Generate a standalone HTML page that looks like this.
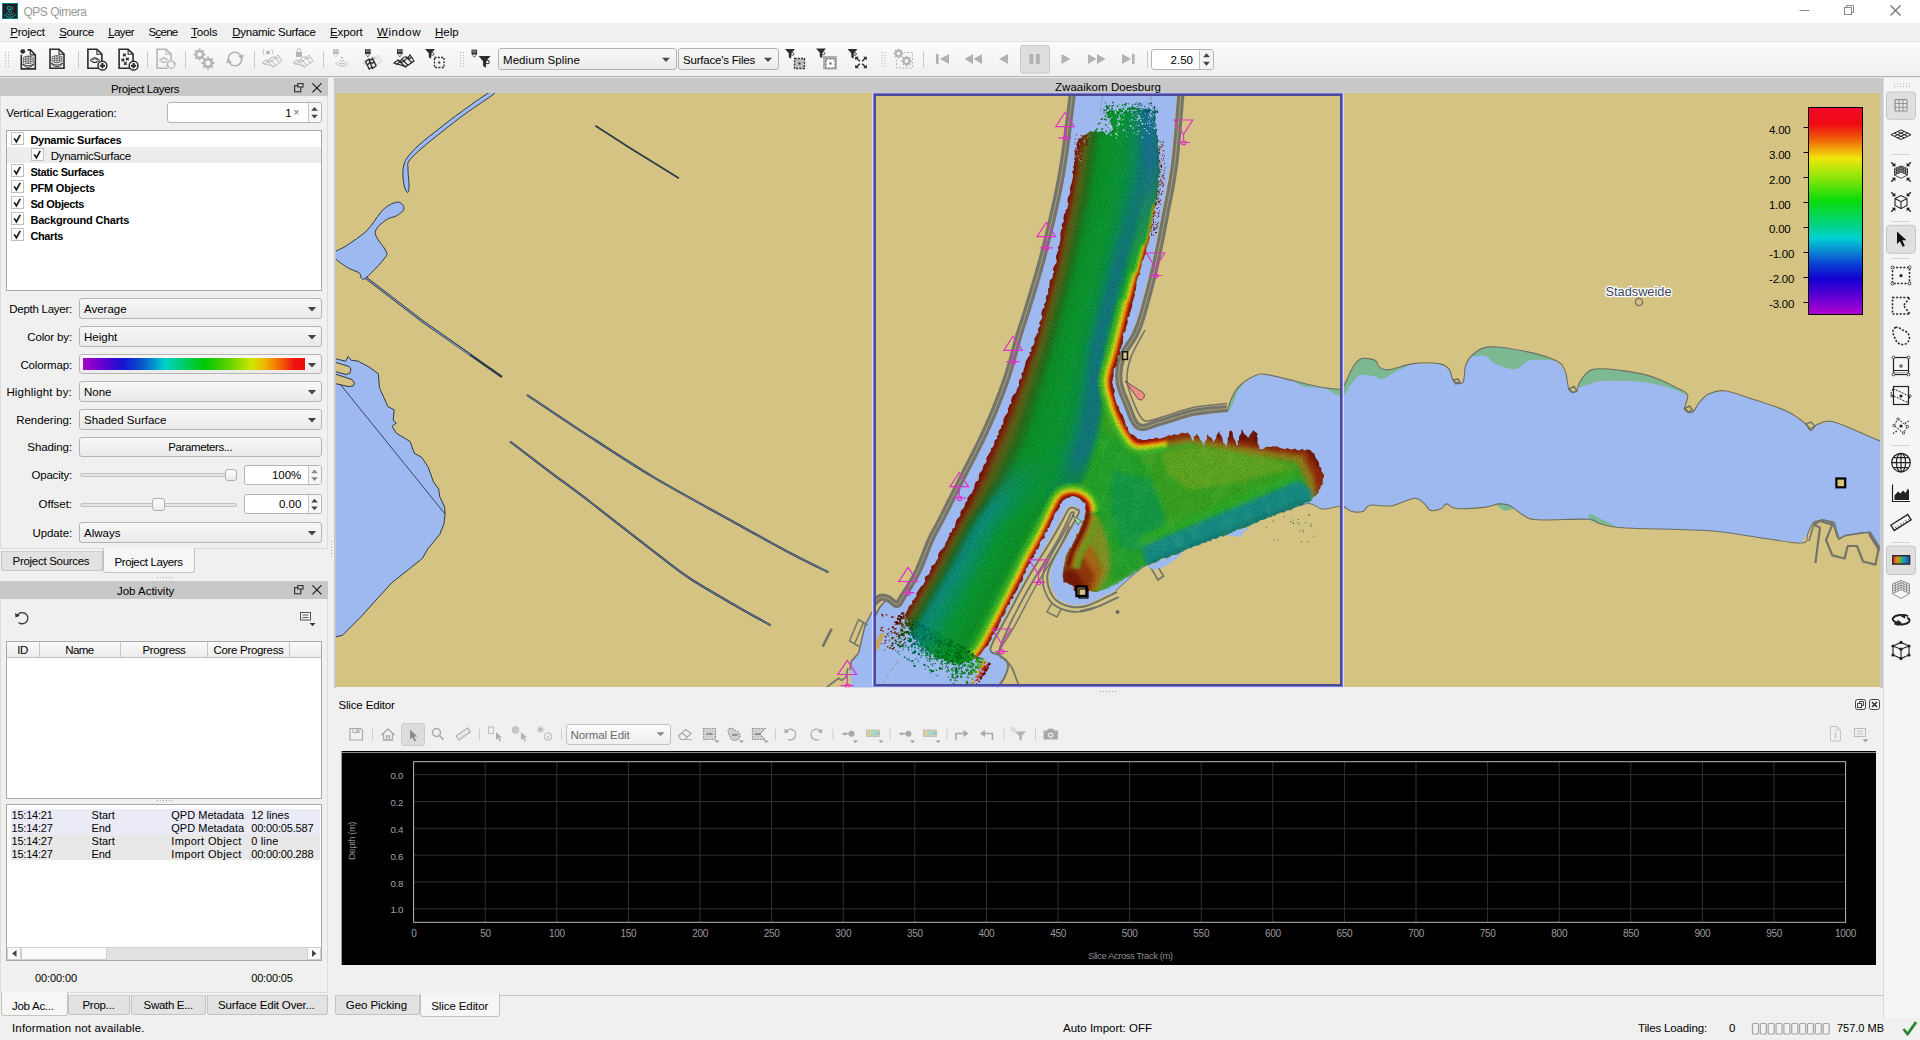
<!DOCTYPE html>
<html><head><meta charset="utf-8"><title>QPS Qimera</title><style>
html,body{margin:0;padding:0}
body{width:1920px;height:1040px;overflow:hidden;position:relative;background:#f0f0f0;font-family:"Liberation Sans",sans-serif;font-size:11.5px;color:#000}
.t{position:absolute;white-space:pre}
u{text-decoration:underline;text-underline-offset:0.6px;text-decoration-thickness:1px}
svg{overflow:visible}
</style></head><body>
<div style="position:absolute;left:0px;top:0px;width:1920px;height:23px;background:#fff"></div>
<svg style="position:absolute;left:2px;top:3px;" width="16" height="16"><rect x="0" y="0" width="16" height="16" fill="#231f20"/><rect x="0.5" y="0.5" width="15" height="15" fill="none" stroke="#0a7d8c" stroke-width="1"/><text x="8" y="6.6" font-family="Liberation Sans" font-size="6" font-weight="bold" fill="#1ea8bc" text-anchor="middle">Qi</text><path d="M5.8 8.3 q2.2 2.65 4.4 0" fill="none" stroke="#1e9cae" stroke-width="1"/><path d="M4 10 q4 4 8 0" fill="none" stroke="#1e9cae" stroke-width="1"/><path d="M2.2 11.7 q5.8 5.35 11.6 0" fill="none" stroke="#1e9cae" stroke-width="1"/></svg>
<div class="t" style="left:23.50px;top:4.94px;font-size:12px;line-height:15px;letter-spacing:-0.501px;color:#999;">QPS Qimera</div>
<svg style="position:absolute;left:0px;top:0px;" width="1920" height="23"><path d="M1799.5 10.5 h10" stroke="#8a8a8a" stroke-width="1"/><rect x="1844.5" y="7.5" width="7" height="7" fill="none" stroke="#8a8a8a"/><path d="M1846.5 7.5 v-2 h7 v7 h-2" fill="none" stroke="#8a8a8a"/><path d="M1890.5 5.5 l10 10 M1900.5 5.5 l-10 10" stroke="#6a6a6a" stroke-width="1.1"/></svg>
<div style="position:absolute;left:0px;top:23px;width:1920px;height:18px;background:#f0f0f0"></div>
<div class="t" style="left:10.20px;top:25.02px;font-size:11.5px;line-height:14px;letter-spacing:-0.184px;"><u>P</u>roject</div>
<div class="t" style="left:59.20px;top:25.02px;font-size:11.5px;line-height:14px;letter-spacing:-0.323px;"><u>S</u>ource</div>
<div class="t" style="left:108.20px;top:25.02px;font-size:11.5px;line-height:14px;letter-spacing:-0.593px;"><u>L</u>ayer</div>
<div class="t" style="left:148.50px;top:25.02px;font-size:11.5px;line-height:14px;letter-spacing:-0.721px;">S<u>c</u>ene</div>
<div class="t" style="left:191.00px;top:25.02px;font-size:11.5px;line-height:14px;letter-spacing:-0.069px;"><u>T</u>ools</div>
<div class="t" style="left:232.30px;top:25.02px;font-size:11.5px;line-height:14px;letter-spacing:-0.277px;"><u>D</u>ynamic Surface</div>
<div class="t" style="left:330.00px;top:25.02px;font-size:11.5px;line-height:14px;letter-spacing:-0.089px;"><u>E</u>xport</div>
<div class="t" style="left:377.00px;top:25.02px;font-size:11.5px;line-height:14px;letter-spacing:0.517px;"><u>W</u>indow</div>
<div class="t" style="left:435.00px;top:25.02px;font-size:11.5px;line-height:14px;letter-spacing:0.012px;"><u>H</u>elp</div>
<div style="position:absolute;left:0px;top:41px;width:1920px;height:35px;background:linear-gradient(#fbfbfb,#f7f7f7 40%,#efefef);border-top:1px solid #e2e2e2;box-sizing:border-box"></div>
<div style="position:absolute;left:0px;top:76px;width:1920px;height:1px;background:#b6b6b6"></div>
<div style="position:absolute;left:0px;top:77px;width:1920px;height:1px;background:#e6e6e6"></div>
<svg style="position:absolute;left:0px;top:0px;" width="1920" height="78"><rect x="5" y="52" width="1" height="1" fill="#b0b0b0"/><rect x="8" y="52" width="1" height="1" fill="#b0b0b0"/><rect x="5" y="54.8" width="1" height="1" fill="#b0b0b0"/><rect x="8" y="54.8" width="1" height="1" fill="#b0b0b0"/><rect x="5" y="57.6" width="1" height="1" fill="#b0b0b0"/><rect x="8" y="57.6" width="1" height="1" fill="#b0b0b0"/><rect x="5" y="60.4" width="1" height="1" fill="#b0b0b0"/><rect x="8" y="60.4" width="1" height="1" fill="#b0b0b0"/><rect x="5" y="63.2" width="1" height="1" fill="#b0b0b0"/><rect x="8" y="63.2" width="1" height="1" fill="#b0b0b0"/><rect x="5" y="66" width="1" height="1" fill="#b0b0b0"/><rect x="8" y="66" width="1" height="1" fill="#b0b0b0"/><rect x="460" y="52" width="1" height="1" fill="#b0b0b0"/><rect x="463" y="52" width="1" height="1" fill="#b0b0b0"/><rect x="460" y="54.8" width="1" height="1" fill="#b0b0b0"/><rect x="463" y="54.8" width="1" height="1" fill="#b0b0b0"/><rect x="460" y="57.6" width="1" height="1" fill="#b0b0b0"/><rect x="463" y="57.6" width="1" height="1" fill="#b0b0b0"/><rect x="460" y="60.4" width="1" height="1" fill="#b0b0b0"/><rect x="463" y="60.4" width="1" height="1" fill="#b0b0b0"/><rect x="460" y="63.2" width="1" height="1" fill="#b0b0b0"/><rect x="463" y="63.2" width="1" height="1" fill="#b0b0b0"/><rect x="460" y="66" width="1" height="1" fill="#b0b0b0"/><rect x="463" y="66" width="1" height="1" fill="#b0b0b0"/><rect x="881.5" y="52" width="1" height="1" fill="#b0b0b0"/><rect x="884.5" y="52" width="1" height="1" fill="#b0b0b0"/><rect x="881.5" y="54.8" width="1" height="1" fill="#b0b0b0"/><rect x="884.5" y="54.8" width="1" height="1" fill="#b0b0b0"/><rect x="881.5" y="57.6" width="1" height="1" fill="#b0b0b0"/><rect x="884.5" y="57.6" width="1" height="1" fill="#b0b0b0"/><rect x="881.5" y="60.4" width="1" height="1" fill="#b0b0b0"/><rect x="884.5" y="60.4" width="1" height="1" fill="#b0b0b0"/><rect x="881.5" y="63.2" width="1" height="1" fill="#b0b0b0"/><rect x="884.5" y="63.2" width="1" height="1" fill="#b0b0b0"/><rect x="881.5" y="66" width="1" height="1" fill="#b0b0b0"/><rect x="884.5" y="66" width="1" height="1" fill="#b0b0b0"/><rect x="78" y="51" width="1" height="17" fill="#c9c9c9"/><rect x="147" y="51" width="1" height="17" fill="#c9c9c9"/><rect x="185" y="51" width="1" height="17" fill="#c9c9c9"/><rect x="254" y="51" width="1" height="17" fill="#c9c9c9"/><rect x="323" y="51" width="1" height="17" fill="#c9c9c9"/><rect x="923" y="51" width="1" height="17" fill="#c9c9c9"/><rect x="1147" y="51" width="1" height="17" fill="#c9c9c9"/><g transform="translate(19.8 48.4)"><path d="M1.5 6.4 V20.5 H15.5 V6.5 L10.5 1.5 H7.7" fill="none" stroke="#2b2b2b" stroke-width="1.6"/><path d="M10.5 1.5 V6.5 H15.5" fill="none" stroke="#2b2b2b" stroke-width="1.1"/><path d="M3.1 8.8 q5.4 -3.2 10.8 0 v5.6 q-5.4 2.4 -10.8 0z" fill="#6a6a6a"/><rect x="4.00" y="9.20" width="1.5" height="1.3" fill="#f2f2f2"/><rect x="6.45" y="8.70" width="1.5" height="1.3" fill="#f2f2f2"/><rect x="8.90" y="8.70" width="1.5" height="1.3" fill="#f2f2f2"/><rect x="11.35" y="9.20" width="1.5" height="1.3" fill="#f2f2f2"/><rect x="4.00" y="11.40" width="1.5" height="1.3" fill="#f2f2f2"/><rect x="6.45" y="10.90" width="1.5" height="1.3" fill="#f2f2f2"/><rect x="8.90" y="10.90" width="1.5" height="1.3" fill="#f2f2f2"/><rect x="11.35" y="11.40" width="1.5" height="1.3" fill="#f2f2f2"/><rect x="4.00" y="13.60" width="1.5" height="1.3" fill="#f2f2f2"/><rect x="6.45" y="13.10" width="1.5" height="1.3" fill="#f2f2f2"/><rect x="8.90" y="13.10" width="1.5" height="1.3" fill="#f2f2f2"/><rect x="11.35" y="13.60" width="1.5" height="1.3" fill="#f2f2f2"/><path d="M3.1 15.6 q5.4 3.6 10.8 0 M3.1 16.4 q5.4 5.2 10.8 0 l0 -1.2" fill="none" stroke="#2b2b2b" stroke-width="0.9"/><path d="M3.1 15.2 v1.4" stroke="#2b2b2b" stroke-width="0.9"/><g transform="translate(1 0.5)"><path d="M-0.5 2.5 l5 0 M2 0 l0 5 M0.2 0.7 l3.6 3.6 M3.8 0.7 l-3.6 3.6" stroke="#2b2b2b" stroke-width="1.2"/><circle cx="2" cy="2.5" r="1.6" fill="#2b2b2b"/></g></g><g transform="translate(48.5 47.7)"><path d="M1.5 1.5 H10.5 L15.5 6.5 V20.5 H1.5 Z" fill="none" stroke="#2b2b2b" stroke-width="1.6" stroke-linejoin="miter"/><path d="M10.5 1.5 V6.5 H15.5" fill="none" stroke="#2b2b2b" stroke-width="1.1"/><path d="M3.1 8.8 q5.4 -3.2 10.8 0 v5.6 q-5.4 2.4 -10.8 0z" fill="#6a6a6a"/><rect x="4.00" y="9.20" width="1.5" height="1.3" fill="#f2f2f2"/><rect x="6.45" y="8.70" width="1.5" height="1.3" fill="#f2f2f2"/><rect x="8.90" y="8.70" width="1.5" height="1.3" fill="#f2f2f2"/><rect x="11.35" y="9.20" width="1.5" height="1.3" fill="#f2f2f2"/><rect x="4.00" y="11.40" width="1.5" height="1.3" fill="#f2f2f2"/><rect x="6.45" y="10.90" width="1.5" height="1.3" fill="#f2f2f2"/><rect x="8.90" y="10.90" width="1.5" height="1.3" fill="#f2f2f2"/><rect x="11.35" y="11.40" width="1.5" height="1.3" fill="#f2f2f2"/><rect x="4.00" y="13.60" width="1.5" height="1.3" fill="#f2f2f2"/><rect x="6.45" y="13.10" width="1.5" height="1.3" fill="#f2f2f2"/><rect x="8.90" y="13.10" width="1.5" height="1.3" fill="#f2f2f2"/><rect x="11.35" y="13.60" width="1.5" height="1.3" fill="#f2f2f2"/><path d="M3.1 15.6 q5.4 3.6 10.8 0 M3.1 16.4 q5.4 5.2 10.8 0 l0 -1.2" fill="none" stroke="#2b2b2b" stroke-width="0.9"/><path d="M3.1 15.2 v1.4" stroke="#2b2b2b" stroke-width="0.9"/></g><g transform="translate(86.4 47.7)"><path d="M1.5 1.5 H10.5 L15.5 6.5 V20.5 H1.5 Z" fill="none" stroke="#2b2b2b" stroke-width="1.6" stroke-linejoin="miter"/><path d="M10.5 1.5 V6.5 H15.5" fill="none" stroke="#2b2b2b" stroke-width="1.1"/><path d="M3.6 12.6 q4.8 -5.2 9.6 0 q-4.8 4.6 -9.6 0z" fill="none" stroke="#2b2b2b" stroke-width="0.95"/><path d="M5.2 12.4 q3.2 -3 6.4 0 M5.8 13.8 q2.6 2 5.2 0" fill="none" stroke="#2b2b2b" stroke-width="0.9"/><circle cx="16" cy="18" r="4.4" fill="#fff" stroke="#2b2b2b" stroke-width="1.5"/><path d="M13.4 18 h5.2 M16 15.4 v5.2" stroke="#2b2b2b" stroke-width="2.1"/></g><g transform="translate(117.6 47.7)"><path d="M1.5 1.5 H10.5 L15.5 6.5 V20.5 H1.5 Z" fill="none" stroke="#2b2b2b" stroke-width="1.6" stroke-linejoin="miter"/><path d="M10.5 1.5 V6.5 H15.5" fill="none" stroke="#2b2b2b" stroke-width="1.1"/><path d="M5.5 6 l2.6 2.6 M8.1 6 l-2.6 2.6" stroke="#2b2b2b" stroke-width="1.25"/><path d="M4 11 l2.6 2.6 M6.6 11 l-2.6 2.6" stroke="#2b2b2b" stroke-width="1.25"/><path d="M8.5 10 l2.6 2.6 M11.1 10 l-2.6 2.6" stroke="#2b2b2b" stroke-width="1.25"/><path d="M6.5 14.5 l2.6 2.6 M9.1 14.5 l-2.6 2.6" stroke="#2b2b2b" stroke-width="1.25"/><circle cx="16" cy="18" r="4.4" fill="#fff" stroke="#2b2b2b" stroke-width="1.5"/><path d="M13.4 18 h5.2 M16 15.4 v5.2" stroke="#2b2b2b" stroke-width="2.1"/></g><g transform="translate(155.6 47.7)"><path d="M1.5 1.5 H10.5 L15.5 6.5 V20.5 H1.5 Z" fill="none" stroke="#b4b4b4" stroke-width="1.6" stroke-linejoin="miter"/><path d="M10.5 1.5 V6.5 H15.5" fill="none" stroke="#b4b4b4" stroke-width="1.1"/><path d="M3.6 12.6 q4.8 -5.2 9.6 0 q-4.8 4.6 -9.6 0z" fill="none" stroke="#b4b4b4" stroke-width="0.95"/><path d="M5.2 12.4 q3.2 -3 6.4 0 M5.8 13.8 q2.6 2 5.2 0" fill="none" stroke="#b4b4b4" stroke-width="0.9"/><circle cx="15.5" cy="17" r="5" fill="#f3f3f3"/><path d="M11.90 17.51 A3.60 3.60 0 0 1 18.79 15.56" fill="none" stroke="#b4b4b4" stroke-width="1.1"/><path d="M19.10 16.49 A3.60 3.60 0 0 1 12.21 18.44" fill="none" stroke="#b4b4b4" stroke-width="1.1"/><path d="M17.15 15.15 L20.44 14.74 L19.31 17.72 Z" fill="#b4b4b4"/><path d="M13.85 18.85 L10.56 19.26 L11.69 16.28 Z" fill="#b4b4b4"/></g><path d="M203.91 53.35 L205.45 53.70 L205.45 55.30 L203.91 55.65 L203.43 56.80 L204.27 58.14 L203.14 59.27 L201.80 58.43 L200.65 58.91 L200.30 60.45 L198.70 60.45 L198.35 58.91 L197.20 58.43 L195.86 59.27 L194.73 58.14 L195.57 56.80 L195.09 55.65 L193.55 55.30 L193.55 53.70 L195.09 53.35 L195.57 52.20 L194.73 50.86 L195.86 49.73 L197.20 50.57 L198.35 50.09 L198.70 48.55 L200.30 48.55 L200.65 50.09 L201.80 50.57 L203.14 49.73 L204.27 50.86 L203.43 52.20Z M197.34 54.50 a2.16 2.16 0 1 0 4.32 0 a2.16 2.16 0 1 0 -4.32 0z" fill="#b4b4b4" fill-rule="evenodd"/><path d="M212.85 61.73 L214.54 62.12 L214.54 63.88 L212.85 64.27 L212.33 65.53 L213.25 67.00 L212.00 68.25 L210.53 67.33 L209.27 67.85 L208.88 69.54 L207.12 69.54 L206.73 67.85 L205.47 67.33 L204.00 68.25 L202.75 67.00 L203.67 65.53 L203.15 64.27 L201.46 63.88 L201.46 62.12 L203.15 61.73 L203.67 60.47 L202.75 59.00 L204.00 57.75 L205.47 58.67 L206.73 58.15 L207.12 56.46 L208.88 56.46 L209.27 58.15 L210.53 58.67 L212.00 57.75 L213.25 59.00 L212.33 60.47Z M205.62 63.00 a2.38 2.38 0 1 0 4.75 0 a2.38 2.38 0 1 0 -4.75 0z" fill="#b4b4b4" fill-rule="evenodd"/><path d="M228.40 59.94 A6.60 6.60 0 0 1 241.03 56.36" fill="none" stroke="#b4b4b4" stroke-width="1.6"/><path d="M241.60 58.06 A6.60 6.60 0 0 1 228.97 61.64" fill="none" stroke="#b4b4b4" stroke-width="1.6"/><path d="M238.02 55.61 L244.05 54.85 L241.98 60.32 Z" fill="#b4b4b4"/><path d="M231.98 62.39 L225.95 63.15 L228.02 57.68 Z" fill="#b4b4b4"/><g transform="translate(262 57)"><g transform="translate(0 0)" fill="none" stroke="#b4b4b4" stroke-width="0.9"><path d="M0 6 l4 -3 q2 2 4 -1 q2 -3 4 -2 q2 1.6 4 -2 l4 6 l-8 5.5 z"/><path d="M4 3 l8 7.5 M8 2 l6 6.5 M12 0 l6 5.8 M2 7.7 l5 -3.6 q2 2 4 -1 q2 -3 4 -2 q1 1 2.6 -1"/></g></g><circle cx="268" cy="52.5" r="2" fill="#b4b4b4"/><path d="M264 55 a5 5 0 0 1 0 -6 M271.5 49 a5 5 0 0 1 1 5" fill="none" stroke="#b4b4b4" stroke-width="0.8"/><g transform="translate(293 57)"><g transform="translate(0 0)" fill="none" stroke="#b4b4b4" stroke-width="0.9"><path d="M0 6 l4 -3 q2 2 4 -1 q2 -3 4 -2 q2 1.6 4 -2 l4 6 l-8 5.5 z"/><path d="M4 3 l8 7.5 M8 2 l6 6.5 M12 0 l6 5.8 M2 7.7 l5 -3.6 q2 2 4 -1 q2 -3 4 -2 q1 1 2.6 -1"/></g></g><rect x="296" y="52" width="6" height="5" fill="#b4b4b4"/><path d="M297.2 52 v-1.5 a1.8 1.8 0 0 1 3.6 0 v1.5" fill="none" stroke="#b4b4b4" stroke-width="1"/><g transform="translate(333 49)"><path d="M0 0 h5.6 v4.6 l-2.8 3.6 l-2.8 -3.6z" fill="#b4b4b4"/><path d="M1.4 0 v3.4 M2.8 0 v3.4 M4.2 0 v3.4" stroke="#fff" stroke-width="0.45"/><path d="M0.9 5 l1.9 2.3 l1.9 -2.3z" fill="#fff"/></g><path d="M339.8 60 q2.2 2.96 4.4 0" fill="none" stroke="#b4b4b4" stroke-width="0.9"/><path d="M337.7 61.5 q4.3 4.64 8.6 0" fill="none" stroke="#b4b4b4" stroke-width="0.9"/><path d="M335.6 63 q6.4 6.32 12.8 0" fill="none" stroke="#b4b4b4" stroke-width="0.9"/><circle cx="342" cy="57.6" r="0.9" fill="#b4b4b4"/><g transform="translate(365 49)"><path d="M0 0 h5.6 v4.6 l-2.8 3.6 l-2.8 -3.6z" fill="#2b2b2b"/><path d="M1.4 0 v3.4 M2.8 0 v3.4 M4.2 0 v3.4" stroke="#fff" stroke-width="0.45"/><path d="M0.9 5 l1.9 2.3 l1.9 -2.3z" fill="#fff"/></g><g transform="translate(362 57)"><g transform="translate(0 0)" fill="none" stroke="#d2d2d2" stroke-width="0.9"><path d="M0 6 l4 -3 q2 2 4 -1 q2 -3 4 -2 q2 1.6 4 -2 l4 6 l-8 5.5 z"/><path d="M4 3 l8 7.5 M8 2 l6 6.5 M12 0 l6 5.8 M2 7.7 l5 -3.6 q2 2 4 -1 q2 -3 4 -2 q1 1 2.6 -1"/></g></g><path d="M365.5 61.5 l3.5 -2.5 q2 1.8 3.6 -0.6 l3.5 7.5 l-3.5 2.6 q-1.5 -1.5 -3.4 0.6 z M367 65 l3.6 -2.6 q2 1.6 3.6 -0.8 M368.8 59.5 l3.6 8.4" fill="none" stroke="#2b2b2b" stroke-width="1.3"/><g transform="translate(397 49)"><path d="M0 0 h5.6 v4.6 l-2.8 3.6 l-2.8 -3.6z" fill="#2b2b2b"/><path d="M1.4 0 v3.4 M2.8 0 v3.4 M4.2 0 v3.4" stroke="#fff" stroke-width="0.45"/><path d="M0.9 5 l1.9 2.3 l1.9 -2.3z" fill="#fff"/></g><g transform="translate(394 57)"><g transform="translate(0 0)" fill="none" stroke="#2b2b2b" stroke-width="1.2"><path d="M0 6 l4 -3 q2 2 4 -1 q2 -3 4 -2 q2 1.6 4 -2 l4 6 l-8 5.5 z"/><path d="M4 3 l8 7.5 M8 2 l6 6.5 M12 0 l6 5.8 M2 7.7 l5 -3.6 q2 2 4 -1 q2 -3 4 -2 q1 1 2.6 -1"/></g></g><g transform="translate(425 49) scale(0.95)"><path d="M0 0 h10.5 l-4 4.6 v5.6 l-2.5 -1.6 v-4z" fill="#2b2b2b"/><circle cx="7.8" cy="5.2" r="1.5" fill="#fff" stroke="#2b2b2b" stroke-width="0.9"/></g><rect x="434.5" y="57.5" width="9.5" height="10" fill="none" stroke="#2b2b2b" stroke-width="1.3" stroke-dasharray="2 1.3"/><rect x="438.25" y="61.5" width="2" height="2" fill="#2b2b2b"/><g transform="translate(471.5 49.5)"><path d="M0 0 h5.6 v4.6 l-2.8 3.6 l-2.8 -3.6z" fill="#2b2b2b"/><path d="M1.4 0 v3.4 M2.8 0 v3.4 M4.2 0 v3.4" stroke="#fff" stroke-width="0.45"/><path d="M0.9 5 l1.9 2.3 l1.9 -2.3z" fill="#fff"/></g><g transform="translate(478.5 56) scale(1.15)"><path d="M0 0 h10.5 l-4 4.6 v5.6 l-2.5 -1.6 v-4z" fill="#2b2b2b"/><circle cx="7.8" cy="5.2" r="1.5" fill="#fff" stroke="#2b2b2b" stroke-width="0.9"/></g><g transform="translate(785 49) scale(0.95)"><path d="M0 0 h10.5 l-4 4.6 v5.6 l-2.5 -1.6 v-4z" fill="#2b2b2b"/><circle cx="7.8" cy="5.2" r="1.5" fill="#fff" stroke="#2b2b2b" stroke-width="0.9"/></g><rect x="794.5" y="58.5" width="10" height="10" fill="#bdbdbd" stroke="#2b2b2b" stroke-width="1.3" stroke-dasharray="2 1.3"/><rect x="798.5" y="62.5" width="2" height="2" fill="#2b2b2b"/><g transform="translate(816 48.5) scale(0.95)"><path d="M0 0 h10.5 l-4 4.6 v5.6 l-2.5 -1.6 v-4z" fill="#2b2b2b"/><circle cx="7.8" cy="5.2" r="1.5" fill="#fff" stroke="#2b2b2b" stroke-width="0.9"/></g><rect x="823" y="56" width="14" height="13.5" fill="#b0b0b0"/><rect x="826" y="59" width="9" height="9" fill="#fff" stroke="#555" stroke-width="1" stroke-dasharray="2 1.3"/><rect x="829.5" y="62.5" width="2" height="2" fill="#555"/><g transform="translate(847.5 49) scale(0.95)"><path d="M0 0 h10.5 l-4 4.6 v5.6 l-2.5 -1.6 v-4z" fill="#2b2b2b"/><circle cx="7.8" cy="5.2" r="1.5" fill="#fff" stroke="#2b2b2b" stroke-width="0.9"/></g><path d="M859.8 61.3 l-3.6 -3.6" stroke="#2b2b2b" stroke-width="1.5"/><path d="M855.2 56.7 l3.6 0 l-3.6 3.6 z" fill="#2b2b2b"/><path d="M862.2 61.3 l3.6 -3.6" stroke="#2b2b2b" stroke-width="1.5"/><path d="M866.8 56.7 l-3.6 0 l3.6 3.6 z" fill="#2b2b2b"/><path d="M859.8 63.7 l-3.6 3.6" stroke="#2b2b2b" stroke-width="1.5"/><path d="M855.2 68.3 l3.6 0 l-3.6 -3.6 z" fill="#2b2b2b"/><path d="M862.2 63.7 l3.6 3.6" stroke="#2b2b2b" stroke-width="1.5"/><path d="M866.8 68.3 l-3.6 0 l3.6 -3.6 z" fill="#2b2b2b"/><rect x="896.5" y="52.5" width="16" height="15.5" fill="none" stroke="#b4b4b4" stroke-dasharray="2 1.6"/><circle cx="898.5" cy="54" r="6" fill="#f6f6f6"/><circle cx="906.5" cy="61" r="5.6" fill="#f4f4f4"/><path d="M902.18 52.54 L903.46 52.83 L903.46 54.17 L902.18 54.46 L901.78 55.42 L902.47 56.53 L901.53 57.47 L900.42 56.78 L899.46 57.18 L899.17 58.46 L897.83 58.46 L897.54 57.18 L896.58 56.78 L895.47 57.47 L894.53 56.53 L895.22 55.42 L894.82 54.46 L893.54 54.17 L893.54 52.83 L894.82 52.54 L895.22 51.58 L894.53 50.47 L895.47 49.53 L896.58 50.22 L897.54 49.82 L897.83 48.54 L899.17 48.54 L899.46 49.82 L900.42 50.22 L901.53 49.53 L902.47 50.47 L901.78 51.58Z M896.70 53.50 a1.80 1.80 0 1 0 3.60 0 a1.80 1.80 0 1 0 -3.60 0z" fill="#b4b4b4" fill-rule="evenodd"/><path d="M910.47 59.96 L911.85 60.28 L911.85 61.72 L910.47 62.04 L910.04 63.07 L910.79 64.28 L909.78 65.29 L908.57 64.54 L907.54 64.97 L907.22 66.35 L905.78 66.35 L905.46 64.97 L904.43 64.54 L903.22 65.29 L902.21 64.28 L902.96 63.07 L902.53 62.04 L901.15 61.72 L901.15 60.28 L902.53 59.96 L902.96 58.93 L902.21 57.72 L903.22 56.71 L904.43 57.46 L905.46 57.03 L905.78 55.65 L907.22 55.65 L907.54 57.03 L908.57 57.46 L909.78 56.71 L910.79 57.72 L910.04 58.93Z M904.56 61.00 a1.94 1.94 0 1 0 3.89 0 a1.94 1.94 0 1 0 -3.89 0z" fill="#b4b4b4" fill-rule="evenodd"/><rect x="936" y="54" width="2.6" height="10" fill="#b2b2b2"/><path d="M949 54 v10 l-9 -5 z" fill="#b2b2b2"/><path d="M973 54 v10 l-8.5 -5 z" fill="#b2b2b2"/><path d="M982 54 v10 l-8.5 -5 z" fill="#b2b2b2"/><path d="M1008 54 v10 l-9 -5 z" fill="#b2b2b2"/><rect x="1020.5" y="45.5" width="29" height="27.5" rx="2.5" fill="#dedede" stroke="#c8c8c8"/><rect x="1029.5" y="54" width="3.8" height="10" fill="#b2b2b2"/><rect x="1036" y="54" width="3.8" height="10" fill="#b2b2b2"/><path d="M1061.5 54 v10 l9 -5 z" fill="#b2b2b2"/><path d="M1088 54 v10 l8.5 -5 z" fill="#b2b2b2"/><path d="M1097 54 v10 l8.5 -5 z" fill="#b2b2b2"/><path d="M1122 54 v10 l9 -5 z" fill="#b2b2b2"/><rect x="1132" y="54" width="2.6" height="10" fill="#b2b2b2"/></svg>
<div style="position:absolute;left:498px;top:48px;width:179px;height:22px;background:linear-gradient(#f8f8f8,#ebebeb);border:1px solid #b4b4b4;border-radius:3px;box-sizing:border-box"></div>
<div class="t" style="left:503.00px;top:53.02px;font-size:11.5px;line-height:14px;letter-spacing:0.072px;">Medium Spline</div>
<svg style="position:absolute;left:661px;top:57px;" width="10" height="6"><path d="M1 0.8 h8 l-4 4.2z" fill="#4a4a4a"/></svg>
<div style="position:absolute;left:678px;top:48px;width:101px;height:22px;background:linear-gradient(#f8f8f8,#ebebeb);border:1px solid #b4b4b4;border-radius:3px;box-sizing:border-box"></div>
<div class="t" style="left:683.00px;top:53.02px;font-size:11.5px;line-height:14px;letter-spacing:-0.203px;">Surface's Files</div>
<svg style="position:absolute;left:762.5px;top:57px;" width="10" height="6"><path d="M1 0.8 h8 l-4 4.2z" fill="#4a4a4a"/></svg>
<div style="position:absolute;left:1151px;top:49px;width:63px;height:21px;background:#fff;border:1px solid #b4b4b4;border-radius:3px;box-sizing:border-box"></div>
<div style="position:absolute;left:1199px;top:50px;width:14px;height:19px;background:#f4f4f4;border-left:1px solid #c4c4c4;border-radius:0 3px 3px 0;box-sizing:border-box"></div>
<div class="t" style="left:1170.62px;top:53.02px;font-size:11.5px;line-height:14px;">2.50</div>
<svg style="position:absolute;left:1201px;top:51px;" width="12" height="17"><path d="M2 6.2 l3.5 -4 l3.5 4z M2 10.8 l3.5 4 l3.5 -4z" fill="#444"/></svg>
<div style="position:absolute;left:331px;top:541px;width:1px;height:1px;background:#a8a8a8"></div><div style="position:absolute;left:331px;top:544px;width:1px;height:1px;background:#a8a8a8"></div><div style="position:absolute;left:331px;top:547px;width:1px;height:1px;background:#a8a8a8"></div><div style="position:absolute;left:331px;top:550px;width:1px;height:1px;background:#a8a8a8"></div><div style="position:absolute;left:331px;top:553px;width:1px;height:1px;background:#a8a8a8"></div><div style="position:absolute;left:331px;top:556px;width:1px;height:1px;background:#a8a8a8"></div>
<div style="position:absolute;left:0px;top:78px;width:328px;height:18px;background:#c8c8c8"></div>
<div class="t" style="left:111.00px;top:82.02px;font-size:11.5px;line-height:14px;letter-spacing:-0.393px;">Project Layers</div>
<svg style="position:absolute;left:293.5px;top:82.5px;" width="10" height="10"><rect x="0.6" y="2.6" width="6.2" height="6.2" fill="none" stroke="#333" stroke-width="1.15"/><rect x="3.8" y="0.6" width="5.2" height="3.4" fill="#d4d4d4" stroke="#333" stroke-width="1.15"/></svg>
<svg style="position:absolute;left:312px;top:83px;" width="10" height="10"><path d="M0.4 0.4 l9 9 M9.4 0.4 l-9 9" stroke="#111" stroke-width="1.05"/></svg>
<div style="position:absolute;left:0px;top:96px;width:328px;height:453px;background:#f0f0f0;border:1px solid #dcdcdc;border-top:none;box-sizing:border-box"></div>
<div class="t" style="left:6.20px;top:105.72px;font-size:11.5px;line-height:14px;letter-spacing:-0.067px;">Vertical Exaggeration:</div>
<div style="position:absolute;left:167px;top:102px;width:155px;height:21px;background:#fff;border:1px solid #b5b5b5;border-radius:3px;box-sizing:border-box"></div><div style="position:absolute;left:308px;top:103px;width:13px;height:19px;background:#f6f6f6;border-left:1px solid #c6c6c6;border-radius:0 3px 3px 0;box-sizing:border-box"></div><svg style="position:absolute;left:309px;top:103px;" width="12" height="19"><path d="M2.2 7.7 l3.3 -3.8 l3.3 3.8z M2.2 11.7 l3.3 3.8 l3.3 -3.8z" fill="#444"/></svg><div class="t" style="left:0.00px;top:-10.98px;font-size:11.5px;line-height:14px;"></div>
<div class="t" style="left:285.20px;top:105.72px;font-size:11.5px;line-height:14px;">1</div>
<div class="t" style="left:293.50px;top:107.23px;font-size:10px;line-height:12px;color:#666;">×</div>
<div style="position:absolute;left:6px;top:130px;width:316px;height:161px;background:#fff;border:1px solid #a9a9a9;box-sizing:border-box"></div>
<div style="position:absolute;left:7px;top:147px;width:314px;height:16px;background:#ededed"></div>
<div style="position:absolute;left:10.5px;top:132.2px;width:13px;height:13px;background:#fff;border:1px solid #c0c0c0;box-sizing:border-box"></div><svg style="position:absolute;left:10.5px;top:132.2px;" width="13" height="13"><path d="M3.2 6.4 l2.2 3.4 l3.8 -7" fill="none" stroke="#1a1a1a" stroke-width="1.7"/></svg>
<div class="t" style="left:30.40px;top:132.89px;font-size:11px;line-height:14px;letter-spacing:-0.273px;font-weight:bold;">Dynamic Surfaces</div>
<div style="position:absolute;left:30.5px;top:148.2px;width:13px;height:13px;background:#fff;border:1px solid #c0c0c0;box-sizing:border-box"></div><svg style="position:absolute;left:30.5px;top:148.2px;" width="13" height="13"><path d="M3.2 6.4 l2.2 3.4 l3.8 -7" fill="none" stroke="#1a1a1a" stroke-width="1.7"/></svg>
<div class="t" style="left:50.80px;top:148.72px;font-size:11.5px;line-height:14px;letter-spacing:-0.311px;">DynamicSurface</div>
<div style="position:absolute;left:10.5px;top:164.2px;width:13px;height:13px;background:#fff;border:1px solid #c0c0c0;box-sizing:border-box"></div><svg style="position:absolute;left:10.5px;top:164.2px;" width="13" height="13"><path d="M3.2 6.4 l2.2 3.4 l3.8 -7" fill="none" stroke="#1a1a1a" stroke-width="1.7"/></svg>
<div class="t" style="left:30.40px;top:164.89px;font-size:11px;line-height:14px;letter-spacing:-0.392px;font-weight:bold;">Static Surfaces</div>
<div style="position:absolute;left:10.5px;top:180.1px;width:13px;height:13px;background:#fff;border:1px solid #c0c0c0;box-sizing:border-box"></div><svg style="position:absolute;left:10.5px;top:180.1px;" width="13" height="13"><path d="M3.2 6.4 l2.2 3.4 l3.8 -7" fill="none" stroke="#1a1a1a" stroke-width="1.7"/></svg>
<div class="t" style="left:30.40px;top:180.79px;font-size:11px;line-height:14px;letter-spacing:-0.202px;font-weight:bold;">PFM Objects</div>
<div style="position:absolute;left:10.5px;top:196.1px;width:13px;height:13px;background:#fff;border:1px solid #c0c0c0;box-sizing:border-box"></div><svg style="position:absolute;left:10.5px;top:196.1px;" width="13" height="13"><path d="M3.2 6.4 l2.2 3.4 l3.8 -7" fill="none" stroke="#1a1a1a" stroke-width="1.7"/></svg>
<div class="t" style="left:30.40px;top:196.79px;font-size:11px;line-height:14px;letter-spacing:-0.376px;font-weight:bold;">Sd Objects</div>
<div style="position:absolute;left:10.5px;top:212.1px;width:13px;height:13px;background:#fff;border:1px solid #c0c0c0;box-sizing:border-box"></div><svg style="position:absolute;left:10.5px;top:212.1px;" width="13" height="13"><path d="M3.2 6.4 l2.2 3.4 l3.8 -7" fill="none" stroke="#1a1a1a" stroke-width="1.7"/></svg>
<div class="t" style="left:30.40px;top:212.79px;font-size:11px;line-height:14px;letter-spacing:-0.192px;font-weight:bold;">Background Charts</div>
<div style="position:absolute;left:10.5px;top:228.1px;width:13px;height:13px;background:#fff;border:1px solid #c0c0c0;box-sizing:border-box"></div><svg style="position:absolute;left:10.5px;top:228.1px;" width="13" height="13"><path d="M3.2 6.4 l2.2 3.4 l3.8 -7" fill="none" stroke="#1a1a1a" stroke-width="1.7"/></svg>
<div class="t" style="left:30.40px;top:228.79px;font-size:11px;line-height:14px;letter-spacing:-0.373px;font-weight:bold;">Charts</div>
<div class="t" style="left:9.20px;top:301.92px;font-size:11.5px;line-height:14px;letter-spacing:-0.253px;">Depth Layer:</div>
<div class="t" style="left:27.30px;top:330.02px;font-size:11.5px;line-height:14px;letter-spacing:-0.146px;">Color by:</div>
<div class="t" style="left:20.40px;top:357.72px;font-size:11.5px;line-height:14px;letter-spacing:-0.160px;">Colormap:</div>
<div class="t" style="left:6.40px;top:385.02px;font-size:11.5px;line-height:14px;letter-spacing:0.178px;">Highlight by:</div>
<div class="t" style="left:16.20px;top:412.92px;font-size:11.5px;line-height:14px;letter-spacing:-0.045px;">Rendering:</div>
<div class="t" style="left:27.30px;top:440.22px;font-size:11.5px;line-height:14px;letter-spacing:-0.087px;">Shading:</div>
<div class="t" style="left:31.50px;top:468.12px;font-size:11.5px;line-height:14px;letter-spacing:-0.210px;">Opacity:</div>
<div class="t" style="left:38.50px;top:497.12px;font-size:11.5px;line-height:14px;letter-spacing:-0.023px;">Offset:</div>
<div class="t" style="left:32.60px;top:525.92px;font-size:11.5px;line-height:14px;letter-spacing:-0.125px;">Update:</div>
<div style="position:absolute;left:79px;top:298px;width:243px;height:21px;background:linear-gradient(#f7f7f7,#eaeaea);border:1px solid #b5b5b5;border-radius:3px;box-sizing:border-box"></div><svg style="position:absolute;left:307px;top:307px;" width="10" height="6"><path d="M0.8 0 h8.4 l-4.2 4.4z" fill="#444"/></svg><div class="t" style="left:84.00px;top:302.22px;font-size:11.5px;line-height:14px;">Average</div>
<div style="position:absolute;left:79px;top:326px;width:243px;height:21px;background:linear-gradient(#f7f7f7,#eaeaea);border:1px solid #b5b5b5;border-radius:3px;box-sizing:border-box"></div><svg style="position:absolute;left:307px;top:335px;" width="10" height="6"><path d="M0.8 0 h8.4 l-4.2 4.4z" fill="#444"/></svg><div class="t" style="left:84.00px;top:330.22px;font-size:11.5px;line-height:14px;">Height</div>
<div style="position:absolute;left:79px;top:354px;width:243px;height:20px;background:linear-gradient(#f7f7f7,#eaeaea);border:1px solid #b5b5b5;border-radius:3px;box-sizing:border-box"></div><svg style="position:absolute;left:307px;top:363px;" width="10" height="6"><path d="M0.8 0 h8.4 l-4.2 4.4z" fill="#444"/></svg>
<div style="position:absolute;left:83px;top:357.5px;width:222px;height:12px;background:linear-gradient(90deg,#a800c8 0%,#5a00d0 10%,#1414d2 18%,#0a50c8 26%,#00a0d0 33%,#00d2c8 37%,#00cc60 46%,#00c800 55%,#64d200 66%,#d2e600 76%,#f0b400 82%,#f06400 89%,#f01414 95%,#f00a0a 100%)"></div>
<div style="position:absolute;left:79px;top:381px;width:243px;height:21px;background:linear-gradient(#f7f7f7,#eaeaea);border:1px solid #b5b5b5;border-radius:3px;box-sizing:border-box"></div><svg style="position:absolute;left:307px;top:390px;" width="10" height="6"><path d="M0.8 0 h8.4 l-4.2 4.4z" fill="#444"/></svg><div class="t" style="left:84.00px;top:385.22px;font-size:11.5px;line-height:14px;">None</div>
<div style="position:absolute;left:79px;top:409px;width:243px;height:21px;background:linear-gradient(#f7f7f7,#eaeaea);border:1px solid #b5b5b5;border-radius:3px;box-sizing:border-box"></div><svg style="position:absolute;left:307px;top:418px;" width="10" height="6"><path d="M0.8 0 h8.4 l-4.2 4.4z" fill="#444"/></svg><div class="t" style="left:84.00px;top:413.22px;font-size:11.5px;line-height:14px;">Shaded Surface</div>
<div style="position:absolute;left:79px;top:436.5px;width:243px;height:20.5px;background:linear-gradient(#f9f9f9,#e9e9e9);border:1px solid #b5b5b5;border-radius:3px;box-sizing:border-box"></div>
<div class="t" style="left:168.20px;top:440.22px;font-size:11.5px;line-height:14px;letter-spacing:-0.386px;">Parameters...</div>
<div style="position:absolute;left:80px;top:473.2px;width:157px;height:4px;background:#e4e4e4;border:1px solid #c2c2c2;border-radius:2px;box-sizing:border-box"></div><div style="position:absolute;left:224.5px;top:468.7px;width:12.5px;height:12.5px;background:linear-gradient(#fdfdfd,#ececec);border:1px solid #b0b0b0;border-radius:3px;box-sizing:border-box"></div>
<div style="position:absolute;left:244px;top:465px;width:78px;height:20px;background:#fff;border:1px solid #b5b5b5;border-radius:3px;box-sizing:border-box"></div><div style="position:absolute;left:308px;top:466px;width:13px;height:18px;background:#f6f6f6;border-left:1px solid #c6c6c6;border-radius:0 3px 3px 0;box-sizing:border-box"></div><svg style="position:absolute;left:309px;top:466px;" width="12" height="18"><path d="M2.2 7.2 l3.3 -3.8 l3.3 3.8z M2.2 11.2 l3.3 3.8 l3.3 -3.8z" fill="#888"/></svg><div class="t" style="left:271.89px;top:468.12px;font-size:11.5px;line-height:14px;">100%</div>
<div style="position:absolute;left:80px;top:502.5px;width:157px;height:4px;background:#e4e4e4;border:1px solid #c2c2c2;border-radius:2px;box-sizing:border-box"></div><div style="position:absolute;left:152px;top:498px;width:12.5px;height:12.5px;background:linear-gradient(#fdfdfd,#ececec);border:1px solid #b0b0b0;border-radius:3px;box-sizing:border-box"></div>
<div style="position:absolute;left:244px;top:493.5px;width:78px;height:20.5px;background:#fff;border:1px solid #b5b5b5;border-radius:3px;box-sizing:border-box"></div><div style="position:absolute;left:308px;top:494.5px;width:13px;height:18.5px;background:#f6f6f6;border-left:1px solid #c6c6c6;border-radius:0 3px 3px 0;box-sizing:border-box"></div><svg style="position:absolute;left:309px;top:494.5px;" width="12" height="18.5"><path d="M2.2 7.45 l3.3 -3.8 l3.3 3.8z M2.2 11.45 l3.3 3.8 l3.3 -3.8z" fill="#444"/></svg><div class="t" style="left:278.92px;top:497.12px;font-size:11.5px;line-height:14px;">0.00</div>
<div style="position:absolute;left:79px;top:521.5px;width:243px;height:21px;background:linear-gradient(#f7f7f7,#eaeaea);border:1px solid #b5b5b5;border-radius:3px;box-sizing:border-box"></div><svg style="position:absolute;left:307px;top:530.5px;" width="10" height="6"><path d="M0.8 0 h8.4 l-4.2 4.4z" fill="#444"/></svg><div class="t" style="left:84.00px;top:525.72px;font-size:11.5px;line-height:14px;">Always</div>
<div style="position:absolute;left:1px;top:551px;width:101.5px;height:20px;background:#e2e2e2;border:1px solid #c3c3c3;border-top-color:#d0d0d0;border-radius:0 0 3px 3px;box-sizing:border-box"></div>
<div class="t" style="left:12.60px;top:553.82px;font-size:11.5px;line-height:14px;letter-spacing:-0.298px;">Project Sources</div>
<div style="position:absolute;left:102.5px;top:548px;width:92px;height:24.5px;background:#f6f6f6;border:1px solid #c3c3c3;border-top:none;border-radius:0 0 3px 3px;box-sizing:border-box"></div>
<div class="t" style="left:114.40px;top:554.62px;font-size:11.5px;line-height:14px;letter-spacing:-0.371px;">Project Layers</div>
<div style="position:absolute;left:157px;top:576.5px;width:1px;height:1px;background:#a8a8a8"></div><div style="position:absolute;left:160px;top:576.5px;width:1px;height:1px;background:#a8a8a8"></div><div style="position:absolute;left:163px;top:576.5px;width:1px;height:1px;background:#a8a8a8"></div><div style="position:absolute;left:166px;top:576.5px;width:1px;height:1px;background:#a8a8a8"></div><div style="position:absolute;left:169px;top:576.5px;width:1px;height:1px;background:#a8a8a8"></div><div style="position:absolute;left:172px;top:576.5px;width:1px;height:1px;background:#a8a8a8"></div>
<div style="position:absolute;left:0px;top:580.5px;width:328px;height:18px;background:#c8c8c8"></div>
<div class="t" style="left:117.00px;top:583.92px;font-size:11.5px;line-height:14px;letter-spacing:-0.018px;">Job Activity</div>
<svg style="position:absolute;left:293.5px;top:584.8px;" width="10" height="10"><rect x="0.6" y="2.6" width="6.2" height="6.2" fill="none" stroke="#333" stroke-width="1.15"/><rect x="3.8" y="0.6" width="5.2" height="3.4" fill="#d4d4d4" stroke="#333" stroke-width="1.15"/></svg>
<svg style="position:absolute;left:312px;top:585.2px;" width="10" height="10"><path d="M0.4 0.4 l9 9 M9.4 0.4 l-9 9" stroke="#111" stroke-width="1.05"/></svg>
<div style="position:absolute;left:0px;top:598.5px;width:328px;height:394.5px;background:#f0f0f0;border:1px solid #dcdcdc;border-top:none;box-sizing:border-box"></div>
<svg style="position:absolute;left:14px;top:610px;" width="16" height="16"><path d="M3 6.2 A5.6 5.6 0 1 1 4.6 12.4" fill="none" stroke="#333" stroke-width="1.3"/><path d="M1 3 l0.6 4.6 l4.2 -1.8z" fill="#333"/></svg>
<svg style="position:absolute;left:299px;top:611px;" width="20" height="16"><rect x="1.5" y="1.5" width="10" height="7.5" fill="none" stroke="#555" stroke-width="1"/><path d="M3.5 4 h6 M3.5 6.5 h6" stroke="#555" stroke-width="0.9"/><path d="M10.5 12 h6 l-3 3.2z" fill="#333"/></svg>
<div style="position:absolute;left:6px;top:640.5px;width:316px;height:158px;background:#fff;border:1px solid #a9a9a9;box-sizing:border-box"></div>
<div style="position:absolute;left:7px;top:641.5px;width:314px;height:16px;background:linear-gradient(#fafafa,#ececec);border-bottom:1px solid #bdbdbd;box-sizing:border-box"></div>
<div style="position:absolute;left:38.5px;top:641.5px;width:1px;height:16px;background:#c6c6c6"></div>
<div style="position:absolute;left:119.5px;top:641.5px;width:1px;height:16px;background:#c6c6c6"></div>
<div style="position:absolute;left:207px;top:641.5px;width:1px;height:16px;background:#c6c6c6"></div>
<div style="position:absolute;left:288.5px;top:641.5px;width:1px;height:16px;background:#c6c6c6"></div>
<div class="t" style="left:17.30px;top:643.32px;font-size:11.5px;line-height:14px;letter-spacing:-0.550px;">ID</div>
<div class="t" style="left:65.30px;top:643.32px;font-size:11.5px;line-height:14px;letter-spacing:-0.619px;">Name</div>
<div class="t" style="left:142.40px;top:643.32px;font-size:11.5px;line-height:14px;letter-spacing:-0.377px;">Progress</div>
<div class="t" style="left:213.50px;top:643.32px;font-size:11.5px;line-height:14px;letter-spacing:-0.318px;">Core Progress</div>
<div style="position:absolute;left:157px;top:800.3px;width:1px;height:1px;background:#a8a8a8"></div><div style="position:absolute;left:160px;top:800.3px;width:1px;height:1px;background:#a8a8a8"></div><div style="position:absolute;left:163px;top:800.3px;width:1px;height:1px;background:#a8a8a8"></div><div style="position:absolute;left:166px;top:800.3px;width:1px;height:1px;background:#a8a8a8"></div><div style="position:absolute;left:169px;top:800.3px;width:1px;height:1px;background:#a8a8a8"></div><div style="position:absolute;left:172px;top:800.3px;width:1px;height:1px;background:#a8a8a8"></div>
<div style="position:absolute;left:6px;top:803.5px;width:316px;height:157px;background:#fff;border:1px solid #a9a9a9;box-sizing:border-box"></div>
<div style="position:absolute;left:11px;top:808.5px;width:309px;height:25.5px;background:#ebebf8"></div>
<div style="position:absolute;left:11px;top:834px;width:309px;height:26px;background:#e8e8e8"></div>
<div class="t" style="left:11.50px;top:808.09px;font-size:11px;line-height:14px;letter-spacing:-0.214px;">15:14:21</div>
<div class="t" style="left:91.60px;top:808.09px;font-size:11px;line-height:14px;letter-spacing:-0.026px;">Start</div>
<div class="t" style="left:171.30px;top:808.09px;font-size:11px;line-height:14px;letter-spacing:0.012px;">QPD Metadata</div>
<div class="t" style="left:251.20px;top:808.09px;font-size:11px;line-height:14px;letter-spacing:0.011px;">12 lines</div>
<div class="t" style="left:11.50px;top:821.09px;font-size:11px;line-height:14px;letter-spacing:-0.214px;">15:14:27</div>
<div class="t" style="left:91.60px;top:821.09px;font-size:11px;line-height:14px;letter-spacing:-0.124px;">End</div>
<div class="t" style="left:171.30px;top:821.09px;font-size:11px;line-height:14px;letter-spacing:0.012px;">QPD Metadata</div>
<div class="t" style="left:251.20px;top:821.09px;font-size:11px;line-height:14px;letter-spacing:-0.160px;">00:00:05.587</div>
<div class="t" style="left:11.50px;top:834.19px;font-size:11px;line-height:14px;letter-spacing:-0.214px;">15:14:27</div>
<div class="t" style="left:91.60px;top:834.19px;font-size:11px;line-height:14px;letter-spacing:-0.026px;">Start</div>
<div class="t" style="left:171.30px;top:834.19px;font-size:11px;line-height:14px;letter-spacing:0.337px;">Import Object</div>
<div class="t" style="left:251.20px;top:834.19px;font-size:11px;line-height:14px;letter-spacing:0.184px;">0 line</div>
<div class="t" style="left:11.50px;top:846.89px;font-size:11px;line-height:14px;letter-spacing:-0.214px;">15:14:27</div>
<div class="t" style="left:91.60px;top:846.89px;font-size:11px;line-height:14px;letter-spacing:-0.124px;">End</div>
<div class="t" style="left:171.30px;top:846.89px;font-size:11px;line-height:14px;letter-spacing:0.337px;">Import Object</div>
<div class="t" style="left:251.20px;top:846.89px;font-size:11px;line-height:14px;letter-spacing:-0.160px;">00:00:00.288</div>
<div style="position:absolute;left:7px;top:946.5px;width:314px;height:13px;background:#e2e2e2;border-top:1px solid #cfcfcf;box-sizing:border-box"></div>
<div style="position:absolute;left:7px;top:946.5px;width:13.5px;height:13px;background:#fbfbfb;border:1px solid #cfcfcf;box-sizing:border-box"></div>
<div style="position:absolute;left:307px;top:946.5px;width:14px;height:13px;background:#fbfbfb;border:1px solid #cfcfcf;box-sizing:border-box"></div>
<div style="position:absolute;left:20.5px;top:946.5px;width:86px;height:13px;background:#fafafa;border:1px solid #cfcfcf;box-sizing:border-box"></div>
<svg style="position:absolute;left:7px;top:946.5px;" width="14" height="13"><path d="M9.5 3 v7 l-4.4 -3.5z" fill="#444"/></svg>
<svg style="position:absolute;left:307px;top:946.5px;" width="14" height="13"><path d="M5 3 v7 l4.4 -3.5z" fill="#444"/></svg>
<div class="t" style="left:35.10px;top:970.79px;font-size:11px;line-height:14px;letter-spacing:-0.127px;">00:00:00</div>
<div class="t" style="left:251.20px;top:970.79px;font-size:11px;line-height:14px;letter-spacing:-0.164px;">00:00:05</div>
<div style="position:absolute;left:1px;top:992px;width:66.5px;height:24px;background:#f6f6f6;border:1px solid #c3c3c3;border-top:none;border-radius:0 0 3px 3px;box-sizing:border-box"></div>
<div class="t" style="left:12.00px;top:999.02px;font-size:11.5px;line-height:14px;letter-spacing:-0.278px;">Job Ac...</div>
<div style="position:absolute;left:68px;top:995px;width:62px;height:19.5px;background:#e2e2e2;border:1px solid #c3c3c3;border-top-color:#d0d0d0;border-radius:0 0 3px 3px;box-sizing:border-box"></div>
<div class="t" style="left:82.40px;top:997.92px;font-size:11.5px;line-height:14px;letter-spacing:-0.225px;">Prop...</div>
<div style="position:absolute;left:131px;top:995px;width:74.5px;height:19.5px;background:#e2e2e2;border:1px solid #c3c3c3;border-top-color:#d0d0d0;border-radius:0 0 3px 3px;box-sizing:border-box"></div>
<div class="t" style="left:143.60px;top:997.92px;font-size:11.5px;line-height:14px;letter-spacing:-0.321px;">Swath E...</div>
<div style="position:absolute;left:207px;top:995px;width:120.5px;height:19.5px;background:#e2e2e2;border:1px solid #c3c3c3;border-top-color:#d0d0d0;border-radius:0 0 3px 3px;box-sizing:border-box"></div>
<div class="t" style="left:218.10px;top:997.92px;font-size:11.5px;line-height:14px;letter-spacing:-0.160px;">Surface Edit Over...</div>
<div style="position:absolute;left:334px;top:78px;width:1549px;height:15px;background:#c8c8c8"></div>
<div style="position:absolute;left:1880px;top:78px;width:3px;height:610px;background:#c8c8c8"></div>
<div style="position:absolute;left:334px;top:78px;width:2px;height:610px;background:#c8c8c8"></div>
<svg style="position:absolute;left:0px;top:0px;" width="1920" height="700"><defs><clipPath id="mapclip"><rect x="336" y="93" width="1544" height="594.5"/></clipPath></defs><g clip-path="url(#mapclip)"><rect x="335" y="93" width="1545" height="594" fill="#d4c383"/><path d="M488.5 93.0 C482.8 96.2 469.1 106.2 461.0 112.0 C452.9 117.8 447.0 122.5 440.0 128.0 C433.0 133.5 424.5 140.0 419.0 145.0 C413.5 150.0 409.6 154.3 407.0 158.0 C404.4 161.7 404.2 163.8 403.5 167.0 C402.8 170.2 402.8 173.7 403.0 177.0 C403.2 180.3 403.8 184.4 404.5 187.0 C405.2 189.6 406.8 192.3 407.5 192.5 C408.2 192.7 408.8 190.4 409.0 188.0 C409.2 185.6 408.7 181.3 408.5 178.0 C408.3 174.7 407.9 170.8 408.0 168.0 C408.1 165.2 406.7 164.3 409.0 161.0 C411.3 157.7 416.3 153.0 422.0 148.0 C427.7 143.0 435.8 136.7 443.0 131.0 C450.2 125.3 456.3 120.3 465.0 114.0 C473.7 107.7 491.1 96.5 495.0 93.0 C498.9 89.5 494.2 89.8 488.5 93.0Z" fill="#9db9f0" stroke="#2c3a48" stroke-width="1"/><path d="M335.0 252.0 C336.9 249.9 341.4 249.1 346.7 245.5 C352.0 241.9 361.1 236.2 366.7 230.7 C372.3 225.2 377.0 216.8 380.5 212.7 C384.0 208.6 385.1 207.7 387.9 205.9 C390.7 204.1 394.9 202.2 397.4 202.1 C399.9 202.0 402.2 203.9 403.1 205.3 C404.1 206.7 404.2 208.8 403.1 210.6 C402.0 212.4 399.2 214.3 396.3 215.9 C393.4 217.5 389.3 217.3 385.8 220.1 C382.3 222.9 375.2 227.7 375.2 232.8 C375.2 237.9 384.2 246.6 385.8 250.8 C387.4 255.0 387.9 253.8 384.7 258.2 C381.5 262.6 370.6 273.8 366.7 277.2 C362.8 280.6 362.6 279.0 361.4 278.3 C360.2 277.6 361.6 274.8 359.3 273.0 C357.0 271.2 351.8 270.2 347.7 267.7 C343.6 265.2 337.1 260.8 335.0 258.2 C332.9 255.6 333.1 254.1 335.0 252.0Z" fill="#9db9f0" stroke="#2c3a48" stroke-width="1"/><path d="M365.5 277.5 L423.5 322 L502 377" fill="none" stroke="#2c3a48" stroke-width="2.4"/><path d="M365.5 277.5 L423.5 322 L470 355" fill="none" stroke="#9db9f0" stroke-width="0.9"/><path d="M595.4 125.8 L630 148 L678.9 178.2" fill="none" stroke="#2c3a48" stroke-width="1.7"/><path d="M527.0 394.8 C536.7 401.3 564.4 420.1 585.4 433.8 C606.4 447.5 628.9 462.5 653.0 476.9 C677.1 491.3 706.9 507.2 730.0 520.0 C753.1 532.8 775.1 545.1 791.5 553.8 C807.9 562.5 822.3 569.2 828.5 572.3" fill="none" stroke="#2c3a48" stroke-width="2.2"/><path d="M527.0 394.8 C536.7 401.3 564.4 420.1 585.4 433.8 C606.4 447.5 628.9 462.5 653.0 476.9 C677.1 491.3 706.9 507.2 730.0 520.0 C753.1 532.8 775.1 545.1 791.5 553.8 C807.9 562.5 822.3 569.2 828.5 572.3" fill="none" stroke="#7f9fd8" stroke-width="0.7"/><path d="M510.0 441.5 C516.4 446.4 534.9 460.6 548.5 470.8 C562.1 481.1 574.1 489.7 591.5 503.0 C608.9 516.3 636.6 538.2 653.0 550.8 C669.4 563.4 675.6 569.0 690.0 578.5 C704.4 588.0 725.8 599.9 739.2 607.7 C752.6 615.5 765.4 622.3 770.6 625.2" fill="none" stroke="#2c3a48" stroke-width="2.2"/><path d="M510.0 441.5 C516.4 446.4 534.9 460.6 548.5 470.8 C562.1 481.1 574.1 489.7 591.5 503.0 C608.9 516.3 636.6 538.2 653.0 550.8 C669.4 563.4 675.6 569.0 690.0 578.5 C704.4 588.0 725.8 599.9 739.2 607.7 C752.6 615.5 765.4 622.3 770.6 625.2" fill="none" stroke="#7f9fd8" stroke-width="0.7"/><path d="M831.7 628.6 L822.7 646.6" stroke="#74746a" stroke-width="2.6"/><path d="M335.0 358.6 L345.6 361.2 L348.1 356.5 L350.9 360.1 L358.3 361.2 L369.9 367.5 L378.4 373.8 L379.4 387.6 L387.9 406.6 L394.2 409.8 L393.2 420.4 L396.3 422.9 L392.1 426.3 L396.3 433.1 L410.1 441.5 L414.3 453.2 L421.7 457.4 L428.1 466.9 L433.4 481.7 L438.7 489.1 L439.7 496.5 L444.6 507.1 L445.0 514.5 L443.9 524.0 L439.7 534.6 L428.1 548.4 L422.3 558.5 L391.5 583.0 L360.8 616.9 L342.3 635.4 L335.0 637.0 L330.0 637.0 L330.0 358.6Z" fill="#9db9f0" stroke="#2c3a48" stroke-width="1"/><path d="M335.0 362.2 L349.0 366.5 L351.0 369.0 L350.0 373.0 L346.0 374.5 L335.0 371.5Z" fill="#d4c383" stroke="#2c3a48" stroke-width="1"/><path d="M335.0 374.0 L352.0 379.5 L354.5 383.0 L353.0 386.0 L348.0 386.5 L335.0 383.5Z" fill="#d4c383" stroke="#2c3a48" stroke-width="1"/><path d="M340.3 384.4 L445 513.9" stroke="#2c3a48" stroke-width="0.9"/><path d="M873.5 611.0 L865.0 625.5 L858.6 653.0 L851.2 661.4 L850.2 670.0 L851.2 688.0 L873.5 688.0Z" fill="#9db9f0"/><path d="M872 612 L865 625.5 L858.6 653 L851.2 661.4 L850.2 670" fill="none" stroke="#74746a" stroke-width="1.6"/><path d="M867.5 625 L858.5 619.5 L849.5 641 L859 646.5 M863.5 622.5 L854.5 644" fill="none" stroke="#74746a" stroke-width="1.5"/><path d="M827 687 L838.5 678.3 L841.7 680.4 L846 677.3 L848 668" fill="none" stroke="#74746a" stroke-width="1.6"/><path d="M1076.0 93.0 L1066.5 165.0 L1056.5 215.0 L1044.0 265.0 L1029.0 315.0 L1022.5 335.0 L1009.5 380.0 L989.5 430.0 L964.5 480.0 L944.5 520.0 L934.0 540.0 L921.0 572.0 L905.0 597.0 L897.0 606.0 L888.0 600.5 L884.0 602.0 L879.0 609.0 L875.0 616.0 L875.0 686.0 L997.0 686.0 L1005.0 677.0 L1007.0 664.0 L1000.0 656.0 L988.0 648.0 L1004.0 618.0 L1025.0 579.0 L1048.5 541.0 L1061.0 519.0 L1066.5 508.5 L1071.0 505.5 L1077.0 507.0 L1080.5 512.5 L1068.0 536.0 L1054.5 560.0 L1049.5 574.0 L1051.0 588.0 L1058.0 599.5 L1072.5 605.5 L1087.5 604.0 L1116.0 590.5 L1147.0 564.5 L1185.0 549.5 L1227.0 531.5 L1252.0 523.0 L1290.0 509.0 L1309.0 503.5 L1322.0 509.0 L1335.0 507.1 L1343.0 505.8 L1351.2 511.2 L1363.3 511.2 L1370.0 505.2 L1391.5 505.8 L1414.4 498.2 L1423.8 503.1 L1430.6 510.4 L1441.4 508.5 L1446.7 503.9 L1456.2 508.5 L1485.8 507.1 L1499.2 503.9 L1510.0 505.8 L1523.5 515.2 L1536.9 519.8 L1588.1 519.2 L1598.9 523.3 L1623.0 527.7 L1709.0 530.8 L1755.4 537.0 L1801.5 543.0 L1807.7 533.8 L1813.0 523.0 L1820.0 520.5 L1832.0 523.0 L1838.0 538.0 L1845.0 536.0 L1869.0 533.0 L1879.0 549.0 L1881.0 552.0 L1881.0 441.5 L1863.0 433.8 L1832.3 421.5 L1817.0 424.6 L1810.8 430.8 L1804.6 423.0 L1786.0 410.8 L1755.4 400.0 L1724.6 390.8 L1709.2 393.8 L1700.0 401.5 L1692.3 412.3 L1684.6 409.2 L1687.7 395.4 L1678.5 388.8 L1651.5 376.6 L1620.4 370.4 L1592.1 369.6 L1580.0 381.9 L1576.0 391.4 L1569.2 390.0 L1565.2 371.2 L1555.8 360.4 L1523.5 351.0 L1488.5 346.9 L1472.3 355.0 L1465.6 365.8 L1462.9 382.5 L1453.5 380.6 L1449.4 369.8 L1440.0 363.9 L1413.1 363.6 L1388.9 369.8 L1379.4 367.1 L1375.4 360.4 L1361.9 358.5 L1353.8 365.8 L1344.4 384.6 L1339.8 389.2 L1317.0 386.5 L1295.4 381.2 L1265.8 374.4 L1255.0 375.8 L1238.9 386.5 L1230.8 400.0 L1227.0 412.0 L1193.0 416.0 L1161.0 425.5 L1136.0 430.0 L1123.0 404.0 L1115.0 381.0 L1118.0 357.0 L1131.0 335.0 L1138.5 315.0 L1151.5 265.0 L1161.5 215.0 L1170.5 165.0 L1177.0 93.0Z" fill="#9db9f0"/><path d="M1343.0 393.0 C1343.0 391.3 1342.6 389.1 1344.4 384.6 C1346.2 380.1 1350.9 370.2 1353.8 365.8 C1356.7 361.4 1358.3 359.4 1361.9 358.5 C1365.5 357.6 1372.5 359.0 1375.4 360.4 C1378.3 361.8 1377.2 365.5 1379.4 367.1 C1381.7 368.7 1383.7 370.2 1388.9 369.8 C1394.1 369.4 1409.1 364.2 1410.4 364.4 C1411.8 364.6 1401.7 368.6 1397.0 371.0 C1392.3 373.4 1385.6 378.1 1382.0 379.0 C1378.4 379.9 1379.0 377.1 1375.4 376.5 C1371.8 375.9 1364.7 373.8 1360.6 375.2 C1356.5 376.6 1353.7 381.3 1351.0 384.6 C1348.3 387.9 1345.7 393.6 1344.4 395.0 C1343.1 396.4 1343.0 394.7 1343.0 393.0Z" fill="#7cb892"/><path d="M1472.3 355.0 C1474.5 353.4 1480.0 347.6 1488.5 346.9 C1497.0 346.2 1512.3 348.8 1523.5 351.0 C1534.7 353.2 1551.3 358.8 1555.8 360.4 C1560.3 362.0 1554.9 360.4 1550.4 360.4 C1545.9 360.4 1534.3 359.0 1528.9 360.4 C1523.5 361.8 1521.6 367.2 1518.0 368.5 C1514.4 369.8 1511.3 368.9 1507.3 368.0 C1503.3 367.1 1497.5 364.9 1493.9 363.0 C1490.3 361.1 1489.0 357.4 1485.8 356.3 C1482.6 355.2 1477.2 356.5 1475.0 356.3 C1472.8 356.1 1470.0 356.6 1472.3 355.0Z" fill="#7cb892"/><path d="M1580.0 381.9 C1582.2 378.9 1585.4 371.5 1592.1 369.6 C1598.8 367.7 1610.5 369.2 1620.4 370.4 C1630.3 371.6 1641.8 373.5 1651.5 376.6 C1661.2 379.7 1672.8 385.6 1678.5 388.8 C1684.2 392.0 1686.4 395.8 1686.0 396.0 C1685.6 396.2 1682.0 392.2 1676.0 390.0 C1670.0 387.8 1659.3 384.5 1650.0 383.0 C1640.7 381.5 1628.5 381.3 1620.0 381.0 C1611.5 380.7 1604.2 380.8 1598.9 381.4 C1593.6 382.0 1591.5 383.6 1588.1 384.6 C1584.7 385.6 1580.0 387.8 1578.7 387.3 C1577.4 386.9 1577.8 384.8 1580.0 381.9Z" fill="#7cb892"/><path d="M1227.0 412.0 C1226.8 411.0 1228.8 404.2 1230.8 400.0 C1232.8 395.8 1236.9 389.2 1238.9 386.5 C1240.9 383.8 1243.3 382.9 1243.0 384.0 C1242.7 385.1 1238.8 389.3 1237.0 393.0 C1235.2 396.7 1233.7 402.8 1232.0 406.0 C1230.3 409.2 1227.2 413.0 1227.0 412.0Z" fill="#7cb892"/><path d="M1295.4 381.2 C1298.7 381.8 1309.6 385.2 1317.0 386.5 C1324.4 387.8 1335.5 388.3 1339.8 389.2 C1344.1 390.1 1343.0 390.9 1343.0 392.0 C1343.0 393.1 1343.1 396.7 1339.8 396.0 C1336.5 395.3 1328.6 389.5 1323.0 388.0 C1317.4 386.5 1310.3 387.8 1306.0 387.0 C1301.7 386.2 1298.8 384.0 1297.0 383.0 C1295.2 382.0 1292.1 380.6 1295.4 381.2Z" fill="#7cb892"/><path d="M1496.5 504.0 C1496.5 503.5 1497.0 503.6 1499.2 503.9 C1501.5 504.2 1507.7 505.0 1510.0 505.8 C1512.3 506.6 1514.0 507.7 1513.2 508.5 C1512.4 509.3 1507.4 510.9 1505.0 510.6 C1502.6 510.4 1500.4 508.1 1499.0 507.0 C1497.6 505.9 1496.5 504.5 1496.5 504.0Z" fill="#7cb892"/><path d="M1589.4 513.8 C1590.9 513.5 1594.6 515.9 1598.9 518.0 C1603.2 520.1 1615.0 525.6 1615.0 526.5 C1615.0 527.4 1603.1 524.4 1598.9 523.3 C1594.7 522.2 1591.6 521.6 1590.0 520.0 C1588.4 518.4 1587.9 514.1 1589.4 513.8Z" fill="#7cb892"/><path d="M1343.0 505.8 C1344.4 506.7 1347.8 510.3 1351.2 511.2 C1354.6 512.1 1360.2 512.2 1363.3 511.2 C1366.4 510.2 1365.3 506.1 1370.0 505.2 C1374.7 504.3 1384.1 507.0 1391.5 505.8 C1398.9 504.6 1409.0 498.6 1414.4 498.2 C1419.8 497.8 1421.1 501.1 1423.8 503.1 C1426.5 505.1 1427.7 509.5 1430.6 510.4 C1433.5 511.3 1438.7 509.6 1441.4 508.5 C1444.1 507.4 1444.2 503.9 1446.7 503.9 C1449.2 503.9 1449.7 508.0 1456.2 508.5 C1462.7 509.0 1478.6 507.9 1485.8 507.1 C1493.0 506.3 1495.2 504.1 1499.2 503.9 C1503.2 503.7 1506.0 503.9 1510.0 505.8 C1514.0 507.7 1519.0 512.9 1523.5 515.2 C1528.0 517.5 1526.1 519.1 1536.9 519.8 C1547.7 520.5 1577.8 518.6 1588.1 519.2 C1598.4 519.8 1593.1 521.9 1598.9 523.3 C1604.7 524.7 1604.7 526.5 1623.0 527.7 C1641.3 529.0 1686.9 529.2 1709.0 530.8 C1731.1 532.3 1740.0 535.0 1755.4 537.0 C1770.8 539.0 1792.8 543.5 1801.5 543.0 C1810.2 542.5 1805.8 537.1 1807.7 533.8 C1809.6 530.5 1811.0 525.2 1813.0 523.0 C1815.0 520.8 1816.8 520.5 1820.0 520.5 C1823.2 520.5 1829.0 520.1 1832.0 523.0 C1835.0 525.9 1835.8 535.8 1838.0 538.0 C1840.2 540.2 1839.8 536.8 1845.0 536.0 C1850.2 535.2 1863.3 530.8 1869.0 533.0 C1874.7 535.2 1877.0 545.8 1879.0 549.0 C1881.0 552.2 1880.7 551.5 1881.0 552.0" fill="none" stroke="#6e6e62" stroke-width="1.1"/><path d="M1881.0 441.5 C1878.0 440.2 1871.1 437.1 1863.0 433.8 C1854.9 430.5 1840.0 423.0 1832.3 421.5 C1824.6 420.0 1820.6 423.1 1817.0 424.6 C1813.4 426.2 1812.9 431.1 1810.8 430.8 C1808.7 430.5 1808.7 426.3 1804.6 423.0 C1800.5 419.7 1794.2 414.6 1786.0 410.8 C1777.8 407.0 1765.6 403.3 1755.4 400.0 C1745.2 396.7 1732.3 391.8 1724.6 390.8 C1716.9 389.8 1713.3 392.0 1709.2 393.8 C1705.1 395.6 1702.8 398.4 1700.0 401.5 C1697.2 404.6 1694.9 411.0 1692.3 412.3 C1689.7 413.6 1685.4 412.0 1684.6 409.2 C1683.8 406.4 1688.7 398.8 1687.7 395.4 C1686.7 392.0 1684.5 391.9 1678.5 388.8 C1672.5 385.7 1661.2 379.7 1651.5 376.6 C1641.8 373.5 1630.3 371.6 1620.4 370.4 C1610.5 369.2 1598.8 367.7 1592.1 369.6 C1585.4 371.5 1582.7 378.3 1580.0 381.9 C1577.3 385.5 1577.8 390.0 1576.0 391.4 C1574.2 392.8 1571.0 393.4 1569.2 390.0 C1567.4 386.6 1567.4 376.1 1565.2 371.2 C1563.0 366.3 1562.8 363.8 1555.8 360.4 C1548.8 357.0 1534.7 353.2 1523.5 351.0 C1512.3 348.8 1497.0 346.2 1488.5 346.9 C1480.0 347.6 1476.1 351.9 1472.3 355.0 C1468.5 358.1 1467.2 361.2 1465.6 365.8 C1464.0 370.4 1464.9 380.0 1462.9 382.5 C1460.9 385.0 1455.8 382.7 1453.5 380.6 C1451.2 378.5 1451.7 372.6 1449.4 369.8 C1447.2 367.0 1446.0 364.9 1440.0 363.9 C1434.0 362.9 1421.6 362.6 1413.1 363.6 C1404.6 364.6 1394.5 369.2 1388.9 369.8 C1383.3 370.4 1381.7 368.7 1379.4 367.1 C1377.2 365.5 1378.3 361.8 1375.4 360.4 C1372.5 359.0 1365.5 357.6 1361.9 358.5 C1358.3 359.4 1356.7 361.4 1353.8 365.8 C1350.9 370.2 1346.7 380.7 1344.4 384.6 C1342.1 388.5 1344.4 388.9 1339.8 389.2 C1335.2 389.5 1324.4 387.8 1317.0 386.5 C1309.6 385.2 1303.9 383.2 1295.4 381.2 C1286.9 379.2 1272.5 375.3 1265.8 374.4 C1259.1 373.5 1259.5 373.8 1255.0 375.8 C1250.5 377.8 1242.9 382.5 1238.9 386.5 C1234.9 390.5 1232.8 395.8 1230.8 400.0 C1228.8 404.2 1227.6 410.0 1227.0 412.0" fill="none" stroke="#6e6e62" stroke-width="1.1"/><path d="M1116.0 590.5 C1121.2 586.2 1135.5 571.3 1147.0 564.5 C1158.5 557.7 1171.7 555.0 1185.0 549.5 C1198.3 544.0 1215.8 535.9 1227.0 531.5 C1238.2 527.1 1241.5 526.8 1252.0 523.0 C1262.5 519.2 1280.5 512.2 1290.0 509.0 C1299.5 505.8 1303.7 503.5 1309.0 503.5 C1314.3 503.5 1317.7 508.4 1322.0 509.0 C1326.3 509.6 1331.5 507.6 1335.0 507.1 C1338.5 506.6 1341.7 506.0 1343.0 505.8" fill="none" stroke="#6e6e62" stroke-width="1"/><path d="M1453 380 l3 4 l4 -2 l-2 -3z M1569 389 l4 3.500 l4 -1.500 l-3 -4.500z M1684.500 408.500 l4 3.500 l4 -2 l-3 -4z M1806 424 l4 5 l5 -3 l-4 -4z" fill="none" stroke="#6e6e62" stroke-width="1.4"/><path d="M1815.4 563 L1820 527.7 L1813.8 524.6 L1820 521 L1832.3 524.6 L1826 540 L1832.3 555.4 L1844.6 558.500 L1847.700 546 L1857 546 L1863 561.500 L1875.400 564.600 L1878.500 549.200 L1869 533.800" fill="none" stroke="#74746a" stroke-width="2.200" stroke-linejoin="round"/><path d="M1809 541 L1814 524 L1822 519.500 L1834 522.500 L1839 539 L1845 535.500 L1870 532 L1880 548" fill="none" stroke="#74746a" stroke-width="1.600"/></g></svg>
<svg style="position:absolute;left:0px;top:0px;" width="1920" height="700"><defs><clipPath id="mapclip2"><rect x="336" y="93" width="1544" height="594.5"/></clipPath><filter id="bl" color-interpolation-filters="sRGB" x="-5%" y="-5%" width="110%" height="110%"><feGaussianBlur stdDeviation="1.6"/></filter><filter id="bl1" color-interpolation-filters="sRGB" x="-5%" y="-5%" width="110%" height="110%"><feGaussianBlur stdDeviation="0.9"/></filter><filter id="bl2" color-interpolation-filters="sRGB" x="-5%" y="-5%" width="110%" height="110%"><feGaussianBlur stdDeviation="2.3"/></filter><filter id="nz" x="0" y="0" width="100%" height="100%"><feTurbulence type="fractalNoise" baseFrequency="0.9 0.7" numOctaves="2" seed="4" result="t"/><feColorMatrix in="t" type="matrix" values="0 0 0 0 0  0 0 0 0 0  0 0 0 0 0  1.6 1.2 0 0 -1.05"/></filter><filter id="nz2" x="0" y="0" width="100%" height="100%"><feTurbulence type="fractalNoise" baseFrequency="0.09 0.06" numOctaves="2" seed="9" result="t"/><feColorMatrix in="t" type="matrix" values="0 0 0 0 1  0 0 0 0 1  0 0 0 0 0.4  1.8 1.4 0 0 -1.35"/></filter><clipPath id="surfclip"><path d="M1077.7 140.7 L1079.1 138.8 L1081.6 137.9 L1082.6 135.2 L1085.5 134.7 L1087.9 133.1 L1090.6 131.0 L1092.9 132.1 L1095.3 131.2 L1097.6 132.2 L1100.1 131.6 L1102.7 131.8 L1105.3 132.7 L1108.3 133.7 L1110.2 131.2 L1112.4 131.2 L1112.5 128.7 L1112.4 126.2 L1110.9 124.2 L1109.8 122.1 L1109.9 119.5 L1107.1 118.4 L1107.7 115.6 L1105.7 113.6 L1107.6 112.0 L1109.5 110.6 L1111.9 109.6 L1114.7 110.3 L1117.1 108.5 L1119.8 109.0 L1122.4 108.7 L1125.0 107.7 L1127.5 108.1 L1130.0 107.0 L1132.5 107.0 L1135.0 107.4 L1137.5 108.4 L1140.0 107.8 L1142.5 107.9 L1144.8 108.8 L1147.2 108.8 L1149.7 108.8 L1151.6 110.0 L1155.1 112.0 L1156.2 114.2 L1155.6 116.5 L1155.8 118.7 L1155.1 120.9 L1155.6 123.1 L1156.6 125.3 L1155.2 127.6 L1157.2 129.7 L1156.7 132.0 L1156.3 134.3 L1157.9 136.3 L1157.5 138.6 L1158.8 140.7 L1157.8 143.1 L1157.9 145.4 L1158.6 147.5 L1158.1 149.8 L1159.4 152.0 L1158.7 154.3 L1159.0 156.6 L1159.2 158.9 L1159.6 161.1 L1158.8 163.4 L1158.7 165.7 L1159.8 168.0 L1159.5 170.2 L1161.0 172.6 L1159.2 174.6 L1159.1 176.8 L1158.0 178.9 L1158.0 181.1 L1158.9 183.5 L1158.4 185.7 L1157.4 187.8 L1158.5 190.1 L1157.3 192.2 L1157.6 194.5 L1157.4 196.7 L1157.2 198.9 L1155.4 200.9 L1156.4 203.2 L1155.9 205.4 L1155.2 207.5 L1153.8 209.6 L1155.1 212.2 L1153.9 214.4 L1153.2 216.6 L1152.1 218.8 L1151.8 221.1 L1151.3 223.4 L1152.1 225.9 L1151.4 228.2 L1151.1 230.5 L1149.6 232.6 L1149.0 234.7 L1150.1 237.5 L1149.4 239.8 L1148.7 242.0 L1148.1 244.3 L1146.9 246.5 L1146.1 248.7 L1146.1 251.2 L1146.1 253.6 L1144.5 255.7 L1144.0 258.0 L1143.0 260.2 L1141.5 262.2 L1141.5 264.7 L1141.2 267.1 L1140.4 269.3 L1139.6 271.6 L1140.3 274.2 L1137.9 276.0 L1137.5 278.4 L1136.7 280.6 L1136.2 283.0 L1136.5 285.5 L1135.8 287.8 L1135.8 290.2 L1134.2 292.1 L1134.9 294.5 L1134.3 296.7 L1133.5 298.7 L1133.0 300.9 L1132.1 302.9 L1132.2 305.2 L1131.8 307.4 L1130.9 309.5 L1130.5 311.6 L1129.4 313.6 L1129.6 316.0 L1127.2 317.7 L1127.3 319.9 L1127.7 322.3 L1127.0 324.4 L1126.2 326.5 L1125.6 328.6 L1125.6 330.9 L1123.5 332.7 L1122.7 334.7 L1123.3 337.2 L1122.7 339.3 L1123.0 341.6 L1122.5 343.8 L1121.4 345.8 L1121.0 348.0 L1119.3 349.8 L1120.1 352.3 L1119.9 354.6 L1117.3 356.2 L1117.7 358.6 L1117.9 360.9 L1116.5 362.8 L1117.0 365.3 L1115.4 367.1 L1113.8 369.0 L1113.5 371.2 L1113.3 373.5 L1113.7 375.8 L1112.9 377.9 L1112.7 379.9 L1111.9 382.3 L1112.8 384.5 L1112.7 386.8 L1114.1 388.8 L1114.8 391.0 L1114.0 393.5 L1114.1 395.8 L1114.8 397.9 L1115.4 400.2 L1116.1 402.7 L1117.1 405.2 L1119.0 407.3 L1119.2 410.0 L1120.3 412.4 L1122.0 414.2 L1123.1 416.4 L1123.8 418.8 L1124.9 420.9 L1125.2 423.5 L1125.8 426.0 L1127.9 427.6 L1128.0 430.3 L1129.2 432.8 L1130.9 434.3 L1133.4 435.0 L1135.2 436.4 L1136.8 438.0 L1137.9 439.3 L1140.1 439.2 L1142.4 439.9 L1144.7 440.3 L1146.9 439.9 L1149.0 439.0 L1151.2 439.1 L1153.5 439.3 L1155.5 437.5 L1157.8 438.6 L1160.2 438.9 L1162.4 438.0 L1164.7 437.4 L1166.8 436.2 L1169.0 435.0 L1171.6 435.8 L1173.6 434.2 L1176.1 434.7 L1178.5 434.7 L1180.6 433.1 L1183.0 432.8 L1185.5 433.6 L1187.3 432.5 L1189.4 434.2 L1190.6 436.3 L1191.6 438.5 L1192.8 441.5 L1193.8 439.4 L1193.8 436.6 L1196.4 435.4 L1196.0 433.4 L1197.7 435.3 L1199.3 437.2 L1199.9 439.5 L1201.7 441.3 L1203.0 443.4 L1204.0 446.4 L1204.3 443.7 L1205.1 441.2 L1206.9 439.2 L1206.9 436.3 L1207.3 434.5 L1208.9 436.6 L1211.5 438.1 L1213.0 440.4 L1213.6 442.8 L1214.5 440.4 L1216.2 438.3 L1216.5 435.6 L1217.8 433.3 L1219.7 430.7 L1219.2 433.6 L1221.3 435.4 L1222.1 437.8 L1222.8 440.2 L1223.2 442.8 L1225.2 444.6 L1226.9 447.3 L1226.6 444.9 L1227.3 442.8 L1227.9 440.6 L1227.5 438.2 L1229.0 436.3 L1229.1 434.1 L1229.3 431.8 L1230.4 430.2 L1232.5 432.0 L1232.8 434.6 L1233.1 437.0 L1234.3 439.2 L1235.6 441.3 L1236.1 443.7 L1237.1 446.0 L1238.2 444.1 L1237.4 441.5 L1239.0 439.7 L1239.0 437.3 L1239.7 435.2 L1241.3 433.4 L1241.4 431.1 L1241.9 429.1 L1243.0 431.6 L1244.2 434.0 L1246.6 435.7 L1248.2 438.1 L1249.3 436.0 L1250.5 434.0 L1252.1 432.2 L1253.1 429.9 L1255.3 431.9 L1257.7 433.7 L1256.9 436.3 L1257.7 438.7 L1257.5 441.2 L1257.6 443.7 L1259.3 446.0 L1259.0 448.6 L1261.4 449.3 L1263.6 448.8 L1265.8 447.1 L1268.1 446.8 L1270.4 447.3 L1272.6 446.3 L1275.1 446.4 L1277.6 446.4 L1280.0 448.0 L1282.4 448.6 L1284.9 449.2 L1287.6 447.9 L1290.0 449.5 L1292.4 449.4 L1294.8 448.4 L1297.1 450.1 L1299.5 450.4 L1302.0 448.8 L1304.3 450.5 L1306.7 449.4 L1309.1 449.7 L1310.5 450.3 L1311.9 452.2 L1314.3 453.5 L1314.9 455.8 L1315.8 457.9 L1317.2 459.8 L1318.6 461.8 L1319.2 464.0 L1319.2 466.4 L1321.4 467.9 L1321.1 470.4 L1322.2 472.5 L1323.9 474.2 L1324.1 476.8 L1322.9 479.1 L1322.6 481.6 L1323.0 484.2 L1320.5 486.2 L1320.5 488.5 L1318.7 489.9 L1318.6 492.8 L1316.8 494.3 L1315.7 496.3 L1313.0 496.9 L1312.3 499.3 L1311.0 501.2 L1309.0 502.5 L1306.5 502.2 L1304.4 503.2 L1302.7 505.2 L1300.7 506.2 L1297.9 505.4 L1296.1 506.9 L1293.9 507.5 L1292.2 509.5 L1290.1 510.4 L1287.5 509.9 L1285.6 511.2 L1283.7 512.7 L1280.9 511.7 L1279.0 513.1 L1276.8 513.6 L1275.2 515.9 L1272.5 515.1 L1271.0 517.5 L1268.2 516.7 L1266.5 518.3 L1264.5 519.4 L1262.2 519.8 L1259.9 519.9 L1258.3 522.0 L1256.4 523.1 L1254.0 523.2 L1252.1 524.6 L1250.2 525.7 L1248.0 526.4 L1246.1 527.5 L1243.9 528.0 L1241.7 528.6 L1239.6 529.4 L1237.2 529.3 L1235.5 531.1 L1233.3 531.5 L1231.4 533.0 L1229.2 533.5 L1227.4 535.0 L1225.2 535.4 L1223.3 536.7 L1220.6 536.0 L1218.7 537.2 L1216.9 538.8 L1214.6 539.1 L1212.2 538.9 L1210.7 541.4 L1208.0 540.8 L1206.2 542.4 L1204.1 543.1 L1201.7 543.2 L1200.0 544.9 L1197.8 545.5 L1195.5 545.9 L1193.2 546.1 L1191.6 548.3 L1189.1 548.1 L1187.1 549.1 L1185.0 550.1 L1183.1 551.4 L1181.1 552.3 L1179.2 553.7 L1177.0 554.4 L1175.0 555.3 L1172.3 554.8 L1170.6 556.6 L1168.6 557.6 L1166.6 558.5 L1163.9 557.8 L1161.7 558.6 L1159.8 559.8 L1158.0 561.4 L1155.9 562.3 L1153.8 563.0 L1151.5 563.5 L1149.7 564.9 L1147.4 565.1 L1145.6 566.6 L1142.8 566.5 L1140.8 567.7 L1139.4 569.7 L1137.7 571.5 L1134.9 571.3 L1133.7 573.8 L1131.7 574.9 L1130.1 576.7 L1127.7 577.2 L1125.6 578.2 L1123.6 579.4 L1122.0 581.2 L1119.7 581.8 L1118.1 584.0 L1115.8 584.4 L1113.8 585.7 L1111.3 586.1 L1109.5 587.7 L1107.4 588.7 L1105.0 589.1 L1102.9 590.2 L1100.4 590.4 L1098.3 591.5 L1096.3 592.0 L1094.0 591.9 L1091.8 591.4 L1089.6 590.8 L1087.2 591.5 L1085.1 591.4 L1082.0 591.0 L1079.9 593.7 L1077.4 593.7 L1076.0 591.8 L1073.6 590.5 L1073.9 587.6 L1072.4 585.2 L1070.1 584.7 L1068.2 583.5 L1066.3 582.4 L1063.2 582.2 L1063.4 579.3 L1062.7 576.7 L1062.7 574.1 L1063.1 571.9 L1063.5 569.7 L1063.4 567.4 L1064.5 565.4 L1064.4 563.2 L1065.4 560.8 L1065.5 558.0 L1066.0 555.4 L1067.3 553.1 L1068.7 550.9 L1069.2 548.6 L1071.7 547.3 L1072.1 545.1 L1073.3 543.1 L1074.2 541.1 L1075.4 539.2 L1076.0 537.0 L1076.0 534.5 L1078.6 533.3 L1079.5 531.0 L1080.0 528.5 L1081.1 526.3 L1082.3 524.1 L1082.1 521.4 L1084.5 519.7 L1084.5 517.0 L1085.1 515.1 L1085.3 512.8 L1086.1 510.6 L1084.8 508.5 L1085.7 506.2 L1085.8 503.3 L1083.3 502.2 L1081.5 500.5 L1080.0 498.5 L1077.8 497.4 L1075.5 496.5 L1073.0 496.0 L1070.6 496.4 L1068.5 498.0 L1066.6 498.0 L1064.9 499.5 L1062.6 500.4 L1061.8 502.7 L1059.9 503.9 L1060.0 506.5 L1058.9 508.6 L1057.5 510.4 L1055.7 512.1 L1054.6 514.1 L1053.7 516.2 L1053.4 518.7 L1052.0 520.5 L1051.1 522.6 L1050.1 524.7 L1049.8 527.1 L1047.2 528.4 L1047.6 531.2 L1045.1 532.5 L1044.2 534.5 L1044.9 537.5 L1042.9 539.0 L1041.2 540.6 L1039.8 542.4 L1039.7 544.9 L1039.0 547.0 L1038.1 549.1 L1035.6 550.2 L1035.9 553.0 L1034.1 554.6 L1033.9 557.0 L1032.1 558.5 L1030.2 560.1 L1030.7 562.9 L1028.4 564.3 L1028.0 566.6 L1026.2 568.3 L1025.6 570.6 L1025.5 573.1 L1023.2 574.5 L1023.0 577.0 L1022.9 579.5 L1021.9 581.6 L1019.9 583.1 L1018.9 585.2 L1018.2 587.4 L1017.4 589.6 L1016.0 591.5 L1015.0 593.6 L1012.9 595.1 L1013.5 598.0 L1011.0 599.3 L1009.8 601.2 L1010.1 604.0 L1007.5 605.3 L1006.8 607.5 L1005.4 609.4 L1005.6 612.1 L1004.4 614.0 L1003.3 616.1 L1001.0 617.5 L1000.8 619.9 L1000.1 622.1 L998.9 624.1 L998.2 626.2 L997.5 628.5 L996.4 630.4 L993.9 631.7 L993.9 634.2 L991.6 635.5 L991.8 638.3 L990.7 640.2 L989.2 642.0 L988.7 644.3 L987.3 646.1 L985.2 647.4 L983.7 649.5 L982.3 651.6 L981.0 653.8 L978.9 655.4 L977.7 657.1 L975.7 658.6 L973.3 659.0 L971.6 661.2 L968.8 660.5 L966.8 661.9 L964.3 662.0 L962.1 662.9 L959.9 664.5 L957.4 664.4 L955.6 662.0 L952.8 663.1 L950.7 661.8 L948.3 661.6 L945.9 661.1 L943.8 659.6 L941.6 658.5 L938.7 659.4 L937.4 657.3 L935.0 656.4 L933.5 654.5 L931.5 653.3 L929.3 652.3 L927.5 650.8 L925.7 649.3 L924.8 646.6 L922.4 645.9 L920.2 644.9 L919.2 642.2 L917.5 640.6 L914.9 640.0 L913.4 638.2 L912.7 636.1 L911.7 634.1 L911.3 631.8 L910.0 629.9 L909.5 627.7 L908.7 625.6 L908.5 623.3 L908.3 620.9 L907.2 619.0 L905.7 617.2 L904.8 614.9 L906.1 613.1 L906.9 611.0 L908.0 609.1 L908.5 606.9 L910.0 605.2 L912.4 604.0 L911.9 601.2 L913.7 599.7 L915.0 597.9 L916.6 596.3 L916.4 593.6 L917.6 591.8 L918.6 589.9 L920.0 588.1 L921.2 586.2 L923.3 584.9 L924.1 582.9 L925.3 581.0 L924.7 578.1 L925.8 576.2 L928.2 575.1 L929.7 573.3 L929.9 571.0 L931.2 569.2 L931.2 566.6 L933.0 565.1 L935.1 563.7 L935.9 561.7 L937.1 559.8 L938.3 557.9 L938.0 555.2 L938.8 553.1 L940.0 551.3 L941.7 549.7 L943.1 547.9 L944.7 546.3 L945.3 544.1 L946.2 542.1 L947.5 540.3 L948.1 537.8 L949.4 535.8 L949.5 533.1 L952.1 531.7 L952.2 529.0 L954.7 527.6 L955.3 525.1 L955.6 522.8 L956.3 520.5 L957.6 518.6 L959.4 517.0 L960.5 515.0 L960.4 512.3 L961.3 510.3 L963.2 508.7 L964.4 506.7 L965.0 504.4 L965.7 502.2 L967.5 500.6 L967.3 497.9 L968.9 496.2 L970.3 494.3 L972.3 492.7 L972.7 490.4 L974.2 488.6 L974.4 486.1 L974.9 483.8 L976.0 481.8 L978.4 480.4 L978.8 478.1 L979.0 475.7 L979.4 473.3 L981.2 471.7 L982.5 469.7 L983.0 467.4 L983.6 465.2 L985.3 463.5 L986.8 461.6 L986.3 458.9 L986.9 456.7 L988.4 454.9 L989.5 452.8 L991.0 451.0 L991.0 448.5 L993.1 446.9 L993.9 444.8 L994.4 442.5 L994.7 440.2 L997.2 438.8 L996.8 436.1 L998.8 434.5 L998.5 431.8 L999.4 429.8 L1001.4 428.1 L1001.2 425.7 L1003.4 424.1 L1003.3 421.7 L1003.5 419.3 L1004.4 417.3 L1005.7 415.3 L1007.0 413.5 L1008.4 411.6 L1007.6 408.9 L1008.9 407.0 L1009.4 404.8 L1011.8 403.3 L1010.9 400.5 L1011.6 398.4 L1012.4 396.3 L1013.9 394.5 L1015.8 392.8 L1016.6 390.7 L1017.1 388.5 L1018.5 386.7 L1019.2 384.5 L1018.8 381.9 L1019.4 379.8 L1021.7 378.2 L1022.0 376.0 L1021.3 373.4 L1023.4 371.8 L1023.6 369.5 L1024.4 367.4 L1025.0 365.3 L1025.5 363.1 L1025.9 360.9 L1027.3 359.0 L1028.2 357.0 L1030.2 355.3 L1029.2 352.6 L1031.7 351.2 L1031.0 348.5 L1032.0 346.6 L1033.8 344.8 L1034.5 342.7 L1034.5 340.4 L1034.5 338.0 L1036.1 336.2 L1036.7 334.1 L1038.6 332.4 L1037.8 329.8 L1038.8 327.6 L1040.4 325.6 L1039.1 322.9 L1040.5 320.8 L1041.9 318.7 L1042.3 316.4 L1041.3 313.7 L1041.8 311.4 L1042.4 309.2 L1044.8 307.3 L1043.9 304.7 L1045.5 302.6 L1046.4 300.5 L1045.8 298.0 L1046.3 295.8 L1048.3 293.9 L1048.2 291.5 L1048.0 289.1 L1049.6 287.2 L1049.3 284.7 L1049.8 282.5 L1049.8 280.2 L1052.0 278.4 L1052.9 276.3 L1052.9 273.9 L1054.2 271.9 L1052.8 269.1 L1053.8 267.1 L1054.9 265.0 L1056.4 263.0 L1056.8 260.8 L1056.0 258.4 L1056.1 256.1 L1056.9 254.0 L1057.4 251.9 L1058.8 249.9 L1057.6 247.4 L1059.3 245.4 L1059.6 243.2 L1060.2 241.1 L1060.5 238.9 L1060.5 236.6 L1060.3 234.3 L1060.7 232.1 L1061.2 229.9 L1062.6 228.0 L1061.6 225.4 L1062.4 223.3 L1064.0 221.4 L1063.5 218.9 L1063.6 216.7 L1064.0 214.5 L1065.6 212.5 L1065.6 210.2 L1067.5 208.4 L1067.8 206.1 L1068.5 204.0 L1067.5 201.4 L1067.6 199.2 L1068.1 197.0 L1069.5 195.0 L1070.3 192.8 L1070.1 190.4 L1070.0 188.0 L1070.7 185.7 L1071.5 183.5 L1072.0 181.2 L1072.5 178.9 L1073.0 176.7 L1073.0 174.3 L1072.1 171.8 L1074.0 169.7 L1073.2 167.2 L1074.1 165.0 L1074.0 162.5 L1075.1 160.2 L1074.2 157.6 L1074.6 155.2 L1074.9 152.8 L1075.0 150.3 L1076.8 148.2 L1076.8 145.7 L1077.0 143.2Z"/></clipPath><linearGradient id="sg0" gradientUnits="userSpaceOnUse" x1="0" y1="100" x2="0" y2="690"><stop offset="0.1" stop-color="#751105"/><stop offset="0.28" stop-color="#751105"/><stop offset="0.6" stop-color="#751105"/><stop offset="0.69" stop-color="#751105"/></linearGradient><linearGradient id="sg1" gradientUnits="userSpaceOnUse" x1="0" y1="100" x2="0" y2="690"><stop offset="0.1" stop-color="#751105"/><stop offset="0.28" stop-color="#751105"/><stop offset="0.6" stop-color="#751105"/><stop offset="0.69" stop-color="#751105"/></linearGradient><linearGradient id="sg2" gradientUnits="userSpaceOnUse" x1="0" y1="100" x2="0" y2="690"><stop offset="0.1" stop-color="#751105"/><stop offset="0.28" stop-color="#751105"/><stop offset="0.6" stop-color="#751105"/><stop offset="0.69" stop-color="#751105"/></linearGradient><linearGradient id="sg3" gradientUnits="userSpaceOnUse" x1="0" y1="100" x2="0" y2="690"><stop offset="0.1" stop-color="#861506"/><stop offset="0.28" stop-color="#861506"/><stop offset="0.6" stop-color="#861506"/><stop offset="0.69" stop-color="#861506"/></linearGradient><linearGradient id="sg4" gradientUnits="userSpaceOnUse" x1="0" y1="100" x2="0" y2="690"><stop offset="0.1" stop-color="#764311"/><stop offset="0.28" stop-color="#764311"/><stop offset="0.6" stop-color="#764311"/><stop offset="0.69" stop-color="#764311"/></linearGradient><linearGradient id="sg5" gradientUnits="userSpaceOnUse" x1="0" y1="100" x2="0" y2="690"><stop offset="0.1" stop-color="#626116"/><stop offset="0.28" stop-color="#626116"/><stop offset="0.6" stop-color="#626116"/><stop offset="0.69" stop-color="#5c6116"/></linearGradient><linearGradient id="sg6" gradientUnits="userSpaceOnUse" x1="0" y1="100" x2="0" y2="690"><stop offset="0.1" stop-color="#4f6918"/><stop offset="0.28" stop-color="#4f6918"/><stop offset="0.6" stop-color="#4f6918"/><stop offset="0.69" stop-color="#3c651a"/></linearGradient><linearGradient id="sg7" gradientUnits="userSpaceOnUse" x1="0" y1="100" x2="0" y2="690"><stop offset="0.1" stop-color="#2f6e1b"/><stop offset="0.28" stop-color="#2f6e1b"/><stop offset="0.6" stop-color="#2f6e1b"/><stop offset="0.69" stop-color="#1f6f2b"/></linearGradient><linearGradient id="sg8" gradientUnits="userSpaceOnUse" x1="0" y1="100" x2="0" y2="690"><stop offset="0.1" stop-color="#20771e"/><stop offset="0.28" stop-color="#20771e"/><stop offset="0.6" stop-color="#20771e"/><stop offset="0.69" stop-color="#127f50"/></linearGradient><linearGradient id="sg9" gradientUnits="userSpaceOnUse" x1="0" y1="100" x2="0" y2="690"><stop offset="0.1" stop-color="#168623"/><stop offset="0.28" stop-color="#168623"/><stop offset="0.6" stop-color="#168623"/><stop offset="0.69" stop-color="#0e8c78"/></linearGradient><linearGradient id="sg10" gradientUnits="userSpaceOnUse" x1="0" y1="100" x2="0" y2="690"><stop offset="0.1" stop-color="#0d9528"/><stop offset="0.28" stop-color="#0d9528"/><stop offset="0.6" stop-color="#0d9528"/><stop offset="0.69" stop-color="#0d9178"/></linearGradient><linearGradient id="sg11" gradientUnits="userSpaceOnUse" x1="0" y1="100" x2="0" y2="690"><stop offset="0.1" stop-color="#0c972a"/><stop offset="0.28" stop-color="#0c972a"/><stop offset="0.6" stop-color="#0c972a"/><stop offset="0.69" stop-color="#0c9677"/></linearGradient><linearGradient id="sg12" gradientUnits="userSpaceOnUse" x1="0" y1="100" x2="0" y2="690"><stop offset="0.1" stop-color="#0b982c"/><stop offset="0.28" stop-color="#0b992c"/><stop offset="0.6" stop-color="#0b992c"/><stop offset="0.69" stop-color="#0b976e"/></linearGradient><linearGradient id="sg13" gradientUnits="userSpaceOnUse" x1="0" y1="100" x2="0" y2="690"><stop offset="0.1" stop-color="#0b9a2d"/><stop offset="0.28" stop-color="#0b9a2e"/><stop offset="0.6" stop-color="#0b9a2e"/><stop offset="0.69" stop-color="#0b9765"/></linearGradient><linearGradient id="sg14" gradientUnits="userSpaceOnUse" x1="0" y1="100" x2="0" y2="690"><stop offset="0.1" stop-color="#0b9b2f"/><stop offset="0.28" stop-color="#0b9b30"/><stop offset="0.6" stop-color="#0b9b30"/><stop offset="0.69" stop-color="#0a985c"/></linearGradient><linearGradient id="sg15" gradientUnits="userSpaceOnUse" x1="0" y1="100" x2="0" y2="690"><stop offset="0.1" stop-color="#0a9c31"/><stop offset="0.28" stop-color="#0a9d32"/><stop offset="0.6" stop-color="#0a9d32"/><stop offset="0.69" stop-color="#0a9952"/></linearGradient><linearGradient id="sg16" gradientUnits="userSpaceOnUse" x1="0" y1="100" x2="0" y2="690"><stop offset="0.1" stop-color="#0a9d33"/><stop offset="0.28" stop-color="#0a9e34"/><stop offset="0.6" stop-color="#0a9e34"/><stop offset="0.69" stop-color="#0a9b48"/></linearGradient><linearGradient id="sg17" gradientUnits="userSpaceOnUse" x1="0" y1="100" x2="0" y2="690"><stop offset="0.1" stop-color="#0a9d37"/><stop offset="0.28" stop-color="#0a9b37"/><stop offset="0.6" stop-color="#0a9b37"/><stop offset="0.69" stop-color="#0a9d3d"/></linearGradient><linearGradient id="sg18" gradientUnits="userSpaceOnUse" x1="0" y1="100" x2="0" y2="690"><stop offset="0.1" stop-color="#0a9a3c"/><stop offset="0.28" stop-color="#0a973b"/><stop offset="0.6" stop-color="#0a973b"/><stop offset="0.69" stop-color="#0a9e34"/></linearGradient><linearGradient id="sg19" gradientUnits="userSpaceOnUse" x1="0" y1="100" x2="0" y2="690"><stop offset="0.1" stop-color="#0a9841"/><stop offset="0.28" stop-color="#0a9546"/><stop offset="0.6" stop-color="#0a9546"/><stop offset="0.69" stop-color="#0a9d32"/></linearGradient><linearGradient id="sg20" gradientUnits="userSpaceOnUse" x1="0" y1="100" x2="0" y2="690"><stop offset="0.1" stop-color="#0a9647"/><stop offset="0.28" stop-color="#0a9259"/><stop offset="0.6" stop-color="#0a9259"/><stop offset="0.69" stop-color="#0b9b30"/></linearGradient><linearGradient id="sg21" gradientUnits="userSpaceOnUse" x1="0" y1="100" x2="0" y2="690"><stop offset="0.1" stop-color="#0a944f"/><stop offset="0.28" stop-color="#0e876e"/><stop offset="0.6" stop-color="#0e876e"/><stop offset="0.69" stop-color="#0b9a2e"/></linearGradient><linearGradient id="sg22" gradientUnits="userSpaceOnUse" x1="0" y1="100" x2="0" y2="690"><stop offset="0.1" stop-color="#0a9357"/><stop offset="0.28" stop-color="#127c80"/><stop offset="0.6" stop-color="#127c80"/><stop offset="0.69" stop-color="#0b992c"/></linearGradient><linearGradient id="sg23" gradientUnits="userSpaceOnUse" x1="0" y1="100" x2="0" y2="690"><stop offset="0.1" stop-color="#0b8f61"/><stop offset="0.28" stop-color="#127c80"/><stop offset="0.6" stop-color="#127c80"/><stop offset="0.69" stop-color="#0c982a"/></linearGradient><linearGradient id="sg24" gradientUnits="userSpaceOnUse" x1="0" y1="100" x2="0" y2="690"><stop offset="0.1" stop-color="#0f8572"/><stop offset="0.28" stop-color="#127c80"/><stop offset="0.6" stop-color="#127c80"/><stop offset="0.69" stop-color="#0c9629"/></linearGradient><linearGradient id="sg25" gradientUnits="userSpaceOnUse" x1="0" y1="100" x2="0" y2="690"><stop offset="0.1" stop-color="#127c81"/><stop offset="0.28" stop-color="#118472"/><stop offset="0.6" stop-color="#118472"/><stop offset="0.69" stop-color="#129b28"/></linearGradient><linearGradient id="sg26" gradientUnits="userSpaceOnUse" x1="0" y1="100" x2="0" y2="690"><stop offset="0.1" stop-color="#15798a"/><stop offset="0.28" stop-color="#11984d"/><stop offset="0.6" stop-color="#11984d"/><stop offset="0.69" stop-color="#1aa327"/></linearGradient><linearGradient id="sg27" gradientUnits="userSpaceOnUse" x1="0" y1="100" x2="0" y2="690"><stop offset="0.1" stop-color="#187794"/><stop offset="0.28" stop-color="#1ca835"/><stop offset="0.6" stop-color="#1ca835"/><stop offset="0.69" stop-color="#23ab26"/></linearGradient><linearGradient id="sg28" gradientUnits="userSpaceOnUse" x1="0" y1="100" x2="0" y2="690"><stop offset="0.1" stop-color="#1b759e"/><stop offset="0.28" stop-color="#21ac30"/><stop offset="0.6" stop-color="#21ac30"/><stop offset="0.69" stop-color="#26ae27"/></linearGradient><linearGradient id="sg29" gradientUnits="userSpaceOnUse" x1="0" y1="100" x2="0" y2="690"><stop offset="0.1" stop-color="#17788f"/><stop offset="0.28" stop-color="#24ad2f"/><stop offset="0.6" stop-color="#24ad2f"/><stop offset="0.69" stop-color="#28af27"/></linearGradient><linearGradient id="sg30" gradientUnits="userSpaceOnUse" x1="0" y1="100" x2="0" y2="690"><stop offset="0.1" stop-color="#1b7671"/><stop offset="0.28" stop-color="#27af2d"/><stop offset="0.6" stop-color="#27af2d"/><stop offset="0.69" stop-color="#2bb128"/></linearGradient><linearGradient id="sg31" gradientUnits="userSpaceOnUse" x1="0" y1="100" x2="0" y2="690"><stop offset="0.1" stop-color="#247060"/><stop offset="0.28" stop-color="#28b02c"/><stop offset="0.6" stop-color="#28b02c"/><stop offset="0.69" stop-color="#2cb228"/></linearGradient><linearGradient id="sg32" gradientUnits="userSpaceOnUse" x1="0" y1="100" x2="0" y2="690"><stop offset="0.1" stop-color="#247060"/><stop offset="0.28" stop-color="#28b02c"/><stop offset="0.6" stop-color="#28b02c"/><stop offset="0.69" stop-color="#2cb228"/></linearGradient><linearGradient id="sg33" gradientUnits="userSpaceOnUse" x1="0" y1="100" x2="0" y2="690"><stop offset="0.1" stop-color="#247060"/><stop offset="0.28" stop-color="#28b02c"/><stop offset="0.6" stop-color="#28b02c"/><stop offset="0.69" stop-color="#2cb228"/></linearGradient></defs><g clip-path="url(#mapclip2)"><path d="M886 600 L880 607 L875 616" fill="none" stroke="#74746a" stroke-width="1.8"/><path d="M1072.5 93.0 C1070.9 105.0 1066.2 144.7 1063.0 165.0 C1059.8 185.3 1056.8 198.3 1053.0 215.0 C1049.2 231.7 1045.1 248.3 1040.5 265.0 C1035.9 281.7 1029.1 303.3 1025.5 315.0 C1021.9 326.7 1022.2 324.2 1019.0 335.0 C1015.8 345.8 1011.5 364.2 1006.0 380.0 C1000.5 395.8 993.5 413.3 986.0 430.0 C978.5 446.7 968.5 465.0 961.0 480.0 C953.5 495.0 946.1 510.0 941.0 520.0 C935.9 530.0 934.4 531.3 930.5 540.0 C926.6 548.7 922.2 562.3 917.5 572.0 C912.8 581.7 905.4 592.6 902.0 598.0 C898.6 603.4 899.3 604.4 897.0 604.5 C894.7 604.6 890.8 599.7 888.0 598.5 C885.2 597.3 882.8 596.8 880.5 597.5 C878.2 598.2 875.1 601.7 874.0 602.5" fill="none" stroke="#74746a" stroke-width="7.200" stroke-linejoin="round"/><path d="M1072.5 93.0 C1070.9 105.0 1066.2 144.7 1063.0 165.0 C1059.8 185.3 1056.8 198.3 1053.0 215.0 C1049.2 231.7 1045.1 248.3 1040.5 265.0 C1035.9 281.7 1029.1 303.3 1025.5 315.0 C1021.9 326.7 1022.2 324.2 1019.0 335.0 C1015.8 345.8 1011.5 364.2 1006.0 380.0 C1000.5 395.8 993.5 413.3 986.0 430.0 C978.5 446.7 968.5 465.0 961.0 480.0 C953.5 495.0 946.1 510.0 941.0 520.0 C935.9 530.0 934.4 531.3 930.5 540.0 C926.6 548.7 922.2 562.3 917.5 572.0 C912.8 581.7 905.4 592.6 902.0 598.0 C898.6 603.4 899.3 604.4 897.0 604.5 C894.7 604.6 890.8 599.7 888.0 598.5 C885.2 597.3 882.8 596.8 880.5 597.5 C878.2 598.2 875.1 601.7 874.0 602.5" fill="none" stroke="#aaa278" stroke-width="1"/><path d="M1181.0 93.0 C1179.9 105.0 1177.1 144.7 1174.5 165.0 C1171.9 185.3 1168.7 198.3 1165.5 215.0 C1162.3 231.7 1159.3 248.3 1155.5 265.0 C1151.7 281.7 1145.9 303.3 1142.5 315.0 C1139.1 326.7 1138.4 328.0 1135.0 335.0 C1131.6 342.0 1124.7 349.3 1122.0 357.0 C1119.3 364.7 1118.2 373.3 1119.0 381.0 C1119.8 388.7 1123.2 395.4 1126.5 403.0 C1129.8 410.6 1132.8 423.3 1138.5 426.5 C1144.2 429.7 1151.9 424.3 1161.0 422.0 C1170.1 419.7 1182.0 414.8 1193.0 412.5 C1204.0 410.2 1221.3 409.2 1227.0 408.5" fill="none" stroke="#74746a" stroke-width="7.200" stroke-linejoin="round"/><path d="M1181.0 93.0 C1179.9 105.0 1177.1 144.7 1174.5 165.0 C1171.9 185.3 1168.7 198.3 1165.5 215.0 C1162.3 231.7 1159.3 248.3 1155.5 265.0 C1151.7 281.7 1145.9 303.3 1142.5 315.0 C1139.1 326.7 1138.4 328.0 1135.0 335.0 C1131.6 342.0 1124.7 349.3 1122.0 357.0 C1119.3 364.7 1118.2 373.3 1119.0 381.0 C1119.8 388.7 1123.2 395.4 1126.5 403.0 C1129.8 410.6 1132.8 423.3 1138.5 426.5 C1144.2 429.7 1151.9 424.3 1161.0 422.0 C1170.1 419.7 1182.0 414.8 1193.0 412.5 C1204.0 410.2 1221.3 409.2 1227.0 408.5" fill="none" stroke="#aaa278" stroke-width="1"/><path d="M1145.0 330.0 C1142.7 334.5 1134.0 348.7 1131.0 357.0 C1128.0 365.3 1126.7 372.7 1127.0 380.0 C1127.3 387.3 1130.2 394.2 1133.0 401.0 C1135.8 407.8 1139.2 417.8 1144.0 420.5 C1148.8 423.2 1153.8 419.2 1162.0 417.0 C1170.2 414.8 1182.2 409.8 1193.0 407.5 C1203.8 405.2 1221.3 404.2 1227.0 403.5" fill="none" stroke="#74746a" stroke-width="1.6"/><path d="M997.0 688.0 C998.2 686.2 1002.7 681.5 1004.5 677.5 C1006.3 673.5 1008.8 667.7 1008.0 664.0 C1007.2 660.3 1002.9 658.1 1000.0 655.5 C997.1 652.9 989.5 654.7 990.5 648.5 C991.5 642.3 999.9 630.0 1006.0 618.5 C1012.1 607.0 1019.6 592.3 1027.0 579.5 C1034.4 566.7 1044.5 551.5 1050.5 541.5 C1056.5 531.5 1060.1 524.8 1063.0 519.5 C1065.9 514.2 1066.6 512.0 1068.0 510.0 C1069.4 508.0 1070.2 507.7 1071.5 507.5 C1072.8 507.3 1074.8 508.0 1076.0 509.0 C1077.2 510.0 1080.2 508.9 1078.5 513.5 C1076.8 518.1 1070.3 528.6 1066.0 536.5 C1061.7 544.4 1055.6 554.7 1052.5 561.0 C1049.4 567.3 1048.1 569.9 1047.5 574.5 C1046.9 579.1 1047.5 584.2 1049.0 588.5 C1050.5 592.8 1052.7 597.4 1056.5 600.5 C1060.3 603.6 1066.8 606.2 1072.0 607.0 C1077.2 607.8 1080.5 608.0 1088.0 605.5 C1095.5 603.0 1112.2 594.2 1117.0 592.0" fill="none" stroke="#74746a" stroke-width="2"/><path d="M1020.0 688.0 C1019.3 686.3 1017.3 681.3 1016.0 678.0 C1014.7 674.7 1013.7 671.0 1012.0 668.0 C1010.3 665.0 1008.2 662.7 1006.0 660.0 C1003.8 657.3 998.2 658.2 999.0 652.0 C999.8 645.8 1005.1 634.4 1010.5 623.0 C1015.9 611.6 1024.1 596.5 1031.5 583.5 C1038.9 570.5 1049.2 555.1 1055.0 545.0 C1060.8 534.9 1063.9 528.2 1066.5 523.0 C1069.1 517.8 1069.6 515.8 1070.5 514.0 C1071.4 512.2 1071.5 512.4 1072.0 512.5 C1072.5 512.6 1075.2 510.6 1073.5 514.5 C1071.8 518.4 1066.2 528.4 1062.0 536.0 C1057.8 543.6 1051.7 553.6 1048.5 560.0 C1045.3 566.4 1043.7 569.5 1043.0 574.5 C1042.3 579.5 1042.8 585.1 1044.5 590.0 C1046.2 594.9 1048.6 600.4 1053.0 604.0 C1057.4 607.6 1065.0 610.5 1071.0 611.5 C1077.0 612.5 1081.0 612.4 1089.0 610.0 C1097.0 607.6 1114.0 599.2 1119.0 597.0" fill="none" stroke="#74746a" stroke-width="1.800"/><path d="M996.0 655.0 C999.1 650.2 1007.9 637.4 1014.5 626.0 C1021.1 614.6 1028.1 599.5 1035.5 586.5 C1042.9 573.5 1053.3 558.1 1059.0 548.0 C1064.7 537.9 1067.8 529.7 1069.5 526.0" fill="none" stroke="#74746a" stroke-width="1.500"/><path d="M1052 603 l-5 9 l10 5 l4 -8" fill="none" stroke="#74746a" stroke-width="1.500"/><path d="M1080 611 L1100 606 L1116 598 M1148.700 564 L1158 580 L1163.500 576 L1155 562" fill="none" stroke="#74746a" stroke-width="1.600"/><path d="M1222 533.5 L1232 536 L1241 537 L1244 531.5 L1251 527.5 L1240 529Z M1147 566.5 L1154 570 L1166 566 L1184 553 L1166 558Z" fill="#9db9f0"/><path d="M881 632.5 L884.5 634.5 L877.5 651 L876 650 L876 641Z" fill="#c8a85a"/><path d="M897.800 660.900 L883 683" stroke="#9a9a9a" stroke-width="1" stroke-dasharray="5 3"/><path d="M1102.500 96 L1100 115 M1151 96 L1150 108" stroke="#8a8a9a" stroke-width="0.800" stroke-dasharray="4 2"/><g clip-path="url(#surfclip)"><g filter="url(#bl)"><path d="M1080.4 100.0 L1071.3 135.0 L1064.5 165.0 L1059.8 195.0 L1051.6 230.0 L1045.4 265.0 L1035.4 302.0 L1022.7 347.0 L1008.7 380.0 L986.7 430.0 L963.3 480.0 L954.0 505.0 L944.5 525.0 L919.4 571.0 L894.0 613.0 L875.0 648.0 L850.6 690.0 L854.9 690.0 L879.2 648.0 L898.2 613.0 L923.4 571.0 L948.5 525.0 L958.5 505.0 L968.5 480.0 L991.7 430.0 L1012.9 380.0 L1026.5 347.0 L1039.1 302.0 L1049.1 265.0 L1055.4 230.0 L1063.5 195.0 L1068.2 165.0 L1074.7 135.0 L1083.4 100.0Z" fill="url(#sg0)"/><path d="M1082.8 100.0 L1074.1 135.0 L1067.6 165.0 L1063.0 195.0 L1054.8 230.0 L1048.5 265.0 L1038.5 302.0 L1025.9 347.0 L1012.3 380.0 L991.1 430.0 L968.0 480.0 L957.9 505.0 L947.9 525.0 L922.8 571.0 L897.6 613.0 L878.6 648.0 L854.3 690.0 L858.6 690.0 L882.7 648.0 L901.7 613.0 L926.9 571.0 L951.9 525.0 L962.4 505.0 L973.2 480.0 L996.0 430.0 L1016.6 380.0 L1029.6 347.0 L1042.2 302.0 L1052.2 265.0 L1058.6 230.0 L1066.7 195.0 L1071.2 165.0 L1077.5 135.0 L1085.9 100.0Z" fill="url(#sg1)"/><path d="M1085.3 100.0 L1076.9 135.0 L1070.6 165.0 L1066.1 195.0 L1058.0 230.0 L1051.6 265.0 L1041.6 302.0 L1029.0 347.0 L1016.0 380.0 L995.4 430.0 L972.6 480.0 L961.8 505.0 L951.3 525.0 L926.3 571.0 L901.1 613.0 L882.1 648.0 L858.0 690.0 L862.3 690.0 L886.3 648.0 L905.3 613.0 L930.3 571.0 L955.3 525.0 L966.3 505.0 L977.8 480.0 L1000.3 430.0 L1020.3 380.0 L1032.8 347.0 L1045.3 302.0 L1055.3 265.0 L1061.8 230.0 L1069.8 195.0 L1074.3 165.0 L1080.3 135.0 L1088.3 100.0Z" fill="url(#sg2)"/><path d="M1087.7 100.0 L1079.7 135.0 L1073.7 165.0 L1069.2 195.0 L1061.2 230.0 L1054.7 265.0 L1044.7 302.0 L1032.2 347.0 L1019.7 380.0 L999.7 430.0 L977.2 480.0 L965.7 505.0 L954.7 525.0 L929.7 571.0 L904.7 613.0 L885.7 648.0 L861.7 690.0 L866.0 690.0 L889.9 648.0 L908.9 613.0 L933.7 571.0 L958.7 525.0 L970.2 505.0 L982.4 480.0 L1004.6 430.0 L1024.0 380.0 L1036.0 347.0 L1048.4 302.0 L1058.4 265.0 L1065.0 230.0 L1072.9 195.0 L1077.4 165.0 L1083.1 135.0 L1090.7 100.0Z" fill="url(#sg3)"/><path d="M1090.1 100.0 L1082.5 135.0 L1076.8 165.0 L1072.3 195.0 L1064.4 230.0 L1057.8 265.0 L1047.8 302.0 L1035.4 347.0 L1023.4 380.0 L1004.0 430.0 L981.8 480.0 L969.6 505.0 L958.1 525.0 L933.1 571.0 L908.3 613.0 L889.3 648.0 L865.4 690.0 L869.7 690.0 L893.4 648.0 L912.4 613.0 L937.2 571.0 L962.1 525.0 L974.1 505.0 L987.0 480.0 L1008.9 430.0 L1027.7 380.0 L1039.1 347.0 L1051.5 302.0 L1061.5 265.0 L1068.2 230.0 L1076.0 195.0 L1080.4 165.0 L1085.9 135.0 L1093.2 100.0Z" fill="url(#sg4)"/><path d="M1092.6 100.0 L1085.3 135.0 L1079.8 165.0 L1075.5 195.0 L1067.6 230.0 L1060.9 265.0 L1050.9 302.0 L1038.5 347.0 L1027.1 380.0 L1008.3 430.0 L986.5 480.0 L973.5 505.0 L961.5 525.0 L936.6 571.0 L911.8 613.0 L892.8 648.0 L869.1 690.0 L873.4 690.0 L897.0 648.0 L916.0 613.0 L940.6 571.0 L965.5 525.0 L978.0 505.0 L991.7 480.0 L1013.3 430.0 L1031.3 380.0 L1042.3 347.0 L1054.6 302.0 L1064.6 265.0 L1071.4 230.0 L1079.2 195.0 L1083.5 165.0 L1088.7 135.0 L1095.6 100.0Z" fill="url(#sg5)"/><path d="M1095.0 100.0 L1088.1 135.0 L1082.9 165.0 L1078.6 195.0 L1070.8 230.0 L1064.0 265.0 L1054.0 302.0 L1041.7 347.0 L1030.7 380.0 L1012.7 430.0 L991.1 480.0 L977.4 505.0 L964.9 525.0 L940.0 571.0 L915.4 613.0 L896.4 648.0 L872.8 690.0 L877.2 690.0 L900.6 648.0 L919.5 613.0 L944.0 571.0 L968.9 525.0 L981.9 505.0 L996.3 480.0 L1017.6 430.0 L1035.0 380.0 L1045.4 347.0 L1057.7 302.0 L1067.7 265.0 L1074.6 230.0 L1082.3 195.0 L1086.6 165.0 L1091.4 135.0 L1098.0 100.0Z" fill="url(#sg6)"/><path d="M1097.4 100.0 L1090.8 135.0 L1086.0 165.0 L1081.7 195.0 L1074.0 230.0 L1067.1 265.0 L1057.1 302.0 L1044.8 347.0 L1034.4 380.0 L1017.0 430.0 L995.7 480.0 L981.3 505.0 L968.3 525.0 L943.4 571.0 L918.9 613.0 L900.0 648.0 L876.6 690.0 L880.9 690.0 L904.2 648.0 L923.1 613.0 L947.4 571.0 L972.3 525.0 L985.8 505.0 L1000.9 480.0 L1021.9 430.0 L1038.7 380.0 L1048.6 347.0 L1060.8 302.0 L1070.8 265.0 L1077.8 230.0 L1085.4 195.0 L1089.7 165.0 L1094.2 135.0 L1100.4 100.0Z" fill="url(#sg7)"/><path d="M1099.8 100.0 L1093.6 135.0 L1089.1 165.0 L1084.8 195.0 L1077.2 230.0 L1070.2 265.0 L1060.2 302.0 L1048.0 347.0 L1038.1 380.0 L1021.3 430.0 L1000.3 480.0 L985.2 505.0 L971.7 525.0 L946.8 571.0 L922.5 613.0 L903.6 648.0 L880.3 690.0 L884.6 690.0 L907.7 648.0 L926.6 613.0 L950.9 571.0 L975.7 525.0 L989.7 505.0 L1005.5 480.0 L1026.2 430.0 L1042.4 380.0 L1051.8 347.0 L1063.9 302.0 L1073.9 265.0 L1081.0 230.0 L1088.5 195.0 L1092.7 165.0 L1097.0 135.0 L1102.9 100.0Z" fill="url(#sg8)"/><path d="M1102.3 100.0 L1096.4 135.0 L1092.1 165.0 L1088.0 195.0 L1080.4 230.0 L1073.3 265.0 L1063.3 302.0 L1051.2 347.0 L1041.8 380.0 L1025.6 430.0 L1005.0 480.0 L989.1 505.0 L975.1 525.0 L950.3 571.0 L926.0 613.0 L907.1 648.0 L884.0 690.0 L888.3 690.0 L911.3 648.0 L930.2 613.0 L954.3 571.0 L979.0 525.0 L993.5 505.0 L1010.2 480.0 L1030.5 430.0 L1046.0 380.0 L1054.9 347.0 L1067.0 302.0 L1077.0 265.0 L1084.2 230.0 L1091.7 195.0 L1095.8 165.0 L1099.8 135.0 L1105.3 100.0Z" fill="url(#sg9)"/><path d="M1104.7 100.0 L1099.2 135.0 L1095.2 165.0 L1091.1 195.0 L1083.6 230.0 L1076.5 265.0 L1066.5 302.0 L1054.3 347.0 L1045.5 380.0 L1030.0 430.0 L1009.6 480.0 L993.0 505.0 L978.5 525.0 L953.7 571.0 L929.6 613.0 L910.7 648.0 L887.7 690.0 L892.0 690.0 L914.9 648.0 L933.7 613.0 L957.7 571.0 L982.4 525.0 L997.4 505.0 L1014.8 480.0 L1034.9 430.0 L1049.7 380.0 L1058.1 347.0 L1070.2 302.0 L1080.2 265.0 L1087.4 230.0 L1094.8 195.0 L1098.9 165.0 L1102.6 135.0 L1107.7 100.0Z" fill="url(#sg10)"/><path d="M1107.1 100.0 L1102.0 135.0 L1098.3 165.0 L1094.2 195.0 L1086.8 230.0 L1079.6 265.0 L1069.6 302.0 L1057.5 347.0 L1049.1 380.0 L1034.3 430.0 L1014.2 480.0 L996.8 505.0 L981.8 525.0 L957.1 571.0 L933.1 613.0 L914.3 648.0 L891.4 690.0 L895.7 690.0 L918.4 648.0 L937.3 613.0 L961.2 571.0 L985.8 525.0 L1001.3 505.0 L1019.4 480.0 L1039.2 430.0 L1053.4 380.0 L1061.2 347.0 L1073.3 302.0 L1083.3 265.0 L1090.6 230.0 L1097.9 195.0 L1101.9 165.0 L1105.4 135.0 L1110.2 100.0Z" fill="url(#sg11)"/><path d="M1109.6 100.0 L1104.8 135.0 L1101.3 165.0 L1097.3 195.0 L1090.0 230.0 L1082.7 265.0 L1072.7 302.0 L1060.6 347.0 L1052.8 380.0 L1038.6 430.0 L1018.8 480.0 L1000.7 505.0 L985.2 525.0 L960.6 571.0 L936.7 613.0 L917.8 648.0 L895.1 690.0 L899.4 690.0 L922.0 648.0 L940.8 613.0 L964.6 571.0 L989.2 525.0 L1005.2 505.0 L1024.0 480.0 L1043.5 430.0 L1057.1 380.0 L1064.4 347.0 L1076.4 302.0 L1086.4 265.0 L1093.8 230.0 L1101.0 195.0 L1105.0 165.0 L1108.2 135.0 L1112.6 100.0Z" fill="url(#sg12)"/><path d="M1112.0 100.0 L1107.6 135.0 L1104.4 165.0 L1100.5 195.0 L1093.2 230.0 L1085.8 265.0 L1075.8 302.0 L1063.8 347.0 L1056.5 380.0 L1042.9 430.0 L1023.5 480.0 L1004.6 505.0 L988.6 525.0 L964.0 571.0 L940.2 613.0 L921.4 648.0 L898.8 690.0 L903.2 690.0 L925.6 648.0 L944.4 613.0 L968.0 571.0 L992.6 525.0 L1009.1 505.0 L1028.7 480.0 L1047.8 430.0 L1060.8 380.0 L1067.6 347.0 L1079.5 302.0 L1089.5 265.0 L1097.0 230.0 L1104.2 195.0 L1108.1 165.0 L1110.9 135.0 L1115.0 100.0Z" fill="url(#sg13)"/><path d="M1114.4 100.0 L1110.3 135.0 L1107.5 165.0 L1103.6 195.0 L1096.4 230.0 L1088.9 265.0 L1078.9 302.0 L1067.0 347.0 L1060.2 380.0 L1047.2 430.0 L1028.1 480.0 L1008.5 505.0 L992.0 525.0 L967.4 571.0 L943.8 613.0 L925.0 648.0 L902.6 690.0 L906.9 690.0 L929.2 648.0 L947.9 613.0 L971.4 571.0 L996.0 525.0 L1013.0 505.0 L1033.3 480.0 L1052.2 430.0 L1064.4 380.0 L1070.7 347.0 L1082.6 302.0 L1092.6 265.0 L1100.2 230.0 L1107.3 195.0 L1111.2 165.0 L1113.7 135.0 L1117.4 100.0Z" fill="url(#sg14)"/><path d="M1116.8 100.0 L1113.1 135.0 L1110.6 165.0 L1106.7 195.0 L1099.6 230.0 L1092.0 265.0 L1082.0 302.0 L1070.1 347.0 L1063.8 380.0 L1051.6 430.0 L1032.7 480.0 L1012.4 505.0 L995.4 525.0 L970.8 571.0 L947.3 613.0 L928.6 648.0 L906.3 690.0 L910.6 690.0 L932.7 648.0 L951.5 613.0 L974.9 571.0 L999.4 525.0 L1016.9 505.0 L1037.9 480.0 L1056.5 430.0 L1068.1 380.0 L1073.9 347.0 L1085.7 302.0 L1095.7 265.0 L1103.4 230.0 L1110.4 195.0 L1114.2 165.0 L1116.5 135.0 L1119.9 100.0Z" fill="url(#sg15)"/><path d="M1119.3 100.0 L1115.9 135.0 L1113.6 165.0 L1109.8 195.0 L1102.8 230.0 L1095.1 265.0 L1085.1 302.0 L1073.3 347.0 L1067.5 380.0 L1055.9 430.0 L1037.3 480.0 L1016.3 505.0 L998.8 525.0 L974.3 571.0 L950.9 613.0 L932.1 648.0 L910.0 690.0 L914.3 690.0 L936.3 648.0 L955.0 613.0 L978.3 571.0 L1002.8 525.0 L1020.8 505.0 L1042.5 480.0 L1060.8 430.0 L1071.8 380.0 L1077.0 347.0 L1088.8 302.0 L1098.8 265.0 L1106.5 230.0 L1113.5 195.0 L1117.3 165.0 L1119.3 135.0 L1122.3 100.0Z" fill="url(#sg16)"/><path d="M1121.7 100.0 L1118.7 135.0 L1116.7 165.0 L1113.0 195.0 L1106.0 230.0 L1098.2 265.0 L1088.2 302.0 L1076.5 347.0 L1071.2 380.0 L1060.2 430.0 L1042.0 480.0 L1020.2 505.0 L1002.2 525.0 L977.7 571.0 L954.5 613.0 L935.7 648.0 L913.7 690.0 L918.0 690.0 L939.9 648.0 L958.6 613.0 L981.7 571.0 L1006.2 525.0 L1024.7 505.0 L1047.2 480.0 L1065.1 430.0 L1075.5 380.0 L1080.2 347.0 L1091.9 302.0 L1101.9 265.0 L1109.7 230.0 L1116.7 195.0 L1120.4 165.0 L1122.1 135.0 L1124.7 100.0Z" fill="url(#sg17)"/><path d="M1124.1 100.0 L1121.5 135.0 L1119.8 165.0 L1116.1 195.0 L1109.1 230.0 L1101.3 265.0 L1091.3 302.0 L1079.6 347.0 L1074.9 380.0 L1064.5 430.0 L1046.6 480.0 L1024.1 505.0 L1005.6 525.0 L981.1 571.0 L958.0 613.0 L939.3 648.0 L917.4 690.0 L921.7 690.0 L943.4 648.0 L962.2 613.0 L985.2 571.0 L1009.6 525.0 L1028.6 505.0 L1051.8 480.0 L1069.4 430.0 L1079.2 380.0 L1083.4 347.0 L1095.0 302.0 L1105.0 265.0 L1112.9 230.0 L1119.8 195.0 L1123.4 165.0 L1124.9 135.0 L1127.2 100.0Z" fill="url(#sg18)"/><path d="M1126.6 100.0 L1124.3 135.0 L1122.8 165.0 L1119.2 195.0 L1112.3 230.0 L1104.4 265.0 L1094.4 302.0 L1082.8 347.0 L1078.6 380.0 L1068.8 430.0 L1051.2 480.0 L1028.0 505.0 L1009.0 525.0 L984.6 571.0 L961.6 613.0 L942.8 648.0 L921.1 690.0 L925.4 690.0 L947.0 648.0 L965.7 613.0 L988.6 571.0 L1013.0 525.0 L1032.5 505.0 L1056.4 480.0 L1073.8 430.0 L1082.8 380.0 L1086.5 347.0 L1098.1 302.0 L1108.1 265.0 L1116.1 230.0 L1122.9 195.0 L1126.5 165.0 L1127.7 135.0 L1129.6 100.0Z" fill="url(#sg19)"/><path d="M1129.0 100.0 L1127.1 135.0 L1125.9 165.0 L1122.3 195.0 L1115.5 230.0 L1107.5 265.0 L1097.5 302.0 L1085.9 347.0 L1082.2 380.0 L1073.2 430.0 L1055.8 480.0 L1031.9 505.0 L1012.4 525.0 L988.0 571.0 L965.1 613.0 L946.4 648.0 L924.8 690.0 L929.2 690.0 L950.6 648.0 L969.3 613.0 L992.0 571.0 L1016.4 525.0 L1036.4 505.0 L1061.0 480.0 L1078.1 430.0 L1086.5 380.0 L1089.7 347.0 L1101.2 302.0 L1111.2 265.0 L1119.3 230.0 L1126.0 195.0 L1129.6 165.0 L1130.4 135.0 L1132.0 100.0Z" fill="url(#sg20)"/><path d="M1131.4 100.0 L1129.8 135.0 L1129.0 165.0 L1125.5 195.0 L1118.7 230.0 L1110.6 265.0 L1100.6 302.0 L1089.1 347.0 L1085.9 380.0 L1077.5 430.0 L1060.5 480.0 L1035.8 505.0 L1015.8 525.0 L991.4 571.0 L968.7 613.0 L950.0 648.0 L928.6 690.0 L932.9 690.0 L954.2 648.0 L972.8 613.0 L995.4 571.0 L1019.8 525.0 L1040.3 505.0 L1065.7 480.0 L1082.4 430.0 L1090.2 380.0 L1092.9 347.0 L1104.3 302.0 L1114.3 265.0 L1122.5 230.0 L1129.2 195.0 L1132.7 165.0 L1133.2 135.0 L1134.4 100.0Z" fill="url(#sg21)"/><path d="M1133.8 100.0 L1132.6 135.0 L1132.1 165.0 L1128.6 195.0 L1121.9 230.0 L1113.7 265.0 L1103.7 302.0 L1092.3 347.0 L1089.6 380.0 L1081.8 430.0 L1065.1 480.0 L1039.7 505.0 L1019.2 525.0 L994.8 571.0 L972.2 613.0 L953.6 648.0 L932.3 690.0 L936.6 690.0 L957.7 648.0 L976.4 613.0 L998.9 571.0 L1023.2 525.0 L1044.2 505.0 L1070.3 480.0 L1086.7 430.0 L1093.9 380.0 L1096.0 347.0 L1107.4 302.0 L1117.4 265.0 L1125.7 230.0 L1132.3 195.0 L1135.7 165.0 L1136.0 135.0 L1136.9 100.0Z" fill="url(#sg22)"/><path d="M1136.3 100.0 L1135.4 135.0 L1135.1 165.0 L1131.7 195.0 L1125.1 230.0 L1116.8 265.0 L1106.8 302.0 L1095.4 347.0 L1093.3 380.0 L1086.1 430.0 L1069.7 480.0 L1043.6 505.0 L1022.6 525.0 L998.3 571.0 L975.8 613.0 L957.1 648.0 L936.0 690.0 L940.3 690.0 L961.3 648.0 L979.9 613.0 L1002.3 571.0 L1026.5 525.0 L1048.0 505.0 L1074.9 480.0 L1091.0 430.0 L1097.5 380.0 L1099.2 347.0 L1110.5 302.0 L1120.5 265.0 L1128.9 230.0 L1135.4 195.0 L1138.8 165.0 L1138.8 135.0 L1139.3 100.0Z" fill="url(#sg23)"/><path d="M1138.7 100.0 L1138.2 135.0 L1138.2 165.0 L1134.8 195.0 L1128.3 230.0 L1120.0 265.0 L1110.0 302.0 L1098.6 347.0 L1097.0 380.0 L1090.5 430.0 L1074.3 480.0 L1047.5 505.0 L1026.0 525.0 L1001.7 571.0 L979.3 613.0 L960.7 648.0 L939.7 690.0 L944.0 690.0 L964.9 648.0 L983.5 613.0 L1005.7 571.0 L1029.9 525.0 L1051.9 505.0 L1079.5 480.0 L1095.4 430.0 L1101.2 380.0 L1102.3 347.0 L1113.7 302.0 L1123.7 265.0 L1132.1 230.0 L1138.5 195.0 L1141.9 165.0 L1141.6 135.0 L1141.7 100.0Z" fill="url(#sg24)"/><path d="M1141.1 100.0 L1141.0 135.0 L1141.3 165.0 L1138.0 195.0 L1131.5 230.0 L1123.1 265.0 L1113.1 302.0 L1101.7 347.0 L1100.6 380.0 L1094.8 430.0 L1079.0 480.0 L1051.3 505.0 L1029.3 525.0 L1005.1 571.0 L982.9 613.0 L964.3 648.0 L943.4 690.0 L947.7 690.0 L968.4 648.0 L987.0 613.0 L1009.2 571.0 L1033.3 525.0 L1055.8 505.0 L1084.2 480.0 L1099.7 430.0 L1104.9 380.0 L1105.5 347.0 L1116.8 302.0 L1126.8 265.0 L1135.3 230.0 L1141.7 195.0 L1144.9 165.0 L1144.4 135.0 L1144.2 100.0Z" fill="url(#sg25)"/><path d="M1143.6 100.0 L1143.8 135.0 L1144.3 165.0 L1141.1 195.0 L1134.7 230.0 L1126.2 265.0 L1116.2 302.0 L1104.9 347.0 L1104.3 380.0 L1099.1 430.0 L1083.6 480.0 L1055.2 505.0 L1032.7 525.0 L1008.6 571.0 L986.4 613.0 L967.8 648.0 L947.1 690.0 L951.4 690.0 L972.0 648.0 L990.6 613.0 L1012.6 571.0 L1036.7 525.0 L1059.7 505.0 L1088.8 480.0 L1104.0 430.0 L1108.6 380.0 L1108.7 347.0 L1119.9 302.0 L1129.9 265.0 L1138.5 230.0 L1144.8 195.0 L1148.0 165.0 L1147.2 135.0 L1146.6 100.0Z" fill="url(#sg26)"/><path d="M1146.0 100.0 L1146.6 135.0 L1147.4 165.0 L1144.2 195.0 L1137.9 230.0 L1129.3 265.0 L1119.3 302.0 L1108.1 347.0 L1108.0 380.0 L1103.4 430.0 L1088.2 480.0 L1059.1 505.0 L1036.1 525.0 L1012.0 571.0 L990.0 613.0 L971.4 648.0 L950.8 690.0 L955.2 690.0 L975.6 648.0 L994.1 613.0 L1016.0 571.0 L1040.1 525.0 L1063.6 505.0 L1093.4 480.0 L1108.3 430.0 L1112.3 380.0 L1111.8 347.0 L1123.0 302.0 L1133.0 265.0 L1141.7 230.0 L1147.9 195.0 L1151.1 165.0 L1149.9 135.0 L1149.0 100.0Z" fill="url(#sg27)"/><path d="M1148.4 100.0 L1149.3 135.0 L1150.5 165.0 L1147.3 195.0 L1141.1 230.0 L1132.4 265.0 L1122.4 302.0 L1111.2 347.0 L1111.7 380.0 L1107.7 430.0 L1092.8 480.0 L1063.0 505.0 L1039.5 525.0 L1015.4 571.0 L993.5 613.0 L975.0 648.0 L954.6 690.0 L958.9 690.0 L979.2 648.0 L997.7 613.0 L1019.4 571.0 L1043.5 525.0 L1067.5 505.0 L1098.0 480.0 L1112.7 430.0 L1115.9 380.0 L1115.0 347.0 L1126.1 302.0 L1136.1 265.0 L1144.9 230.0 L1151.0 195.0 L1154.2 165.0 L1152.7 135.0 L1151.4 100.0Z" fill="url(#sg28)"/><path d="M1150.8 100.0 L1152.1 135.0 L1153.6 165.0 L1150.5 195.0 L1144.3 230.0 L1135.5 265.0 L1125.5 302.0 L1114.4 347.0 L1115.3 380.0 L1112.1 430.0 L1097.5 480.0 L1066.9 505.0 L1042.9 525.0 L1018.8 571.0 L997.1 613.0 L978.6 648.0 L958.3 690.0 L962.6 690.0 L982.7 648.0 L1001.2 613.0 L1022.9 571.0 L1046.9 525.0 L1071.4 505.0 L1102.7 480.0 L1117.0 430.0 L1119.6 380.0 L1118.1 347.0 L1129.2 302.0 L1139.2 265.0 L1148.1 230.0 L1154.2 195.0 L1157.2 165.0 L1155.5 135.0 L1153.9 100.0Z" fill="url(#sg29)"/><path d="M1153.3 100.0 L1154.9 135.0 L1156.6 165.0 L1153.6 195.0 L1147.5 230.0 L1138.6 265.0 L1128.6 302.0 L1117.5 347.0 L1119.0 380.0 L1116.4 430.0 L1102.1 480.0 L1070.8 505.0 L1046.3 525.0 L1022.3 571.0 L1000.6 613.0 L982.1 648.0 L962.0 690.0 L966.3 690.0 L986.3 648.0 L1004.8 613.0 L1026.3 571.0 L1050.3 525.0 L1075.3 505.0 L1107.3 480.0 L1121.3 430.0 L1123.3 380.0 L1121.3 347.0 L1132.3 302.0 L1142.3 265.0 L1151.3 230.0 L1157.3 195.0 L1160.3 165.0 L1158.3 135.0 L1156.3 100.0Z" fill="url(#sg30)"/><path d="M1155.7 100.0 L1157.7 135.0 L1159.7 165.0 L1156.7 195.0 L1150.7 230.0 L1141.7 265.0 L1131.7 302.0 L1120.7 347.0 L1122.7 380.0 L1120.7 430.0 L1106.7 480.0 L1074.7 505.0 L1049.7 525.0 L1025.7 571.0 L1004.2 613.0 L985.7 648.0 L965.7 690.0 L970.0 690.0 L989.9 648.0 L1008.4 613.0 L1029.7 571.0 L1053.7 525.0 L1079.2 505.0 L1111.9 480.0 L1125.6 430.0 L1127.0 380.0 L1124.5 347.0 L1135.4 302.0 L1145.4 265.0 L1154.5 230.0 L1160.4 195.0 L1163.4 165.0 L1161.1 135.0 L1158.7 100.0Z" fill="url(#sg31)"/><path d="M1158.1 100.0 L1160.5 135.0 L1162.8 165.0 L1159.8 195.0 L1153.9 230.0 L1144.8 265.0 L1134.8 302.0 L1123.9 347.0 L1126.4 380.0 L1125.0 430.0 L1111.3 480.0 L1078.6 505.0 L1053.1 525.0 L1029.1 571.0 L1007.8 613.0 L989.3 648.0 L969.4 690.0 L973.7 690.0 L993.4 648.0 L1011.9 613.0 L1033.2 571.0 L1057.1 525.0 L1083.1 505.0 L1116.5 480.0 L1129.9 430.0 L1130.7 380.0 L1127.6 347.0 L1138.5 302.0 L1148.5 265.0 L1157.7 230.0 L1163.5 195.0 L1166.4 165.0 L1163.9 135.0 L1161.2 100.0Z" fill="url(#sg32)"/><path d="M1160.6 100.0 L1163.3 135.0 L1165.8 165.0 L1163.0 195.0 L1157.1 230.0 L1147.9 265.0 L1137.9 302.0 L1127.0 347.0 L1130.1 380.0 L1129.3 430.0 L1116.0 480.0 L1082.5 505.0 L1056.5 525.0 L1032.6 571.0 L1011.3 613.0 L992.8 648.0 L973.1 690.0 L977.4 690.0 L997.0 648.0 L1015.5 613.0 L1036.6 571.0 L1060.5 525.0 L1087.0 505.0 L1121.2 480.0 L1134.3 430.0 L1134.3 380.0 L1130.8 347.0 L1141.6 302.0 L1151.6 265.0 L1160.9 230.0 L1166.7 195.0 L1169.5 165.0 L1166.7 135.0 L1163.6 100.0Z" fill="url(#sg33)"/></g> <g filter="url(#bl2)"><path d="M1106.0 372.0 L1130.0 432.0 L1160.0 436.0 L1260.0 430.0 L1326.0 450.0 L1326.0 495.0 L1309.0 504.0 L1147.0 567.0 L1096.0 596.0 L1060.0 596.0 L1060.0 502.0 L1073.0 500.0 L1083.0 484.0 L1095.0 453.0 L1102.0 420.0 L1105.0 392.0Z" fill="#38a822"/><path d="M1100.0 430.0 L1125.0 440.0 L1150.0 470.0 L1168.0 520.0 L1150.0 560.0 L1120.0 580.0 L1090.0 560.0 L1086.0 500.0 L1088.0 470.0Z" fill="#24a82c"/><path d="M1112.0 470.0 L1150.0 480.0 L1165.0 520.0 L1148.0 552.0 L1122.0 548.0 L1110.0 510.0Z" fill="#14a046"/><path d="M1160.0 452.0 L1200.0 446.0 L1262.0 456.0 L1296.0 468.0 L1240.0 482.0 L1190.0 490.0 L1168.0 474.0Z" fill="#62ac22"/><path d="M1134.0 430.0 L1160.0 428.0 L1190.0 424.0 L1260.0 424.0 L1262.0 444.0 L1312.0 446.0 L1328.0 476.0 L1322.0 492.0 L1312.0 500.0 L1306.0 480.0 L1296.0 462.0 L1255.0 455.0 L1190.0 443.0 L1160.0 447.0 L1140.0 450.0Z" fill="#96821a"/><path d="M1134.0 428.0 L1160.0 426.0 L1190.0 422.0 L1260.0 422.0 L1263.0 443.0 L1313.0 445.0 L1329.0 476.0 L1323.0 492.0 L1316.0 497.0 L1314.0 478.0 L1303.0 456.0 L1257.0 449.0 L1190.0 438.0 L1160.0 443.0 L1139.0 446.0Z" fill="#962c0a"/><path d="M1190.0 420.0 L1260.0 420.0 L1262.0 438.0 L1313.0 442.0 L1328.0 470.0 L1320.0 470.0 L1306.0 450.0 L1258.0 444.0 L1190.0 432.0Z" fill="#701204"/><path d="M1140.0 536.0 L1296.0 472.0 L1302.0 484.0 L1142.0 550.0Z" fill="#2cb228"/><path d="M1143.0 546.0 L1299.0 480.0 L1313.0 492.0 L1310.0 505.0 L1268.5 519.0 L1214.6 541.0 L1146.0 567.0Z" fill="#16928a"/><path d="M1152.0 560.0 L1306.0 498.0 L1310.0 505.0 L1147.0 568.0Z" fill="#128074"/><path d="M1086.0 512.0 L1100.0 520.0 L1109.0 545.0 L1111.0 570.0 L1100.0 590.0 L1075.0 597.0 L1060.0 588.0 L1063.0 565.0 L1070.0 548.0 L1080.0 530.0Z" fill="#849822"/><path d="M1074.0 543.0 L1093.0 547.0 L1103.0 570.0 L1095.0 592.0 L1074.0 597.0 L1060.0 586.0 L1064.0 562.0Z" fill="#b06c16"/><path d="M1064.0 558.0 L1083.0 557.0 L1095.0 576.0 L1089.0 594.0 L1070.0 597.0 L1060.0 585.0Z" fill="#983a0c"/><path d="M1062.0 570.0 L1076.0 571.0 L1087.0 590.0 L1074.0 598.0 L1060.0 588.0Z" fill="#7c1c06"/></g><g filter="url(#bl1)"><path d="M1156.0 205.0 C1155.0 210.0 1151.6 227.8 1150.0 235.0 C1148.4 242.2 1147.1 245.8 1146.5 248.0" fill="none" stroke="#3cba28" stroke-width="6.8" stroke-linejoin="round" stroke-linecap="butt"/><path d="M1156.0 205.0 C1155.0 210.0 1151.6 227.8 1150.0 235.0 C1148.4 242.2 1147.1 245.8 1146.5 248.0" fill="none" stroke="#96d21e" stroke-width="4.8" stroke-linejoin="round" stroke-linecap="butt"/><path d="M1156.0 205.0 C1155.0 210.0 1151.6 227.8 1150.0 235.0 C1148.4 242.2 1147.1 245.8 1146.5 248.0" fill="none" stroke="#e8e414" stroke-width="3.6" stroke-linejoin="round" stroke-linecap="butt"/><path d="M1156.0 205.0 C1155.0 210.0 1151.6 227.8 1150.0 235.0 C1148.4 242.2 1147.1 245.8 1146.5 248.0" fill="none" stroke="#ee8210" stroke-width="2.5" stroke-linejoin="round" stroke-linecap="butt"/><path d="M1156.0 205.0 C1155.0 210.0 1151.6 227.8 1150.0 235.0 C1148.4 242.2 1147.1 245.8 1146.5 248.0" fill="none" stroke="#e2220c" stroke-width="1.6" stroke-linejoin="round" stroke-linecap="butt"/><path d="M1156.0 205.0 C1155.0 210.0 1151.6 227.8 1150.0 235.0 C1148.4 242.2 1147.1 245.8 1146.5 248.0" fill="none" stroke="#781204" stroke-width="0.7" stroke-linejoin="round" stroke-linecap="butt"/><path d="M1147.0 246.0 C1146.2 248.8 1143.8 257.5 1142.5 262.5 C1141.2 267.5 1139.6 273.8 1139.0 276.0" fill="none" stroke="#3cba28" stroke-width="13.5" stroke-linejoin="round" stroke-linecap="butt"/><path d="M1147.0 246.0 C1146.2 248.8 1143.8 257.5 1142.5 262.5 C1141.2 267.5 1139.6 273.8 1139.0 276.0" fill="none" stroke="#96d21e" stroke-width="9.5" stroke-linejoin="round" stroke-linecap="butt"/><path d="M1147.0 246.0 C1146.2 248.8 1143.8 257.5 1142.5 262.5 C1141.2 267.5 1139.6 273.8 1139.0 276.0" fill="none" stroke="#e8e414" stroke-width="7.2" stroke-linejoin="round" stroke-linecap="butt"/><path d="M1147.0 246.0 C1146.2 248.8 1143.8 257.5 1142.5 262.5 C1141.2 267.5 1139.6 273.8 1139.0 276.0" fill="none" stroke="#ee8210" stroke-width="5.0" stroke-linejoin="round" stroke-linecap="butt"/><path d="M1147.0 246.0 C1146.2 248.8 1143.8 257.5 1142.5 262.5 C1141.2 267.5 1139.6 273.8 1139.0 276.0" fill="none" stroke="#e2220c" stroke-width="3.1" stroke-linejoin="round" stroke-linecap="butt"/><path d="M1147.0 246.0 C1146.2 248.8 1143.8 257.5 1142.5 262.5 C1141.2 267.5 1139.6 273.8 1139.0 276.0" fill="none" stroke="#781204" stroke-width="1.3" stroke-linejoin="round" stroke-linecap="butt"/><path d="M1139.5 274.0 C1138.8 276.7 1136.3 285.0 1135.0 290.0 C1133.7 295.0 1132.1 301.7 1131.5 304.0" fill="none" stroke="#3cba28" stroke-width="21.1" stroke-linejoin="round" stroke-linecap="butt"/><path d="M1139.5 274.0 C1138.8 276.7 1136.3 285.0 1135.0 290.0 C1133.7 295.0 1132.1 301.7 1131.5 304.0" fill="none" stroke="#96d21e" stroke-width="14.8" stroke-linejoin="round" stroke-linecap="butt"/><path d="M1139.5 274.0 C1138.8 276.7 1136.3 285.0 1135.0 290.0 C1133.7 295.0 1132.1 301.7 1131.5 304.0" fill="none" stroke="#e8e414" stroke-width="11.3" stroke-linejoin="round" stroke-linecap="butt"/><path d="M1139.5 274.0 C1138.8 276.7 1136.3 285.0 1135.0 290.0 C1133.7 295.0 1132.1 301.7 1131.5 304.0" fill="none" stroke="#ee8210" stroke-width="7.8" stroke-linejoin="round" stroke-linecap="butt"/><path d="M1139.5 274.0 C1138.8 276.7 1136.3 285.0 1135.0 290.0 C1133.7 295.0 1132.1 301.7 1131.5 304.0" fill="none" stroke="#e2220c" stroke-width="4.8" stroke-linejoin="round" stroke-linecap="butt"/><path d="M1139.5 274.0 C1138.8 276.7 1136.3 285.0 1135.0 290.0 C1133.7 295.0 1132.1 301.7 1131.5 304.0" fill="none" stroke="#781204" stroke-width="2.0" stroke-linejoin="round" stroke-linecap="butt"/><path d="M1132.0 302.0 C1131.2 305.0 1129.5 312.0 1127.5 320.0 C1125.5 328.0 1122.6 340.0 1120.0 350.0 C1117.4 360.0 1112.7 371.7 1112.0 380.0 C1111.3 388.3 1114.7 394.6 1116.0 400.0 C1117.3 405.4 1117.7 407.2 1120.0 412.5 C1122.3 417.8 1127.0 427.3 1130.0 432.0 C1133.0 436.7 1134.3 439.2 1138.0 440.5 C1141.7 441.8 1147.3 440.0 1152.0 439.5 C1156.7 439.0 1163.7 437.8 1166.0 437.5" fill="none" stroke="#3cba28" stroke-width="27.0" stroke-linejoin="round" stroke-linecap="butt"/><path d="M1132.0 302.0 C1131.2 305.0 1129.5 312.0 1127.5 320.0 C1125.5 328.0 1122.6 340.0 1120.0 350.0 C1117.4 360.0 1112.7 371.7 1112.0 380.0 C1111.3 388.3 1114.7 394.6 1116.0 400.0 C1117.3 405.4 1117.7 407.2 1120.0 412.5 C1122.3 417.8 1127.0 427.3 1130.0 432.0 C1133.0 436.7 1134.3 439.2 1138.0 440.5 C1141.7 441.8 1147.3 440.0 1152.0 439.5 C1156.7 439.0 1163.7 437.8 1166.0 437.5" fill="none" stroke="#96d21e" stroke-width="19.0" stroke-linejoin="round" stroke-linecap="butt"/><path d="M1132.0 302.0 C1131.2 305.0 1129.5 312.0 1127.5 320.0 C1125.5 328.0 1122.6 340.0 1120.0 350.0 C1117.4 360.0 1112.7 371.7 1112.0 380.0 C1111.3 388.3 1114.7 394.6 1116.0 400.0 C1117.3 405.4 1117.7 407.2 1120.0 412.5 C1122.3 417.8 1127.0 427.3 1130.0 432.0 C1133.0 436.7 1134.3 439.2 1138.0 440.5 C1141.7 441.8 1147.3 440.0 1152.0 439.5 C1156.7 439.0 1163.7 437.8 1166.0 437.5" fill="none" stroke="#e8e414" stroke-width="14.5" stroke-linejoin="round" stroke-linecap="butt"/><path d="M1132.0 302.0 C1131.2 305.0 1129.5 312.0 1127.5 320.0 C1125.5 328.0 1122.6 340.0 1120.0 350.0 C1117.4 360.0 1112.7 371.7 1112.0 380.0 C1111.3 388.3 1114.7 394.6 1116.0 400.0 C1117.3 405.4 1117.7 407.2 1120.0 412.5 C1122.3 417.8 1127.0 427.3 1130.0 432.0 C1133.0 436.7 1134.3 439.2 1138.0 440.5 C1141.7 441.8 1147.3 440.0 1152.0 439.5 C1156.7 439.0 1163.7 437.8 1166.0 437.5" fill="none" stroke="#ee8210" stroke-width="10.0" stroke-linejoin="round" stroke-linecap="butt"/><path d="M1132.0 302.0 C1131.2 305.0 1129.5 312.0 1127.5 320.0 C1125.5 328.0 1122.6 340.0 1120.0 350.0 C1117.4 360.0 1112.7 371.7 1112.0 380.0 C1111.3 388.3 1114.7 394.6 1116.0 400.0 C1117.3 405.4 1117.7 407.2 1120.0 412.5 C1122.3 417.8 1127.0 427.3 1130.0 432.0 C1133.0 436.7 1134.3 439.2 1138.0 440.5 C1141.7 441.8 1147.3 440.0 1152.0 439.5 C1156.7 439.0 1163.7 437.8 1166.0 437.5" fill="none" stroke="#e2220c" stroke-width="6.2" stroke-linejoin="round" stroke-linecap="butt"/><path d="M1132.0 302.0 C1131.2 305.0 1129.5 312.0 1127.5 320.0 C1125.5 328.0 1122.6 340.0 1120.0 350.0 C1117.4 360.0 1112.7 371.7 1112.0 380.0 C1111.3 388.3 1114.7 394.6 1116.0 400.0 C1117.3 405.4 1117.7 407.2 1120.0 412.5 C1122.3 417.8 1127.0 427.3 1130.0 432.0 C1133.0 436.7 1134.3 439.2 1138.0 440.5 C1141.7 441.8 1147.3 440.0 1152.0 439.5 C1156.7 439.0 1163.7 437.8 1166.0 437.5" fill="none" stroke="#781204" stroke-width="2.6" stroke-linejoin="round" stroke-linecap="butt"/><path d="M1088.0 513.0 C1087.7 511.5 1087.2 506.4 1086.0 504.0 C1084.8 501.6 1082.7 499.8 1080.5 498.5 C1078.3 497.2 1075.4 496.5 1073.0 496.3 C1070.6 496.1 1068.2 496.2 1066.0 497.5 C1063.8 498.8 1063.5 497.8 1060.0 504.0 C1056.5 510.2 1050.0 525.2 1045.0 535.0 C1040.0 544.8 1033.8 555.2 1030.0 562.5 C1026.2 569.8 1026.7 569.8 1022.0 579.0 C1017.3 588.2 1008.0 606.5 1002.0 618.0 C996.0 629.5 990.2 641.0 986.0 648.0 C981.8 655.0 978.5 658.0 977.0 660.0" fill="none" stroke="#3cba28" stroke-width="25.6" stroke-linejoin="round" stroke-linecap="butt"/><path d="M1088.0 513.0 C1087.7 511.5 1087.2 506.4 1086.0 504.0 C1084.8 501.6 1082.7 499.8 1080.5 498.5 C1078.3 497.2 1075.4 496.5 1073.0 496.3 C1070.6 496.1 1068.2 496.2 1066.0 497.5 C1063.8 498.8 1063.5 497.8 1060.0 504.0 C1056.5 510.2 1050.0 525.2 1045.0 535.0 C1040.0 544.8 1033.8 555.2 1030.0 562.5 C1026.2 569.8 1026.7 569.8 1022.0 579.0 C1017.3 588.2 1008.0 606.5 1002.0 618.0 C996.0 629.5 990.2 641.0 986.0 648.0 C981.8 655.0 978.5 658.0 977.0 660.0" fill="none" stroke="#96d21e" stroke-width="18.1" stroke-linejoin="round" stroke-linecap="butt"/><path d="M1088.0 513.0 C1087.7 511.5 1087.2 506.4 1086.0 504.0 C1084.8 501.6 1082.7 499.8 1080.5 498.5 C1078.3 497.2 1075.4 496.5 1073.0 496.3 C1070.6 496.1 1068.2 496.2 1066.0 497.5 C1063.8 498.8 1063.5 497.8 1060.0 504.0 C1056.5 510.2 1050.0 525.2 1045.0 535.0 C1040.0 544.8 1033.8 555.2 1030.0 562.5 C1026.2 569.8 1026.7 569.8 1022.0 579.0 C1017.3 588.2 1008.0 606.5 1002.0 618.0 C996.0 629.5 990.2 641.0 986.0 648.0 C981.8 655.0 978.5 658.0 977.0 660.0" fill="none" stroke="#e8e414" stroke-width="13.8" stroke-linejoin="round" stroke-linecap="butt"/><path d="M1088.0 513.0 C1087.7 511.5 1087.2 506.4 1086.0 504.0 C1084.8 501.6 1082.7 499.8 1080.5 498.5 C1078.3 497.2 1075.4 496.5 1073.0 496.3 C1070.6 496.1 1068.2 496.2 1066.0 497.5 C1063.8 498.8 1063.5 497.8 1060.0 504.0 C1056.5 510.2 1050.0 525.2 1045.0 535.0 C1040.0 544.8 1033.8 555.2 1030.0 562.5 C1026.2 569.8 1026.7 569.8 1022.0 579.0 C1017.3 588.2 1008.0 606.5 1002.0 618.0 C996.0 629.5 990.2 641.0 986.0 648.0 C981.8 655.0 978.5 658.0 977.0 660.0" fill="none" stroke="#ee8210" stroke-width="9.5" stroke-linejoin="round" stroke-linecap="butt"/><path d="M1088.0 513.0 C1087.7 511.5 1087.2 506.4 1086.0 504.0 C1084.8 501.6 1082.7 499.8 1080.5 498.5 C1078.3 497.2 1075.4 496.5 1073.0 496.3 C1070.6 496.1 1068.2 496.2 1066.0 497.5 C1063.8 498.8 1063.5 497.8 1060.0 504.0 C1056.5 510.2 1050.0 525.2 1045.0 535.0 C1040.0 544.8 1033.8 555.2 1030.0 562.5 C1026.2 569.8 1026.7 569.8 1022.0 579.0 C1017.3 588.2 1008.0 606.5 1002.0 618.0 C996.0 629.5 990.2 641.0 986.0 648.0 C981.8 655.0 978.5 658.0 977.0 660.0" fill="none" stroke="#e2220c" stroke-width="5.9" stroke-linejoin="round" stroke-linecap="butt"/><path d="M1088.0 513.0 C1087.7 511.5 1087.2 506.4 1086.0 504.0 C1084.8 501.6 1082.7 499.8 1080.5 498.5 C1078.3 497.2 1075.4 496.5 1073.0 496.3 C1070.6 496.1 1068.2 496.2 1066.0 497.5 C1063.8 498.8 1063.5 497.8 1060.0 504.0 C1056.5 510.2 1050.0 525.2 1045.0 535.0 C1040.0 544.8 1033.8 555.2 1030.0 562.5 C1026.2 569.8 1026.7 569.8 1022.0 579.0 C1017.3 588.2 1008.0 606.5 1002.0 618.0 C996.0 629.5 990.2 641.0 986.0 648.0 C981.8 655.0 978.5 658.0 977.0 660.0" fill="none" stroke="#781204" stroke-width="2.5" stroke-linejoin="round" stroke-linecap="butt"/><path d="M1068.0 566.0 C1068.7 563.7 1070.2 556.7 1072.0 552.0 C1073.8 547.3 1076.9 542.3 1079.0 538.0 C1081.1 533.7 1083.0 530.2 1084.5 526.0 C1086.0 521.8 1087.4 515.2 1088.0 513.0" fill="none" stroke="#6ea41e" stroke-width="24.0"/><path d="M1068.0 566.0 C1068.7 563.7 1070.2 556.7 1072.0 552.0 C1073.8 547.3 1076.9 542.3 1079.0 538.0 C1081.1 533.7 1083.0 530.2 1084.5 526.0 C1086.0 521.8 1087.4 515.2 1088.0 513.0" fill="none" stroke="#96961e" stroke-width="16.0"/><path d="M1068.0 566.0 C1068.7 563.7 1070.2 556.7 1072.0 552.0 C1073.8 547.3 1076.9 542.3 1079.0 538.0 C1081.1 533.7 1083.0 530.2 1084.5 526.0 C1086.0 521.8 1087.4 515.2 1088.0 513.0" fill="none" stroke="#a86816" stroke-width="10.0"/><path d="M1068.0 566.0 C1068.7 563.7 1070.2 556.7 1072.0 552.0 C1073.8 547.3 1076.9 542.3 1079.0 538.0 C1081.1 533.7 1083.0 530.2 1084.5 526.0 C1086.0 521.8 1087.4 515.2 1088.0 513.0" fill="none" stroke="#96320a" stroke-width="5.0"/><path d="M1068.0 566.0 C1068.7 563.7 1070.2 556.7 1072.0 552.0 C1073.8 547.3 1076.9 542.3 1079.0 538.0 C1081.1 533.7 1083.0 530.2 1084.5 526.0 C1086.0 521.8 1087.4 515.2 1088.0 513.0" fill="none" stroke="#6e1004" stroke-width="2.4"/></g><rect x="870" y="95" width="470" height="592" fill="#001800" filter="url(#nz)" opacity="0.2"/><rect x="1100" y="420" width="240" height="180" filter="url(#nz2)" opacity="0.06"/></g><path d="M1124.4 111.9h1v1h-1zM1119.9 107.4h1v1h-1zM1111.4 105.3h1.5v1.5h-1.5zM1130.2 108.4h1.5v1.5h-1.5zM1113.5 111.8h1.5v1.5h-1.5zM1117.8 110.1h1v1h-1zM1131.7 105.8h1.5v1.5h-1.5zM1117.1 108.3h1v1h-1zM1107.6 106.8h1v1h-1zM1106.6 107.7h1v1h-1zM1105.9 105.2h1.5v1.5h-1.5zM1121.8 104.9h1v1h-1zM1116.6 105.5h1.5v1.5h-1.5zM1122.3 108.4h1v1h-1zM1120.8 111.8h1.5v1.5h-1.5zM1116.1 109.2h1v1h-1zM1107.2 108.0h1v1h-1zM1105.2 105.8h1v1h-1zM1103.5 108.8h1v1h-1zM1128.7 110.7h1v1h-1zM1106.9 105.2h1v1h-1zM1131.2 108.9h1v1h-1zM966.6 669.0h2v2h-2zM951.7 663.0h2v2h-2zM935.3 654.6h1v1h-1zM947.5 660.6h1.5v1.5h-1.5zM946.2 671.0h1.5v1.5h-1.5zM942.1 648.5h1v1h-1zM946.7 646.8h1v1h-1zM942.0 666.0h1v1h-1zM944.7 649.8h1.5v1.5h-1.5zM948.9 659.3h1v1h-1zM950.0 680.3h1v1h-1zM954.8 655.9h1.5v1.5h-1.5zM969.8 658.2h1.5v1.5h-1.5zM942.1 664.3h1v1h-1zM966.2 661.2h1.5v1.5h-1.5zM943.2 642.6h1v1h-1zM948.7 644.8h1.5v1.5h-1.5zM963.4 664.4h1v1h-1zM946.4 670.4h1v1h-1zM947.0 663.4h1v1h-1zM960.7 661.9h1.5v1.5h-1.5zM947.0 657.6h2v2h-2zM968.5 656.1h1v1h-1zM964.3 652.6h1.5v1.5h-1.5zM947.2 649.1h2v2h-2zM944.1 637.7h1v1h-1zM954.2 663.6h1v1h-1zM937.7 655.9h1.5v1.5h-1.5zM951.4 676.0h2v2h-2zM955.7 669.9h1.5v1.5h-1.5zM960.7 651.0h1v1h-1zM951.5 656.7h1v1h-1zM951.0 668.6h2v2h-2zM954.7 670.3h1v1h-1zM939.7 651.8h1v1h-1zM959.5 662.7h2v2h-2zM951.9 671.5h1v1h-1zM951.4 649.0h1.5v1.5h-1.5zM956.1 657.0h2v2h-2zM971.7 652.9h2v2h-2zM958.7 647.0h1v1h-1zM959.8 655.6h1v1h-1zM931.9 664.8h1v1h-1zM962.8 655.3h1.5v1.5h-1.5zM967.1 657.3h1.5v1.5h-1.5zM957.0 660.1h1.5v1.5h-1.5zM961.7 672.4h2v2h-2zM955.7 658.7h1.5v1.5h-1.5zM961.5 650.2h1v1h-1zM948.2 655.2h1v1h-1zM953.0 654.7h1v1h-1zM948.1 661.5h2v2h-2zM948.1 655.5h1v1h-1zM948.6 654.2h2v2h-2zM958.7 657.4h1v1h-1zM929.6 672.5h1v1h-1zM939.9 650.0h1v1h-1zM963.6 647.6h1.5v1.5h-1.5zM952.7 667.0h1v1h-1zM972.5 655.5h2v2h-2zM945.8 662.7h1.5v1.5h-1.5zM960.8 646.8h1v1h-1zM954.5 646.2h2v2h-2zM959.8 650.0h2v2h-2zM952.4 675.0h1v1h-1zM953.9 645.5h1.5v1.5h-1.5zM942.0 660.6h1v1h-1zM963.1 652.1h1v1h-1zM951.6 673.7h2v2h-2zM955.0 672.4h2v2h-2zM952.6 651.0h1v1h-1zM959.6 651.8h1.5v1.5h-1.5zM952.1 661.1h1v1h-1zM964.0 662.7h1v1h-1zM932.1 670.0h2v2h-2zM949.6 649.2h1v1h-1zM962.3 650.6h1v1h-1zM960.1 648.7h1v1h-1zM964.0 664.3h2v2h-2zM940.2 643.7h1v1h-1zM960.8 670.6h2v2h-2zM940.9 642.6h1.5v1.5h-1.5zM947.5 650.3h2v2h-2zM963.3 647.9h1v1h-1zM954.3 649.6h1v1h-1zM966.5 655.0h1v1h-1zM931.1 658.2h1.5v1.5h-1.5zM955.6 644.3h1v1h-1zM961.0 668.6h1v1h-1zM957.3 672.9h1v1h-1zM957.6 652.5h1v1h-1zM954.3 646.4h2v2h-2zM952.6 661.7h1v1h-1zM954.9 662.0h1v1h-1zM962.3 664.5h1.5v1.5h-1.5zM957.1 650.7h1v1h-1zM944.2 663.1h1v1h-1zM953.8 663.4h2v2h-2zM947.2 662.6h1v1h-1zM945.0 654.9h2v2h-2zM968.4 657.7h1v1h-1zM956.3 660.2h1v1h-1zM959.4 651.6h1v1h-1zM972.5 653.9h1v1h-1zM953.7 651.9h1v1h-1zM965.3 655.1h2v2h-2zM949.2 646.9h1v1h-1zM956.6 670.5h2v2h-2zM951.2 640.5h2v2h-2zM951.0 642.6h1v1h-1zM972.3 653.2h1.5v1.5h-1.5zM951.6 649.4h1.5v1.5h-1.5zM946.3 643.8h1.5v1.5h-1.5zM945.0 652.9h1.5v1.5h-1.5z" fill="#007818"/><path d="M1148.4 111.1h1.5v1.5h-1.5zM1137.8 103.7h1v1h-1zM1147.2 111.6h1v1h-1z" fill="#003048"/><path d="M1141.3 105.2h1v1h-1zM1153.9 106.1h1v1h-1zM1144.3 106.1h1v1h-1zM1154.0 109.7h1.5v1.5h-1.5z" fill="#003060"/><path d="M1135.4 108.3h1v1h-1zM1156.3 110.5h1.5v1.5h-1.5zM916.3 620.9h1v1h-1zM911.1 632.9h2v2h-2zM898.3 651.0h1v1h-1zM905.4 642.0h1v1h-1zM912.1 629.1h1.5v1.5h-1.5zM914.8 621.0h1v1h-1zM923.8 635.3h1v1h-1zM929.8 638.9h1v1h-1z" fill="#004830"/><path d="M1136.5 102.3h1v1h-1zM1138.3 105.7h1v1h-1zM1127.9 103.2h1v1h-1zM1136.8 105.9h1v1h-1zM1137.1 111.4h1v1h-1zM1128.0 108.7h1.5v1.5h-1.5zM1126.0 112.0h1v1h-1zM1125.4 102.8h1.5v1.5h-1.5zM1132.2 107.1h1v1h-1zM1129.3 107.5h1.5v1.5h-1.5zM1153.7 108.6h1v1h-1zM1132.2 103.9h1v1h-1zM1133.5 111.9h1v1h-1zM924.7 649.6h1.5v1.5h-1.5zM936.9 638.6h2v2h-2zM932.6 646.8h1.5v1.5h-1.5zM938.9 646.4h1.5v1.5h-1.5zM937.0 642.0h2v2h-2zM949.4 639.4h2v2h-2zM943.4 639.7h1.5v1.5h-1.5zM926.5 665.5h1v1h-1zM929.4 634.2h1.5v1.5h-1.5zM901.8 646.0h1v1h-1zM914.2 623.1h1v1h-1zM948.9 640.2h2v2h-2zM925.3 651.5h2v2h-2zM938.3 632.8h1v1h-1zM956.7 643.7h2v2h-2zM933.9 655.2h1.5v1.5h-1.5zM937.5 644.4h1v1h-1zM902.0 644.6h2v2h-2zM941.9 643.9h2v2h-2zM938.9 654.9h1v1h-1zM938.9 652.5h1v1h-1zM913.3 663.3h1v1h-1zM943.7 643.8h1.5v1.5h-1.5zM914.3 627.1h1.5v1.5h-1.5zM935.6 649.6h1.5v1.5h-1.5zM908.6 640.2h2v2h-2zM940.6 650.6h2v2h-2zM947.9 643.1h1.5v1.5h-1.5zM941.5 635.9h1v1h-1zM910.4 632.0h1v1h-1zM909.3 628.0h1.5v1.5h-1.5zM928.8 651.8h1.5v1.5h-1.5zM929.2 657.7h1.5v1.5h-1.5zM941.4 657.7h1v1h-1zM935.7 641.2h1v1h-1zM916.2 625.5h1v1h-1zM944.6 648.1h1v1h-1zM924.6 668.6h1v1h-1zM936.6 650.8h1.5v1.5h-1.5zM930.6 663.7h1v1h-1zM941.0 658.2h1v1h-1zM937.4 638.7h2v2h-2zM942.7 655.5h2v2h-2zM937.7 642.5h2v2h-2zM923.6 646.8h1.5v1.5h-1.5zM907.8 632.7h1.5v1.5h-1.5zM917.9 653.2h2v2h-2zM930.3 653.3h1v1h-1zM925.8 641.5h1v1h-1zM928.5 647.9h1v1h-1zM927.5 648.3h1v1h-1zM937.6 654.9h2v2h-2zM936.9 642.4h1v1h-1zM937.3 636.3h2v2h-2zM922.9 652.4h1v1h-1zM928.2 649.9h1v1h-1zM902.7 647.5h1v1h-1zM946.2 644.1h1.5v1.5h-1.5zM949.5 643.6h1v1h-1zM955.9 651.9h1v1h-1zM898.9 653.9h1v1h-1z" fill="#006030"/><path d="M1133.9 111.2h1v1h-1zM1136.5 108.0h1.5v1.5h-1.5zM1108.7 105.3h1.5v1.5h-1.5zM1124.7 104.3h1.5v1.5h-1.5zM1126.6 109.6h1v1h-1zM1121.7 110.2h1.5v1.5h-1.5zM1103.9 109.8h1.5v1.5h-1.5zM1156.7 111.6h1.5v1.5h-1.5zM1122.2 110.4h1v1h-1zM1107.6 107.4h1.5v1.5h-1.5zM1106.2 106.4h1.5v1.5h-1.5zM1103.4 110.3h1v1h-1zM1118.8 110.2h1v1h-1zM1107.7 112.0h1v1h-1zM1112.0 110.5h1v1h-1zM1109.3 111.5h1v1h-1zM1116.3 111.2h1v1h-1zM1119.0 109.9h1v1h-1zM1104.1 111.2h1v1h-1zM1113.9 109.0h1v1h-1zM947.7 669.3h1.5v1.5h-1.5zM941.9 668.3h1v1h-1zM930.9 670.3h2v2h-2zM947.0 666.8h1.5v1.5h-1.5zM956.3 670.9h1v1h-1zM953.8 667.7h1v1h-1zM960.7 661.7h2v2h-2zM954.6 679.5h1.5v1.5h-1.5zM953.7 653.9h1v1h-1zM956.6 656.1h1.5v1.5h-1.5zM947.1 660.6h1v1h-1zM927.9 666.3h1v1h-1zM970.7 654.2h1.5v1.5h-1.5zM941.8 645.7h1.5v1.5h-1.5zM946.8 661.7h1.5v1.5h-1.5zM971.8 654.8h2v2h-2zM940.6 661.5h1v1h-1zM960.1 651.3h1v1h-1zM967.1 652.4h1v1h-1zM954.9 670.7h1.5v1.5h-1.5zM956.6 664.1h1v1h-1zM956.6 662.0h1v1h-1zM957.1 658.9h1v1h-1zM950.1 659.8h1v1h-1zM955.5 652.4h1.5v1.5h-1.5zM959.0 649.2h1.5v1.5h-1.5zM967.8 656.5h1v1h-1zM949.2 642.6h1v1h-1zM910.9 624.5h1.5v1.5h-1.5zM963.2 657.0h1v1h-1zM964.4 659.1h2v2h-2zM941.9 655.6h2v2h-2zM949.8 678.9h1.5v1.5h-1.5zM945.6 652.1h1.5v1.5h-1.5zM949.9 651.8h2v2h-2zM950.3 644.5h2v2h-2zM956.7 651.9h2v2h-2zM960.9 663.0h1v1h-1zM964.8 658.1h1v1h-1zM951.9 659.5h1v1h-1zM934.8 662.9h1v1h-1zM947.7 644.5h2v2h-2zM966.7 651.3h2v2h-2zM956.8 668.6h1v1h-1zM956.4 675.3h2v2h-2zM944.8 651.8h1v1h-1zM941.5 660.6h1.5v1.5h-1.5zM959.7 654.5h1.5v1.5h-1.5zM958.0 652.5h2v2h-2zM958.3 652.8h1v1h-1zM955.7 669.1h1v1h-1zM944.9 667.6h1v1h-1zM960.4 646.3h2v2h-2zM953.7 652.0h1v1h-1zM937.1 675.2h1v1h-1zM947.2 643.3h1v1h-1zM960.7 649.6h2v2h-2zM962.4 659.7h1v1h-1zM958.6 652.9h1v1h-1zM959.5 649.0h1v1h-1zM897.0 652.1h1v1h-1zM958.7 668.5h1v1h-1zM958.4 644.8h2v2h-2zM958.8 650.9h2v2h-2zM963.2 652.0h2v2h-2zM946.4 653.3h1.5v1.5h-1.5zM955.0 655.8h2v2h-2zM946.0 665.8h1v1h-1zM967.7 660.4h2v2h-2zM954.7 677.0h1.5v1.5h-1.5zM945.5 655.4h1.5v1.5h-1.5zM950.2 660.2h2v2h-2zM958.6 657.4h2v2h-2zM966.7 651.5h1.5v1.5h-1.5zM959.4 656.4h1v1h-1zM943.8 659.4h1.5v1.5h-1.5zM939.0 667.4h2v2h-2zM952.4 657.3h1v1h-1zM970.9 660.6h1v1h-1zM960.4 657.3h2v2h-2zM963.8 647.6h2v2h-2zM950.0 646.3h1v1h-1zM908.9 629.2h1v1h-1zM969.5 654.0h1v1h-1zM964.2 652.2h1v1h-1zM968.4 655.6h1v1h-1zM937.4 652.0h2v2h-2zM952.0 641.2h1v1h-1zM932.6 663.2h1v1h-1zM941.4 648.3h1v1h-1zM954.9 668.4h2v2h-2zM956.8 660.2h1.5v1.5h-1.5zM941.0 667.9h1.5v1.5h-1.5zM947.8 649.8h1v1h-1zM962.0 661.6h1v1h-1zM904.0 641.7h1v1h-1zM958.5 644.4h1.5v1.5h-1.5zM968.5 652.0h1v1h-1zM956.2 660.4h2v2h-2zM956.1 644.5h1v1h-1zM936.8 652.1h1.5v1.5h-1.5zM964.7 665.3h1v1h-1zM906.5 632.5h1v1h-1zM960.4 651.3h1v1h-1zM936.5 656.0h1.5v1.5h-1.5zM961.5 659.7h1v1h-1zM939.0 666.7h1v1h-1zM914.4 623.4h1v1h-1zM964.7 650.3h2v2h-2zM948.4 649.1h1v1h-1zM959.1 651.1h1v1h-1zM962.4 647.2h1.5v1.5h-1.5zM953.5 682.8h1v1h-1zM903.8 638.7h1.5v1.5h-1.5zM955.6 648.2h2v2h-2zM958.8 659.5h1v1h-1zM968.9 659.3h1v1h-1zM949.2 655.2h1v1h-1zM951.0 641.9h1.5v1.5h-1.5zM958.5 664.9h1v1h-1zM955.6 666.7h1.5v1.5h-1.5zM955.0 654.6h2v2h-2zM952.0 660.3h2v2h-2zM944.8 657.5h2v2h-2zM962.2 651.7h1v1h-1zM962.9 661.7h1v1h-1zM958.6 648.9h1v1h-1zM951.6 674.0h1v1h-1zM948.6 641.9h1v1h-1zM957.5 658.8h1v1h-1zM956.9 676.3h1.5v1.5h-1.5zM903.1 639.4h1v1h-1zM948.1 648.9h1.5v1.5h-1.5zM941.7 648.2h1v1h-1zM958.4 654.6h1.5v1.5h-1.5zM950.7 650.5h1v1h-1zM906.9 637.5h1v1h-1zM939.9 641.4h2v2h-2z" fill="#006018"/><path d="M1146.5 111.7h1v1h-1zM1144.9 111.3h1v1h-1zM921.9 626.1h1v1h-1zM921.4 638.2h2v2h-2zM911.0 644.8h1.5v1.5h-1.5zM922.6 637.3h1.5v1.5h-1.5zM918.0 636.5h1v1h-1zM914.2 651.1h2v2h-2zM921.7 633.1h1v1h-1z" fill="#006078"/><path d="M1122.8 106.8h1v1h-1zM1123.4 111.5h1v1h-1zM1122.0 104.3h1v1h-1zM1118.5 104.2h1v1h-1zM1119.5 108.3h1v1h-1zM945.8 656.2h1.5v1.5h-1.5zM958.0 661.1h1v1h-1zM941.2 655.6h1v1h-1zM967.5 660.4h2v2h-2zM950.6 647.9h1v1h-1zM937.1 660.6h1v1h-1zM959.6 673.3h1.5v1.5h-1.5zM948.6 670.9h1v1h-1zM966.1 656.7h1v1h-1zM950.7 646.3h2v2h-2zM947.7 654.7h1v1h-1zM943.7 657.1h1v1h-1zM958.9 663.4h1.5v1.5h-1.5zM955.3 659.0h2v2h-2zM953.0 670.3h1v1h-1zM956.7 647.1h1v1h-1zM958.8 652.2h1v1h-1zM962.1 665.9h1.5v1.5h-1.5zM954.4 642.3h1v1h-1zM958.4 667.9h1.5v1.5h-1.5zM960.9 676.6h1.5v1.5h-1.5zM956.2 671.4h1.5v1.5h-1.5zM964.7 663.9h1v1h-1zM949.7 648.2h1.5v1.5h-1.5zM968.7 654.0h1.5v1.5h-1.5zM958.9 664.5h1v1h-1zM944.0 657.5h1.5v1.5h-1.5zM958.3 665.8h1.5v1.5h-1.5zM955.7 661.8h1.5v1.5h-1.5zM944.8 655.7h1v1h-1zM963.8 671.4h1v1h-1zM958.5 650.0h1v1h-1zM953.8 658.5h1v1h-1zM953.6 655.0h1.5v1.5h-1.5zM938.3 651.0h1.5v1.5h-1.5zM952.3 645.0h1v1h-1zM956.1 644.8h1v1h-1zM964.6 658.9h2v2h-2zM945.3 665.3h1v1h-1zM971.5 658.4h1v1h-1zM967.3 664.5h2v2h-2zM958.0 645.3h1.5v1.5h-1.5zM961.9 660.2h2v2h-2zM932.2 664.8h1v1h-1zM958.5 661.4h1v1h-1zM942.7 650.4h1v1h-1zM957.0 680.3h1v1h-1zM964.5 648.4h2v2h-2zM967.2 650.6h2v2h-2zM943.2 643.9h1v1h-1zM947.8 659.2h2v2h-2zM951.9 641.8h1v1h-1zM955.5 670.8h1v1h-1zM966.6 659.6h1.5v1.5h-1.5zM955.6 677.1h1v1h-1zM952.4 683.5h2v2h-2zM959.4 658.6h2v2h-2zM947.2 662.7h1v1h-1zM961.8 652.1h2v2h-2zM966.7 657.7h1.5v1.5h-1.5zM969.1 657.1h2v2h-2zM958.5 648.8h1v1h-1zM963.8 650.8h2v2h-2zM944.2 649.0h1.5v1.5h-1.5zM946.3 661.8h2v2h-2zM942.4 640.3h1v1h-1zM941.0 646.2h2v2h-2zM935.8 669.6h1.5v1.5h-1.5zM959.9 649.6h1.5v1.5h-1.5zM964.8 649.5h2v2h-2zM958.3 660.7h1.5v1.5h-1.5z" fill="#009018"/><path d="M1144.2 109.7h1v1h-1zM1149.3 109.2h1v1h-1zM1141.0 110.4h1.5v1.5h-1.5zM1141.5 108.1h1v1h-1zM1138.4 104.1h1v1h-1zM1138.3 109.8h1.5v1.5h-1.5zM1150.3 102.4h1.5v1.5h-1.5zM1154.7 111.3h1.5v1.5h-1.5zM922.3 624.4h1.5v1.5h-1.5zM914.0 626.8h1v1h-1zM913.6 665.1h2v2h-2zM917.1 624.0h1v1h-1zM907.4 639.9h1v1h-1zM916.6 622.2h1.5v1.5h-1.5zM908.1 648.9h1v1h-1zM917.9 661.5h1v1h-1zM932.9 629.7h1v1h-1zM913.3 633.8h1v1h-1zM927.2 655.2h1v1h-1zM910.0 635.0h1v1h-1zM914.2 626.6h1v1h-1zM916.9 624.3h1v1h-1zM913.0 635.8h2v2h-2z" fill="#004848"/><path d="M1147.7 103.2h1v1h-1zM1145.3 109.0h1.5v1.5h-1.5zM1144.5 107.8h1v1h-1zM1147.9 109.9h1v1h-1zM1152.4 108.4h1v1h-1zM1148.5 108.1h1.5v1.5h-1.5zM1148.3 107.0h1v1h-1zM914.2 650.1h1.5v1.5h-1.5zM925.0 633.1h1v1h-1zM917.4 647.7h1v1h-1zM919.6 626.2h1v1h-1zM920.7 626.6h1.5v1.5h-1.5zM915.7 640.7h2v2h-2zM914.0 641.7h1v1h-1zM912.6 651.4h2v2h-2zM922.5 638.5h1.5v1.5h-1.5zM924.8 635.4h2v2h-2zM916.7 635.7h1v1h-1zM918.6 627.8h1v1h-1zM911.0 660.9h1v1h-1zM925.7 641.6h1.5v1.5h-1.5zM928.7 639.2h1.5v1.5h-1.5zM920.3 644.4h1v1h-1zM911.7 635.2h1.5v1.5h-1.5zM916.4 641.6h1v1h-1zM903.9 656.5h1.5v1.5h-1.5zM920.8 625.0h1.5v1.5h-1.5zM925.7 627.9h1v1h-1zM919.7 640.9h1v1h-1zM920.9 624.3h1v1h-1zM910.1 638.7h2v2h-2zM922.9 636.4h2v2h-2zM926.9 638.5h1v1h-1zM921.5 641.5h1v1h-1zM912.6 637.3h2v2h-2zM921.9 629.8h2v2h-2zM932.0 634.4h1.5v1.5h-1.5zM928.1 639.3h1.5v1.5h-1.5z" fill="#006060"/><path d="M1134.2 107.8h1v1h-1zM1112.3 101.8h1.5v1.5h-1.5zM1111.9 108.4h1v1h-1zM1132.6 108.2h1v1h-1zM1116.7 111.6h1.5v1.5h-1.5zM1106.1 109.1h1v1h-1zM1131.6 107.1h1v1h-1zM1113.1 104.9h1v1h-1zM912.0 624.0h2v2h-2zM960.4 656.6h1.5v1.5h-1.5zM911.9 624.8h1v1h-1zM900.3 645.4h1.5v1.5h-1.5zM947.6 676.7h1v1h-1zM898.9 645.5h2v2h-2zM904.9 636.9h1v1h-1zM908.0 632.7h2v2h-2zM968.1 650.5h2v2h-2zM953.1 677.4h1v1h-1zM909.4 627.2h2v2h-2zM958.3 667.7h1v1h-1zM969.1 651.3h1v1h-1zM960.5 667.3h1.5v1.5h-1.5zM911.4 627.8h1.5v1.5h-1.5zM911.4 625.8h1v1h-1zM967.5 650.8h1v1h-1z" fill="#004818"/><path d="M1125.4 107.9h1.5v1.5h-1.5zM1126.5 109.8h1v1h-1zM1135.1 111.9h1v1h-1zM1134.8 103.5h1.5v1.5h-1.5zM1134.1 110.9h1v1h-1zM920.4 645.6h1v1h-1zM929.2 655.5h2v2h-2zM942.8 642.2h2v2h-2zM917.2 623.8h1v1h-1zM933.9 655.1h2v2h-2zM946.2 647.0h1v1h-1zM937.2 657.3h2v2h-2zM943.3 642.5h1.5v1.5h-1.5zM933.5 645.1h1.5v1.5h-1.5zM945.9 657.1h1v1h-1zM935.9 658.9h1.5v1.5h-1.5zM921.5 647.3h1v1h-1zM940.6 636.0h2v2h-2zM947.2 638.6h1.5v1.5h-1.5zM941.4 651.2h1v1h-1zM908.7 637.7h2v2h-2zM939.2 644.4h1v1h-1zM935.6 657.8h2v2h-2zM935.0 650.7h1.5v1.5h-1.5zM937.0 642.0h2v2h-2zM953.3 641.8h1v1h-1zM941.5 637.8h1v1h-1zM929.8 649.2h1v1h-1zM927.4 639.0h1v1h-1zM939.2 639.2h2v2h-2zM909.5 631.5h2v2h-2zM934.2 633.7h1v1h-1zM940.4 662.5h2v2h-2zM937.3 646.5h1v1h-1zM928.3 654.5h1v1h-1zM908.2 637.9h1.5v1.5h-1.5zM926.5 658.1h1v1h-1zM911.6 632.0h1v1h-1zM938.8 646.3h1v1h-1zM926.4 652.7h2v2h-2zM926.2 657.0h1v1h-1zM913.7 627.4h1.5v1.5h-1.5zM914.9 621.7h2v2h-2zM927.0 659.9h1v1h-1zM932.3 649.5h1v1h-1zM902.9 644.7h1v1h-1zM936.0 632.3h1.5v1.5h-1.5zM928.9 660.4h1.5v1.5h-1.5zM934.3 656.8h1.5v1.5h-1.5zM938.2 650.6h1v1h-1zM935.4 649.2h1.5v1.5h-1.5zM945.0 641.8h1.5v1.5h-1.5zM933.4 655.3h1.5v1.5h-1.5zM943.1 641.4h1v1h-1zM945.0 638.5h1.5v1.5h-1.5zM938.8 640.0h1.5v1.5h-1.5zM946.9 650.7h1v1h-1zM929.4 669.3h2v2h-2z" fill="#007830"/><path d="M1140.7 110.5h1v1h-1zM1151.3 104.9h1v1h-1zM1139.2 102.7h1.5v1.5h-1.5zM1151.3 110.6h1v1h-1zM1152.4 110.9h1v1h-1zM1141.4 103.6h1v1h-1zM1152.4 107.6h1v1h-1zM916.2 637.2h1v1h-1zM918.7 624.7h2v2h-2zM922.9 643.9h1v1h-1zM932.2 632.7h1v1h-1zM915.6 625.4h1.5v1.5h-1.5zM936.5 633.2h1v1h-1zM934.0 636.3h2v2h-2zM919.6 630.5h1v1h-1zM915.9 631.4h2v2h-2zM930.7 632.0h2v2h-2zM910.7 644.4h2v2h-2zM909.2 639.6h1.5v1.5h-1.5zM920.8 631.9h2v2h-2zM923.2 647.9h1v1h-1zM916.3 626.7h1.5v1.5h-1.5zM938.8 644.4h1.5v1.5h-1.5zM908.1 640.6h1.5v1.5h-1.5zM922.7 648.0h1v1h-1zM935.0 637.7h1.5v1.5h-1.5zM926.9 629.4h1v1h-1zM924.1 629.6h1v1h-1zM905.1 644.7h1.5v1.5h-1.5zM929.0 629.1h1v1h-1zM911.0 631.9h1v1h-1zM912.5 642.9h2v2h-2zM917.2 621.5h2v2h-2zM925.9 648.4h2v2h-2zM926.2 633.7h1v1h-1zM936.7 639.6h1v1h-1zM918.9 623.2h2v2h-2zM923.9 626.5h2v2h-2zM924.9 646.9h1v1h-1zM912.6 642.3h1v1h-1zM934.9 638.9h1v1h-1zM918.1 648.3h1v1h-1zM928.9 645.4h1v1h-1zM930.3 636.9h2v2h-2zM909.9 638.2h1v1h-1zM917.1 639.6h1v1h-1zM927.6 627.5h1v1h-1zM937.1 641.6h1v1h-1zM912.2 630.2h1v1h-1zM933.5 640.6h1.5v1.5h-1.5zM912.9 633.5h2v2h-2zM918.1 636.0h1v1h-1zM931.7 648.2h1v1h-1zM920.1 657.0h1v1h-1zM932.4 637.5h1v1h-1zM921.1 652.5h1v1h-1zM934.8 641.3h1.5v1.5h-1.5zM935.1 639.1h1.5v1.5h-1.5zM935.2 631.1h1v1h-1zM911.0 646.0h1.5v1.5h-1.5zM925.1 630.0h1v1h-1zM930.5 652.8h1.5v1.5h-1.5zM923.5 664.0h2v2h-2zM921.1 648.5h2v2h-2zM922.3 634.5h1v1h-1zM919.5 649.7h1.5v1.5h-1.5z" fill="#006048"/><path d="M1123.7 104.1h1.5v1.5h-1.5zM937.4 636.2h1.5v1.5h-1.5zM939.7 655.1h1v1h-1zM929.6 654.6h1.5v1.5h-1.5zM956.3 648.1h1v1h-1zM930.0 648.9h1v1h-1zM941.9 643.8h1.5v1.5h-1.5zM948.3 639.6h2v2h-2zM933.4 652.0h1.5v1.5h-1.5zM931.4 653.2h1v1h-1zM942.4 638.9h1v1h-1zM941.3 655.0h1v1h-1zM927.9 666.9h1v1h-1zM938.6 643.0h1.5v1.5h-1.5zM944.4 637.9h1v1h-1zM944.9 650.8h1v1h-1zM942.2 647.4h1v1h-1zM944.9 650.0h2v2h-2zM932.9 638.7h2v2h-2zM926.3 632.9h1v1h-1zM943.8 636.8h1v1h-1zM933.3 658.0h1.5v1.5h-1.5zM931.7 646.8h1.5v1.5h-1.5zM937.8 639.0h1v1h-1zM949.8 652.0h2v2h-2zM939.9 634.4h2v2h-2zM936.9 638.2h1v1h-1zM943.5 638.4h1v1h-1zM948.1 651.9h2v2h-2zM930.7 649.5h2v2h-2zM939.1 649.1h1v1h-1zM935.7 674.5h1v1h-1zM938.0 649.9h1v1h-1zM949.0 658.2h2v2h-2zM940.3 651.1h1v1h-1zM929.1 637.8h1v1h-1zM951.7 649.1h1.5v1.5h-1.5z" fill="#009030"/><path d="M1153.8 107.0h1.5v1.5h-1.5zM1145.6 111.1h1.5v1.5h-1.5zM1149.6 103.4h1v1h-1zM1142.0 111.8h1v1h-1zM920.6 641.8h1v1h-1zM914.1 643.1h2v2h-2zM909.4 640.3h2v2h-2zM919.6 623.1h1v1h-1zM920.6 646.4h1v1h-1z" fill="#004860"/><path d="M1140.2 104.9h1v1h-1zM928.5 629.7h2v2h-2zM913.2 633.2h2v2h-2zM925.6 653.8h2v2h-2zM933.8 643.1h1.5v1.5h-1.5zM940.7 640.1h1v1h-1zM932.6 637.1h1v1h-1zM912.4 652.1h2v2h-2zM916.2 657.7h1v1h-1zM926.0 628.4h1.5v1.5h-1.5zM910.4 645.8h1v1h-1zM917.1 643.7h2v2h-2zM908.6 658.3h1v1h-1zM927.7 629.9h1v1h-1zM911.6 631.8h2v2h-2zM928.3 627.3h2v2h-2zM923.3 625.9h1v1h-1zM932.1 641.7h1v1h-1zM914.6 658.7h1v1h-1zM902.4 649.6h1v1h-1zM906.4 658.3h1.5v1.5h-1.5zM919.0 638.7h1.5v1.5h-1.5zM929.0 627.7h1v1h-1zM922.8 645.8h1v1h-1zM926.4 645.7h2v2h-2zM913.5 633.4h1.5v1.5h-1.5zM921.4 646.8h1v1h-1zM939.1 634.6h1v1h-1zM934.4 635.8h1v1h-1zM929.2 628.2h1v1h-1zM929.4 643.8h1v1h-1zM932.9 630.4h1v1h-1zM918.7 635.0h1v1h-1zM929.5 653.6h1v1h-1zM920.9 644.6h2v2h-2zM910.6 640.2h1.5v1.5h-1.5zM935.6 643.5h1v1h-1zM920.2 641.9h2v2h-2zM926.7 633.8h1v1h-1zM914.9 642.8h1.5v1.5h-1.5zM930.8 643.6h1v1h-1zM911.2 649.3h1v1h-1zM933.0 650.8h1v1h-1zM913.7 629.3h1.5v1.5h-1.5zM911.4 660.0h2v2h-2zM925.0 655.5h1v1h-1zM933.5 634.6h1.5v1.5h-1.5zM913.0 634.6h1v1h-1zM925.4 643.8h1v1h-1zM932.2 641.4h1v1h-1zM919.1 629.4h1.5v1.5h-1.5zM923.9 638.6h2v2h-2zM925.5 627.0h1v1h-1zM921.7 632.0h1.5v1.5h-1.5zM924.6 640.5h1v1h-1zM918.0 644.7h1.5v1.5h-1.5zM921.9 627.2h1.5v1.5h-1.5zM928.7 658.5h1.5v1.5h-1.5z" fill="#007848"/><path d="M1111.4 107.8h1.5v1.5h-1.5zM1104.9 102.6h1v1h-1z" fill="#004800"/><path d="M1093.6 131.7h1v1h-1zM1096.3 128.1h1.5v1.5h-1.5z" fill="#1e8228"/><path d="M1109.3 111.8h1v1h-1zM1101.3 131.1h1.5v1.5h-1.5z" fill="#0a6414"/><path d="M1101.4 128.5h1.5v1.5h-1.5zM1100.8 118.6h1.5v1.5h-1.5z" fill="#0a6e1e"/><path d="M1106.3 110.2h1v1h-1zM1105.0 123.9h1.5v1.5h-1.5z" fill="#1e6414"/><path d="M1105.6 130.7h1.5v1.5h-1.5zM1310.2 523.5h1v1h-1z" fill="#0a6428"/><path d="M1109.2 122.4h1v1h-1zM1109.9 121.7h1v1h-1zM1109.4 116.7h1v1h-1z" fill="#1e6e28"/><path d="M1105.9 113.9h1.5v1.5h-1.5zM1111.2 119.1h1.5v1.5h-1.5z" fill="#146e28"/><path d="M1101.0 118.0h1.5v1.5h-1.5zM1098.9 122.4h1.5v1.5h-1.5z" fill="#1e6428"/><path d="M1103.4 112.6h1v1h-1zM1109.4 129.3h1v1h-1z" fill="#1e641e"/><path d="M1095.6 130.2h1.5v1.5h-1.5zM1109.2 109.3h1v1h-1z" fill="#148214"/><path d="M1112.0 120.0h1v1h-1z" fill="#148228"/><path d="M1101.7 128.0h1v1h-1zM1095.9 128.5h1v1h-1z" fill="#1e821e"/><path d="M1111.8 130.0h1.5v1.5h-1.5z" fill="#0a6e28"/><path d="M1094.6 130.1h1.5v1.5h-1.5z" fill="#0a6e14"/><path d="M1102.8 131.9h1v1h-1zM1104.6 115.2h1v1h-1zM1105.1 119.1h1.5v1.5h-1.5z" fill="#14641e"/><path d="M1105.8 112.0h1v1h-1zM1107.7 126.5h1v1h-1zM1105.1 115.4h1.5v1.5h-1.5z" fill="#14821e"/><path d="M1098.9 123.0h1v1h-1z" fill="#1e8214"/><path d="M1095.7 130.3h1v1h-1z" fill="#1e6e1e"/><path d="M1097.7 123.0h1.5v1.5h-1.5z" fill="#0a8214"/><path d="M1103.8 118.2h1.5v1.5h-1.5z" fill="#146428"/><path d="M1111.3 123.2h1v1h-1zM1309.0 514.5h1v1h-1zM1310.7 525.7h1v1h-1z" fill="#0a641e"/><path d="M1140.7 111.4h1v1h-1zM1148.5 120.4h1v1h-1zM1123.0 110.0h1.5v1.5h-1.5zM1119.7 113.1h1v1h-1zM1116.7 108.4h1.5v1.5h-1.5zM1136.9 133.8h1v1h-1zM1129.9 125.3h1.5v1.5h-1.5zM1133.8 132.6h1v1h-1zM1125.4 108.6h1.5v1.5h-1.5zM1122.7 118.7h1v1h-1zM1122.8 129.9h1v1h-1zM1118.5 123.5h1.5v1.5h-1.5zM1134.9 109.6h1v1h-1zM1152.9 114.0h1v1h-1zM1137.2 118.0h1v1h-1zM1138.7 117.3h1.5v1.5h-1.5zM1147.1 122.8h1v1h-1zM1153.7 127.6h1.5v1.5h-1.5zM1115.2 133.1h1.5v1.5h-1.5zM1149.6 108.0h1v1h-1zM1150.2 115.2h1.5v1.5h-1.5zM1119.0 117.9h1.5v1.5h-1.5zM1138.2 125.1h1v1h-1zM1114.9 112.6h1v1h-1zM1112.1 128.8h1v1h-1zM1137.6 131.1h1v1h-1zM1104.3 111.3h1v1h-1zM1116.8 134.5h1v1h-1zM1149.0 114.1h1v1h-1zM1141.7 122.9h1.5v1.5h-1.5zM1121.7 124.1h1v1h-1zM1131.6 109.9h1v1h-1zM1142.7 107.3h1v1h-1zM1130.3 107.5h1v1h-1zM1148.3 116.7h1v1h-1zM1117.7 125.1h1v1h-1zM1124.7 108.1h1v1h-1zM1116.0 137.5h1v1h-1zM1150.6 110.9h1.5v1.5h-1.5zM1110.2 122.4h1v1h-1zM1114.8 111.2h1.5v1.5h-1.5zM1146.0 130.1h1v1h-1zM1109.8 125.8h1.5v1.5h-1.5zM1105.7 133.0h1.5v1.5h-1.5zM1143.8 128.0h1v1h-1zM1148.8 133.0h1v1h-1zM1144.9 123.4h1v1h-1zM1132.5 115.0h1v1h-1z" fill="#dfe8fa"/><path d="M1116.8 127.8h1v1h-1zM1104.7 123.1h1v1h-1zM1110.0 117.7h1v1h-1zM1112.9 109.4h1v1h-1zM1138.6 115.3h1.5v1.5h-1.5zM1122.9 114.6h1v1h-1zM1125.4 108.7h1v1h-1zM1137.2 111.7h1v1h-1zM1149.1 122.8h1v1h-1zM1131.1 111.7h1.5v1.5h-1.5zM1141.7 136.4h1.5v1.5h-1.5zM1132.3 127.6h1.5v1.5h-1.5zM1127.7 109.8h1.5v1.5h-1.5zM1133.9 120.1h1v1h-1zM1117.4 110.1h1.5v1.5h-1.5zM1108.3 120.5h1v1h-1zM1154.6 122.2h1v1h-1zM1146.6 131.3h1v1h-1zM1110.0 107.7h1v1h-1zM1118.2 121.7h1v1h-1zM1140.0 120.0h1.5v1.5h-1.5zM1136.4 109.5h1v1h-1zM1151.4 126.4h1v1h-1zM1142.5 117.9h1v1h-1zM1104.3 126.1h1v1h-1zM1137.6 119.0h1v1h-1zM1107.2 118.1h1.5v1.5h-1.5zM1123.5 115.0h1v1h-1zM1120.0 112.6h1.5v1.5h-1.5zM1126.7 135.7h1v1h-1zM1151.7 116.1h1v1h-1zM1137.2 114.8h1v1h-1zM1130.6 110.3h1v1h-1zM1150.4 118.3h1v1h-1zM1121.9 108.9h1v1h-1zM1117.6 122.3h1.5v1.5h-1.5zM1148.3 112.2h1v1h-1zM1118.5 115.3h1.5v1.5h-1.5zM1139.7 118.6h1v1h-1zM1116.8 118.7h1.5v1.5h-1.5zM1111.2 116.9h1v1h-1zM1154.7 114.0h1.5v1.5h-1.5zM1119.8 107.8h1v1h-1zM1140.5 108.2h1.5v1.5h-1.5zM1126.8 110.5h1v1h-1zM1150.6 111.0h1.5v1.5h-1.5zM1110.0 118.7h1v1h-1zM1115.9 109.4h1v1h-1zM1118.2 117.7h1.5v1.5h-1.5zM1137.7 114.9h1.5v1.5h-1.5zM1136.4 119.4h1.5v1.5h-1.5zM1152.2 108.6h1.5v1.5h-1.5zM1118.6 116.6h1v1h-1zM1117.4 125.4h1v1h-1zM1135.3 117.1h1v1h-1zM1149.5 113.7h1.5v1.5h-1.5zM1123.9 108.4h1v1h-1zM1144.1 107.8h1v1h-1zM1113.3 109.1h1.5v1.5h-1.5zM1143.9 107.3h1v1h-1zM1121.5 119.8h1v1h-1zM1148.9 125.8h1v1h-1zM1114.7 108.7h1v1h-1zM1138.8 130.4h1v1h-1zM1105.9 114.2h1.5v1.5h-1.5zM1125.5 131.0h1v1h-1zM1112.2 108.9h1v1h-1zM1115.8 125.0h1v1h-1zM1110.1 134.3h1.5v1.5h-1.5zM1153.8 124.4h1v1h-1zM1135.7 124.8h1v1h-1zM1138.8 108.7h1v1h-1zM1117.1 131.5h1v1h-1zM1110.0 112.3h1v1h-1zM1123.1 128.9h1.5v1.5h-1.5zM1150.3 122.8h1v1h-1zM1130.9 119.1h1.5v1.5h-1.5zM1116.7 110.1h1v1h-1zM1107.9 118.1h1.5v1.5h-1.5zM1145.0 112.8h1v1h-1zM1135.4 113.0h1v1h-1zM1141.6 109.2h1v1h-1zM1116.3 113.5h1v1h-1zM1151.9 121.1h1v1h-1zM1129.2 120.6h1v1h-1zM1132.9 109.7h1.5v1.5h-1.5zM1121.6 112.0h1.5v1.5h-1.5zM1074.1 156.2h1v1h-1zM1079.8 159.4h1v1h-1zM1076.3 149.3h1v1h-1zM1084.0 140.3h1v1h-1zM1080.7 159.4h1v1h-1zM1077.2 155.0h1v1h-1zM1076.8 152.8h1v1h-1zM1076.1 142.8h1v1h-1zM1088.8 135.7h1v1h-1zM1083.8 141.2h1v1h-1zM1078.9 143.4h1v1h-1zM1079.8 152.2h1v1h-1zM1083.4 149.5h1v1h-1zM1074.6 155.5h1v1h-1zM1078.5 159.3h1v1h-1zM1077.6 156.6h1v1h-1zM1079.3 159.6h1v1h-1zM1077.1 150.0h1v1h-1zM1075.2 157.3h1v1h-1zM1087.2 137.3h1v1h-1zM1077.3 140.6h1v1h-1zM1074.4 155.1h1v1h-1zM1081.4 135.1h1v1h-1z" fill="#9db9f0"/><path d="M1087.0 140.5h1v1h-1zM1084.7 137.5h1v1h-1zM1084.7 136.0h1v1h-1zM1081.1 158.9h1v1h-1zM1075.9 143.8h1v1h-1zM1074.1 158.4h1v1h-1zM1080.1 159.0h1v1h-1zM1080.4 151.7h1v1h-1zM1086.0 141.2h1v1h-1zM1085.5 144.3h1v1h-1zM1086.3 135.1h1v1h-1zM1079.7 158.4h1v1h-1zM1086.4 144.3h1v1h-1zM1080.4 147.0h1v1h-1zM1082.5 147.6h1v1h-1zM1083.2 144.5h1v1h-1zM1081.7 141.6h1v1h-1zM1077.6 138.5h1v1h-1zM1080.8 135.6h1v1h-1zM1086.4 139.2h1v1h-1zM1080.7 155.7h1v1h-1zM1082.9 150.3h1v1h-1zM1074.7 138.6h1v1h-1zM1158.8 193.2h1v1h-1zM1159.0 176.3h1v1h-1zM1153.0 221.9h1v1h-1zM1155.9 196.9h1v1h-1zM1163.0 177.3h1v1h-1zM1163.9 163.0h1v1h-1zM1163.8 178.2h1v1h-1zM1163.0 157.8h1v1h-1zM1161.4 183.4h1v1h-1zM1162.5 159.8h1v1h-1zM1161.4 144.1h1v1h-1zM1154.6 227.8h1v1h-1zM1153.2 227.5h1v1h-1zM1156.4 224.5h1v1h-1zM1162.1 191.0h1v1h-1zM1158.6 160.1h1v1h-1zM1151.3 231.3h1v1h-1zM1158.7 200.9h1v1h-1zM1160.9 164.2h1v1h-1zM1152.6 219.1h1v1h-1zM1155.8 202.8h1v1h-1zM1162.3 176.4h1v1h-1zM1163.0 174.5h1v1h-1zM1157.3 222.9h1v1h-1zM1159.5 161.3h1v1h-1zM1158.5 212.5h1v1h-1zM1161.2 165.3h1v1h-1zM1159.6 188.4h1v1h-1zM1162.9 184.5h1v1h-1zM1158.7 202.4h1v1h-1zM1158.5 181.7h1v1h-1zM1160.7 168.9h1v1h-1zM1153.4 229.2h1v1h-1zM1162.8 141.2h1v1h-1zM1155.8 203.9h1v1h-1zM1152.9 235.0h1v1h-1zM1160.5 194.0h1v1h-1zM1161.1 166.0h1v1h-1zM1152.0 224.2h1v1h-1zM1154.5 215.1h1v1h-1zM1164.5 167.5h1v1h-1zM1157.3 225.4h1v1h-1zM1163.5 172.3h1v1h-1zM1159.2 184.2h1v1h-1zM1151.0 232.9h1v1h-1zM1158.7 191.5h1v1h-1zM1159.1 152.1h1v1h-1zM1152.5 223.5h1v1h-1z" fill="#601004"/><path d="M1078.9 152.4h1v1h-1zM1075.0 151.0h1v1h-1zM1078.4 157.2h1v1h-1zM1077.2 142.3h1v1h-1zM1080.3 144.0h1v1h-1zM1078.3 139.3h1v1h-1zM1078.5 147.9h1v1h-1zM1087.6 137.1h1v1h-1zM1088.0 136.5h1v1h-1zM1088.1 137.4h1v1h-1zM1081.1 147.1h1v1h-1zM1080.4 147.3h1v1h-1zM1084.3 149.0h1v1h-1zM1081.3 151.7h1v1h-1zM1080.7 134.8h1v1h-1zM1079.8 157.0h1v1h-1zM1082.5 140.5h1v1h-1zM1078.5 155.2h1v1h-1zM1076.6 157.3h1v1h-1z" fill="#5a5a14"/><path d="M1074.6 142.5h1v1h-1zM1085.1 141.2h1v1h-1zM1074.8 147.8h1v1h-1zM1076.6 153.2h1v1h-1zM1086.4 143.4h1v1h-1zM1082.0 144.6h1v1h-1zM1086.5 142.2h1v1h-1zM1079.6 138.8h1v1h-1zM1087.6 137.4h1v1h-1zM1082.1 149.8h1v1h-1zM1075.9 158.8h1v1h-1zM1074.1 150.4h1v1h-1zM1077.7 148.5h1v1h-1zM1080.4 141.3h1v1h-1zM1081.0 139.1h1v1h-1zM1085.5 135.6h1v1h-1zM1086.4 142.9h1v1h-1zM1076.1 134.3h1v1h-1zM1156.8 212.4h1v1h-1zM1158.2 216.0h1v1h-1zM1159.5 200.2h1v1h-1zM1153.0 216.3h1v1h-1zM1159.5 165.0h1v1h-1zM1162.9 185.5h1v1h-1zM1151.3 227.1h1v1h-1zM1161.0 192.8h1v1h-1zM1160.4 203.8h1v1h-1zM1158.3 191.9h1v1h-1zM1159.0 148.3h1v1h-1zM1153.3 213.0h1v1h-1zM1155.7 227.1h1v1h-1zM1156.4 226.7h1v1h-1zM1158.1 214.8h1v1h-1zM1159.8 180.4h1v1h-1zM1153.5 229.1h1v1h-1zM1156.2 201.5h1v1h-1zM1156.6 207.9h1v1h-1zM1159.2 168.9h1v1h-1zM1156.8 190.9h1v1h-1zM1153.9 227.5h1v1h-1zM1161.9 182.3h1v1h-1zM1156.2 203.7h1v1h-1zM1152.7 220.3h1v1h-1zM1162.1 185.7h1v1h-1zM1161.7 174.8h1v1h-1zM1161.0 167.1h1v1h-1zM1157.8 200.9h1v1h-1zM1158.3 181.8h1v1h-1zM1154.4 229.0h1v1h-1zM1163.3 150.5h1v1h-1zM1158.2 185.8h1v1h-1zM1160.0 199.6h1v1h-1zM1159.0 201.1h1v1h-1zM1159.9 141.5h1v1h-1zM1155.0 232.6h1v1h-1zM1160.1 178.7h1v1h-1zM1159.3 153.1h1v1h-1zM1154.9 231.9h1v1h-1zM1162.8 144.9h1v1h-1zM1156.0 231.9h1v1h-1zM1156.7 216.7h1v1h-1zM1154.9 204.4h1v1h-1zM1155.4 224.0h1v1h-1zM1163.7 169.9h1v1h-1zM882.0 614.9h1.5v1.5h-1.5zM904.2 638.3h1.5v1.5h-1.5zM904.7 623.4h1v1h-1zM880.1 629.5h1.5v1.5h-1.5zM900.3 640.7h1.5v1.5h-1.5zM898.6 634.9h1.5v1.5h-1.5zM890.8 644.9h1.5v1.5h-1.5zM892.1 616.3h1.5v1.5h-1.5zM902.9 635.1h1.5v1.5h-1.5zM896.1 633.6h1.5v1.5h-1.5zM884.1 649.7h1v1h-1zM887.8 628.3h1.5v1.5h-1.5zM903.2 642.9h1v1h-1zM900.8 616.5h1v1h-1z" fill="#781408"/><path d="M1158.3 140.7h1v1h-1zM1158.1 207.1h1v1h-1zM1159.2 148.5h1v1h-1zM1154.2 212.4h1v1h-1zM1153.2 216.1h1v1h-1zM1161.8 182.0h1v1h-1zM1158.4 212.4h1v1h-1zM1158.4 191.1h1v1h-1zM1162.6 150.0h1v1h-1zM1156.3 198.4h1v1h-1zM1155.0 211.5h1v1h-1zM1157.9 201.6h1v1h-1zM1154.8 221.8h1v1h-1zM1158.9 150.1h1v1h-1zM1161.9 155.0h1v1h-1zM1159.2 145.9h1v1h-1zM1152.9 221.0h1v1h-1zM1163.0 175.1h1v1h-1zM1161.3 144.8h1v1h-1zM1159.4 162.8h1v1h-1zM1158.8 160.2h1v1h-1zM1160.2 147.1h1v1h-1zM1159.3 149.3h1v1h-1zM1155.5 203.1h1v1h-1zM1162.7 153.8h1v1h-1zM1158.8 210.3h1v1h-1zM1162.6 182.7h1v1h-1zM1161.0 158.3h1v1h-1zM1152.5 218.7h1v1h-1zM1151.0 234.9h1v1h-1zM1157.8 221.7h1v1h-1zM1161.1 179.9h1v1h-1zM1160.5 182.4h1v1h-1zM1161.2 181.4h1v1h-1zM1157.0 194.2h1v1h-1zM1157.4 201.1h1v1h-1zM1158.0 199.3h1v1h-1zM1152.9 225.5h1v1h-1zM1161.4 176.1h1v1h-1zM1160.0 184.6h1v1h-1z" fill="#96280a"/><path d="M1153.6 229.8h1v1h-1zM1156.8 208.1h1v1h-1zM1156.1 197.6h1v1h-1zM1153.4 213.7h1v1h-1zM1157.2 198.5h1v1h-1zM1162.2 142.3h1v1h-1zM1159.3 189.4h1v1h-1zM1155.4 203.7h1v1h-1zM1159.5 170.8h1v1h-1zM1163.7 155.5h1v1h-1zM1160.1 166.0h1v1h-1zM1151.4 234.0h1v1h-1zM1158.3 202.3h1v1h-1zM1158.5 153.5h1v1h-1zM1158.6 162.3h1v1h-1zM1157.7 186.3h1v1h-1zM1158.3 148.9h1v1h-1zM1156.7 227.7h1v1h-1zM1161.2 193.5h1v1h-1zM1161.7 146.5h1v1h-1zM1157.7 191.0h1v1h-1zM1159.7 146.3h1v1h-1zM1158.3 197.6h1v1h-1zM1158.3 180.2h1v1h-1zM1152.9 216.0h1v1h-1zM1157.9 194.8h1v1h-1z" fill="#404010"/><path d="M897.4 638.8h1v1h-1zM910.5 617.6h1v1h-1zM891.7 642.5h2v2h-2zM895.2 642.4h1.5v1.5h-1.5zM905.2 618.9h1.5v1.5h-1.5zM906.8 617.2h1v1h-1zM895.4 640.4h1.5v1.5h-1.5zM899.1 637.6h1.5v1.5h-1.5zM908.1 615.2h1v1h-1z" fill="#303000"/><path d="M913.1 621.2h1v1h-1zM960.1 675.8h1.5v1.5h-1.5zM912.3 621.0h2v2h-2zM900.8 644.4h2v2h-2zM908.5 621.9h2v2h-2zM912.3 620.1h1v1h-1zM968.0 672.0h1v1h-1zM977.8 657.0h1v1h-1zM969.3 665.7h2v2h-2zM901.5 638.6h1v1h-1zM905.6 631.0h2v2h-2zM971.8 665.2h1.5v1.5h-1.5zM907.9 624.9h1.5v1.5h-1.5zM899.1 641.3h1.5v1.5h-1.5zM908.8 628.3h1.5v1.5h-1.5zM966.2 671.1h1v1h-1zM911.7 624.4h1v1h-1zM978.5 657.2h1.5v1.5h-1.5z" fill="#186018"/><path d="M902.4 623.7h1v1h-1zM893.6 647.0h1v1h-1zM899.9 629.5h2v2h-2zM903.5 626.6h1.5v1.5h-1.5zM904.8 621.3h2v2h-2zM906.4 621.3h1v1h-1zM902.1 627.6h1v1h-1zM908.3 620.8h1v1h-1zM901.4 630.4h2v2h-2z" fill="#306000"/><path d="M984.0 666.1h2v2h-2zM978.1 677.7h1v1h-1zM984.9 667.0h1v1h-1z" fill="#c01800"/><path d="M918.1 633.6h1.5v1.5h-1.5zM939.1 633.3h1v1h-1zM927.6 640.2h1v1h-1zM938.9 637.1h2v2h-2zM936.1 646.2h1v1h-1zM931.1 633.3h1.5v1.5h-1.5zM931.1 634.3h1.5v1.5h-1.5zM935.4 642.2h1.5v1.5h-1.5zM935.1 636.1h1v1h-1zM920.7 631.2h1.5v1.5h-1.5zM930.0 644.4h1.5v1.5h-1.5zM933.4 642.8h1.5v1.5h-1.5zM934.0 638.8h1v1h-1zM924.4 650.9h1v1h-1zM925.9 636.4h1v1h-1zM924.4 655.1h1v1h-1zM929.2 648.3h1v1h-1zM935.5 633.7h2v2h-2zM920.3 640.3h2v2h-2zM935.6 638.7h1.5v1.5h-1.5zM920.7 631.0h2v2h-2zM935.6 639.9h1v1h-1zM938.4 639.0h1v1h-1zM931.0 647.9h2v2h-2zM929.5 654.6h1.5v1.5h-1.5zM920.6 644.9h2v2h-2zM917.8 659.7h1v1h-1zM933.6 630.4h2v2h-2z" fill="#009048"/><path d="M896.2 636.1h1v1h-1zM905.2 622.0h2v2h-2zM904.9 620.2h1v1h-1zM907.0 614.9h1v1h-1zM896.3 632.4h1v1h-1zM900.4 627.7h1v1h-1zM891.6 644.7h1.5v1.5h-1.5zM905.0 618.8h1v1h-1zM901.1 629.0h2v2h-2zM889.0 647.5h1v1h-1zM901.5 622.7h1v1h-1z" fill="#484800"/><path d="M969.3 672.4h1.5v1.5h-1.5zM972.6 658.8h1v1h-1zM976.8 665.5h1.5v1.5h-1.5zM972.1 665.9h1.5v1.5h-1.5zM960.5 674.5h1v1h-1zM972.2 664.4h1v1h-1zM970.1 662.5h2v2h-2zM973.2 663.7h1.5v1.5h-1.5zM977.2 660.6h2v2h-2zM971.3 662.3h1.5v1.5h-1.5zM981.5 657.7h1v1h-1zM978.1 657.9h1v1h-1zM970.7 673.9h1v1h-1zM977.4 659.5h1v1h-1zM974.9 666.7h2v2h-2zM975.1 656.0h1v1h-1zM973.9 655.0h1v1h-1zM965.2 668.7h2v2h-2zM965.8 680.8h2v2h-2z" fill="#189018"/><path d="M888.6 640.4h1v1h-1zM902.3 614.2h1v1h-1zM898.6 623.1h1v1h-1zM900.2 617.9h1.5v1.5h-1.5z" fill="#781800"/><path d="M891.4 638.0h1.5v1.5h-1.5zM891.3 637.1h2v2h-2zM901.2 622.8h1.5v1.5h-1.5z" fill="#604800"/><path d="M973.5 681.6h1v1h-1z" fill="#c06000"/><path d="M918.0 643.5h1.5v1.5h-1.5zM911.8 652.1h1.5v1.5h-1.5zM932.4 632.5h1v1h-1zM925.0 642.0h2v2h-2zM920.8 650.4h2v2h-2zM922.0 648.9h2v2h-2zM926.1 630.6h1v1h-1zM927.9 637.0h1v1h-1zM930.2 628.2h1v1h-1zM927.0 643.1h1.5v1.5h-1.5zM926.1 643.0h1v1h-1zM914.0 646.4h2v2h-2zM918.2 645.5h2v2h-2z" fill="#009060"/><path d="M966.7 676.2h2v2h-2zM971.3 668.6h2v2h-2zM976.9 663.6h1v1h-1zM974.8 657.7h1v1h-1zM975.6 666.1h1v1h-1zM973.5 670.5h1.5v1.5h-1.5zM973.0 664.0h1.5v1.5h-1.5zM973.8 669.5h1v1h-1zM976.1 658.6h2v2h-2zM975.2 660.1h2v2h-2zM977.6 663.4h2v2h-2zM978.1 657.8h1v1h-1z" fill="#18a818"/><path d="M915.9 629.6h1v1h-1zM918.6 628.6h2v2h-2zM928.0 628.4h1v1h-1zM921.0 655.1h1.5v1.5h-1.5zM926.2 641.9h1.5v1.5h-1.5zM917.9 637.5h1v1h-1zM913.2 633.8h1v1h-1zM920.6 625.8h1.5v1.5h-1.5zM931.2 631.9h1.5v1.5h-1.5zM910.8 639.4h1v1h-1zM908.2 650.1h1v1h-1zM910.8 644.8h1v1h-1zM909.5 640.9h1v1h-1zM916.5 628.2h1v1h-1zM908.3 659.5h1.5v1.5h-1.5zM917.9 652.6h1v1h-1zM927.2 629.1h2v2h-2zM915.0 633.6h2v2h-2zM921.7 634.4h1v1h-1zM918.3 622.6h1v1h-1zM924.9 626.1h1v1h-1zM921.3 627.0h1.5v1.5h-1.5zM919.2 622.4h2v2h-2zM935.6 631.6h1v1h-1zM904.4 646.8h1v1h-1zM923.6 630.6h2v2h-2zM928.5 632.9h1.5v1.5h-1.5zM921.3 637.4h1.5v1.5h-1.5zM928.0 629.0h2v2h-2zM928.2 635.3h1v1h-1zM920.2 624.0h2v2h-2z" fill="#007860"/><path d="M979.3 665.9h1v1h-1zM974.2 673.9h1v1h-1zM982.5 660.6h1v1h-1z" fill="#90c000"/><path d="M978.7 665.8h1v1h-1z" fill="#78c018"/><path d="M975.7 675.2h1v1h-1zM983.3 658.7h1v1h-1zM974.5 676.4h1v1h-1zM982.6 659.0h1v1h-1z" fill="#90a800"/><path d="M972.8 681.9h1v1h-1z" fill="#c07800"/><path d="M884.8 639.7h1.5v1.5h-1.5zM987.5 663.7h2v2h-2zM985.1 669.6h2v2h-2zM988.5 663.0h2v2h-2zM895.9 621.0h2v2h-2zM980.5 675.9h1v1h-1zM984.4 669.5h2v2h-2zM983.7 672.2h2v2h-2zM978.5 680.7h1.5v1.5h-1.5zM984.6 668.6h1.5v1.5h-1.5zM899.1 615.3h1v1h-1zM897.3 618.1h1v1h-1zM895.7 622.8h2v2h-2zM979.8 676.4h2v2h-2zM985.8 668.3h2v2h-2zM985.1 668.4h2v2h-2zM888.4 635.2h1v1h-1z" fill="#780000"/><path d="M895.1 628.0h1v1h-1zM901.3 617.1h2v2h-2zM891.0 633.3h1v1h-1zM893.9 627.9h1.5v1.5h-1.5zM902.5 616.3h1.5v1.5h-1.5zM893.4 629.6h1v1h-1zM902.8 612.3h1v1h-1zM899.2 619.8h1v1h-1zM902.4 612.2h2v2h-2z" fill="#601800"/><path d="M975.6 676.6h1v1h-1zM979.3 671.8h1.5v1.5h-1.5zM976.1 675.2h1.5v1.5h-1.5z" fill="#d86000"/><path d="M971.7 664.2h1v1h-1zM902.1 633.5h1v1h-1zM907.2 623.9h2v2h-2zM902.6 634.2h2v2h-2z" fill="#186000"/><path d="M972.4 683.8h1v1h-1zM982.7 667.2h1.5v1.5h-1.5zM978.4 671.8h1v1h-1z" fill="#904800"/><path d="M901.2 612.5h1.5v1.5h-1.5zM900.8 613.9h1v1h-1zM987.5 663.9h1.5v1.5h-1.5zM888.3 632.7h1v1h-1zM890.3 630.8h1.5v1.5h-1.5zM985.3 667.2h1v1h-1zM976.2 683.2h1v1h-1zM982.2 674.3h1v1h-1zM898.2 615.3h1v1h-1zM979.9 677.4h2v2h-2zM897.0 618.0h2v2h-2zM986.9 666.5h2v2h-2zM979.4 677.3h1v1h-1zM897.8 616.4h1v1h-1zM897.5 618.0h1v1h-1zM894.3 621.6h1.5v1.5h-1.5zM895.7 621.1h1.5v1.5h-1.5zM884.7 642.2h1v1h-1zM985.2 669.6h1.5v1.5h-1.5zM983.4 673.3h1.5v1.5h-1.5zM899.3 618.2h2v2h-2zM891.8 626.2h2v2h-2zM900.1 616.0h2v2h-2zM981.5 675.3h1.5v1.5h-1.5z" fill="#600000"/><path d="M904.6 627.9h1v1h-1zM900.6 633.2h2v2h-2zM895.3 649.9h1v1h-1zM908.3 625.1h1v1h-1zM905.3 631.3h2v2h-2zM907.8 622.6h2v2h-2zM897.1 644.0h2v2h-2z" fill="#184800"/><path d="M983.8 670.2h1.5v1.5h-1.5z" fill="#a80000"/><path d="M889.5 647.2h1v1h-1zM897.9 634.4h2v2h-2zM906.0 624.9h1v1h-1zM905.1 625.6h1v1h-1zM902.3 632.9h2v2h-2zM900.1 634.6h1.5v1.5h-1.5zM900.7 633.2h2v2h-2zM905.4 617.9h1v1h-1zM901.3 626.1h1v1h-1zM903.8 631.5h2v2h-2zM908.7 616.8h1v1h-1zM905.5 624.6h2v2h-2zM903.1 627.1h1v1h-1zM906.6 623.1h1.5v1.5h-1.5zM894.5 639.6h1.5v1.5h-1.5zM902.2 624.7h1.5v1.5h-1.5z" fill="#304800"/><path d="M900.9 617.3h1v1h-1zM894.0 632.1h1.5v1.5h-1.5zM903.0 614.8h1v1h-1zM901.8 618.6h1v1h-1zM904.4 614.9h1v1h-1zM901.2 624.6h1v1h-1zM901.0 623.9h1.5v1.5h-1.5zM896.1 628.2h1v1h-1zM894.7 631.0h1v1h-1z" fill="#603000"/><path d="M971.2 671.9h1.5v1.5h-1.5zM980.4 657.9h1.5v1.5h-1.5z" fill="#309018"/><path d="M981.8 658.5h2v2h-2zM974.6 670.9h2v2h-2z" fill="#489018"/><path d="M898.3 641.5h1v1h-1z" fill="#183018"/><path d="M963.6 671.9h2v2h-2zM973.7 669.2h1v1h-1zM975.3 665.7h1v1h-1zM970.0 670.4h2v2h-2zM970.0 670.2h2v2h-2zM969.4 665.8h2v2h-2zM976.5 659.7h2v2h-2zM976.5 658.0h1v1h-1zM966.1 683.1h1v1h-1zM975.0 655.2h1v1h-1zM969.7 670.7h2v2h-2zM970.1 665.4h1v1h-1zM972.7 669.3h2v2h-2zM975.4 661.3h1v1h-1zM968.2 673.1h2v2h-2zM973.3 663.3h1v1h-1zM970.9 671.4h1.5v1.5h-1.5zM967.2 667.3h1v1h-1zM980.3 657.7h1.5v1.5h-1.5zM972.7 657.8h1v1h-1zM960.7 676.8h1v1h-1zM976.0 657.3h2v2h-2zM967.6 674.1h1v1h-1zM970.7 666.9h1v1h-1zM978.7 660.7h2v2h-2z" fill="#187818"/><path d="M971.6 682.9h1.5v1.5h-1.5z" fill="#c09000"/><path d="M966.2 681.9h2v2h-2zM980.0 661.1h2v2h-2zM972.1 673.2h1v1h-1zM977.1 666.4h2v2h-2z" fill="#307818"/><path d="M981.7 666.7h1v1h-1zM979.4 671.1h1v1h-1z" fill="#a86000"/><path d="M969.3 660.6h1v1h-1zM971.6 662.8h2v2h-2z" fill="#00a818"/><path d="M987.6 661.7h1v1h-1zM981.2 672.4h1.5v1.5h-1.5zM980.2 673.4h1v1h-1z" fill="#a81800"/><path d="M980.9 664.0h1.5v1.5h-1.5zM976.0 671.1h1.5v1.5h-1.5zM981.9 660.8h1v1h-1z" fill="#78a800"/><path d="M980.7 667.6h1v1h-1z" fill="#a87800"/><path d="M981.5 668.5h1v1h-1zM983.8 665.3h1v1h-1z" fill="#903000"/><path d="M982.3 665.3h1.5v1.5h-1.5z" fill="#d87800"/><path d="M919.4 633.7h1v1h-1zM912.0 644.0h1.5v1.5h-1.5z" fill="#009078"/><path d="M908.0 618.4h2v2h-2zM906.0 624.2h1v1h-1zM906.6 623.5h1v1h-1zM907.2 623.7h1.5v1.5h-1.5z" fill="#304818"/><path d="M982.2 673.6h2v2h-2zM894.5 624.0h1v1h-1zM987.7 663.7h1v1h-1zM981.6 673.3h1v1h-1zM978.9 675.8h1v1h-1z" fill="#900000"/><path d="M897.8 622.3h1v1h-1zM899.2 620.5h2v2h-2zM901.2 616.9h1.5v1.5h-1.5zM903.0 615.4h1.5v1.5h-1.5z" fill="#481800"/><path d="M976.8 670.9h2v2h-2z" fill="#d8a800"/><path d="M978.2 675.8h1v1h-1zM977.9 676.1h1v1h-1zM978.7 674.3h1.5v1.5h-1.5z" fill="#c03000"/><path d="M970.7 673.5h1v1h-1zM898.5 636.9h2v2h-2zM967.9 677.3h1v1h-1zM909.0 616.1h1.5v1.5h-1.5z" fill="#306018"/><path d="M895.9 622.2h2v2h-2zM989.2 662.8h1v1h-1zM898.3 614.9h2v2h-2zM983.1 672.8h1.5v1.5h-1.5zM886.6 633.3h1v1h-1zM897.0 617.4h1v1h-1z" fill="#480000"/><path d="M969.8 682.5h1v1h-1z" fill="#787800"/><path d="M980.2 665.0h1v1h-1zM981.4 663.1h1.5v1.5h-1.5zM984.1 661.1h2v2h-2zM981.1 664.6h1.5v1.5h-1.5zM980.1 667.6h1v1h-1zM983.6 662.7h1.5v1.5h-1.5zM980.1 663.9h1v1h-1z" fill="#a89000"/><path d="M983.1 659.4h1v1h-1zM980.3 663.0h1v1h-1z" fill="#90d800"/><path d="M916.6 643.3h2v2h-2zM907.4 646.4h2v2h-2zM923.4 627.1h2v2h-2zM923.6 631.9h2v2h-2z" fill="#007878"/><path d="M978.4 662.4h1v1h-1zM976.3 660.7h2v2h-2zM977.3 658.7h2v2h-2zM977.4 666.2h1.5v1.5h-1.5z" fill="#30a818"/><path d="M984.4 663.0h1v1h-1zM974.4 679.9h1v1h-1zM982.3 667.4h2v2h-2z" fill="#c04800"/><path d="M907.4 619.3h2v2h-2z" fill="#484818"/><path d="M980.5 663.4h1v1h-1z" fill="#78a818"/><path d="M976.7 676.8h1.5v1.5h-1.5z" fill="#a84800"/><path d="M911.2 623.7h1.5v1.5h-1.5zM907.5 626.7h1v1h-1zM901.8 634.0h2v2h-2zM899.2 643.1h1v1h-1zM912.0 618.0h1v1h-1zM912.1 620.3h1v1h-1zM907.0 631.0h2v2h-2z" fill="#184818"/><path d="M898.2 632.2h1v1h-1zM900.9 617.4h1v1h-1zM897.9 622.8h1.5v1.5h-1.5zM904.6 619.9h1v1h-1zM898.0 635.8h1.5v1.5h-1.5zM902.7 617.1h2v2h-2zM898.6 624.0h1v1h-1zM899.5 622.2h2v2h-2zM905.7 622.7h1.5v1.5h-1.5zM901.5 617.1h2v2h-2zM893.5 637.5h1v1h-1z" fill="#483000"/><path d="M985.5 664.7h2v2h-2zM981.8 670.6h1v1h-1zM982.8 668.4h1.5v1.5h-1.5z" fill="#d81800"/><path d="M983.6 668.6h1v1h-1zM980.4 672.2h1v1h-1zM984.4 667.5h1.5v1.5h-1.5zM983.7 669.2h1v1h-1z" fill="#901800"/><path d="M984.2 661.5h1v1h-1z" fill="#907800"/><path d="M979.5 672.8h1v1h-1zM975.5 679.6h1.5v1.5h-1.5zM981.7 668.7h2v2h-2zM983.0 667.1h1v1h-1z" fill="#a83000"/><path d="M968.3 661.9h1v1h-1z" fill="#007800"/><path d="M971.6 678.2h1.5v1.5h-1.5z" fill="#787818"/><path d="M889.4 647.3h1.5v1.5h-1.5zM903.1 624.3h1v1h-1zM903.8 622.2h1v1h-1z" fill="#486000"/><path d="M978.2 668.4h2v2h-2zM980.7 663.5h1v1h-1z" fill="#909000"/><path d="M983.6 659.7h1v1h-1z" fill="#a8d800"/><path d="M976.3 679.0h2v2h-2zM979.8 673.2h2v2h-2z" fill="#d83000"/><path d="M982.4 660.7h2v2h-2z" fill="#a8a800"/><path d="M972.5 682.8h1v1h-1z" fill="#f06000"/><path d="M901.9 616.7h1.5v1.5h-1.5zM889.1 639.5h1v1h-1z" fill="#783000"/><path d="M979.2 665.9h2v2h-2z" fill="#789000"/><path d="M968.7 683.7h1v1h-1z" fill="#607818"/><path d="M979.8 662.1h1v1h-1z" fill="#487818"/><path d="M972.0 680.6h1.5v1.5h-1.5z" fill="#f0c000"/><path d="M977.9 676.0h1v1h-1z" fill="#f03000"/><path d="M974.1 669.0h1.5v1.5h-1.5z" fill="#18c018"/><path d="M973.4 671.6h1v1h-1z" fill="#30c018"/><path d="M892.7 647.9h1.5v1.5h-1.5zM895.6 632.9h1.5v1.5h-1.5zM899.3 620.3h1.5v1.5h-1.5zM892.3 636.8h1v1h-1zM893.9 632.1h1.5v1.5h-1.5zM881.3 613.7h1.5v1.5h-1.5zM904.2 616.7h1v1h-1zM882.5 626.7h1v1h-1zM899.2 618.3h1.5v1.5h-1.5zM893.5 646.9h1v1h-1zM883.9 642.7h1v1h-1zM880.8 627.3h1.5v1.5h-1.5zM884.9 636.0h1.5v1.5h-1.5zM897.9 618.4h1.5v1.5h-1.5zM887.0 634.2h1v1h-1zM892.3 632.0h1v1h-1zM898.1 634.4h1v1h-1z" fill="#5a1408"/><path d="M903.7 643.6h1v1h-1zM885.8 614.0h1.5v1.5h-1.5zM891.5 648.0h1.5v1.5h-1.5zM887.0 646.0h1.5v1.5h-1.5zM882.1 630.3h1.5v1.5h-1.5zM880.7 643.2h1v1h-1zM899.2 620.5h1v1h-1zM901.4 625.0h1.5v1.5h-1.5zM891.0 616.4h1.5v1.5h-1.5z" fill="#961408"/><path d="M1298.8 523.6h1v1h-1z" fill="#28781e"/><path d="M1292.9 522.9h1v1h-1zM1292.6 522.3h1v1h-1zM1302.7 531.2h1v1h-1zM1283.8 516.3h1v1h-1z" fill="#286428"/><path d="M1305.2 522.0h1v1h-1z" fill="#149628"/><path d="M1299.2 530.3h1v1h-1z" fill="#14643c"/><path d="M1272.4 520.7h1v1h-1zM1301.0 541.3h1v1h-1z" fill="#28643c"/><path d="M1308.1 514.3h1v1h-1z" fill="#14961e"/><path d="M1307.1 541.3h1v1h-1zM1297.8 519.0h1v1h-1z" fill="#0a7828"/><path d="M1313.6 535.7h1v1h-1z" fill="#14963c"/><path d="M1292.3 519.4h1v1h-1zM1266.0 526.9h1v1h-1zM1297.1 522.2h1v1h-1z" fill="#289628"/><path d="M1277.3 539.3h1v1h-1z" fill="#28783c"/><path d="M1302.4 529.8h1v1h-1z" fill="#0a963c"/><path d="M1273.3 539.8h1v1h-1z" fill="#147828"/><path d="M1290.1 521.2h1v1h-1z" fill="#14783c"/><rect x="872.5" y="92.5" width="471" height="595" fill="none" stroke="#dcdcfa" stroke-width="1"/><rect x="873.5" y="93.5" width="469" height="593" fill="none" stroke="#7878e0" stroke-width="1"/><rect x="875" y="95" width="466" height="590" fill="none" stroke="#4a4a96" stroke-width="2"/></g></svg>
<svg style="position:absolute;left:0px;top:0px;" width="1920" height="700"><defs><clipPath id="mapclip3"><rect x="336" y="93" width="1544" height="594.5"/></clipPath><linearGradient id="legend" x1="0" y1="0" x2="0" y2="1"><stop offset="0" stop-color="#f00a28"/><stop offset="0.08" stop-color="#f00a14"/><stop offset="0.15" stop-color="#f05a0a"/><stop offset="0.245" stop-color="#f0e60a"/><stop offset="0.34" stop-color="#8ce60a"/><stop offset="0.45" stop-color="#0adc0a"/><stop offset="0.585" stop-color="#00d296"/><stop offset="0.63" stop-color="#00d2d2"/><stop offset="0.7" stop-color="#0a82d2"/><stop offset="0.76" stop-color="#0a3cd2"/><stop offset="0.83" stop-color="#1400d2"/><stop offset="0.9" stop-color="#5000d2"/><stop offset="1" stop-color="#b400d2"/></linearGradient></defs><g clip-path="url(#mapclip3)"><path d="M1065 112.5 L1055.7 126.7 L1074.3 126.7 Z" fill="none" stroke="#e032c4" stroke-width="1.2"/><path d="M1065 126.7 v9.6 M1058.5 137.9 h13" stroke="#e032c4" stroke-width="1.200"/><circle cx="1065.3" cy="138.4" r="2.1" fill="none" stroke="#e032c4" stroke-width="1.1"/><path d="M1046.25 222.5 L1036.95 236.7 L1055.55 236.7 Z" fill="none" stroke="#e032c4" stroke-width="1.2"/><path d="M1046.25 236.7 v9.6 M1039.75 247.9 h13" stroke="#e032c4" stroke-width="1.200"/><circle cx="1046.55" cy="248.4" r="2.1" fill="none" stroke="#e032c4" stroke-width="1.1"/><path d="M1013 336.25 L1003.7 350.45 L1022.3 350.45 Z" fill="none" stroke="#e032c4" stroke-width="1.2"/><path d="M1013 350.45 v9.6 M1006.5 361.65 h13" stroke="#e032c4" stroke-width="1.200"/><circle cx="1013.3" cy="362.15" r="2.1" fill="none" stroke="#e032c4" stroke-width="1.1"/><path d="M959.25 472.5 L949.95 486.7 L968.55 486.7 Z" fill="none" stroke="#e032c4" stroke-width="1.2"/><path d="M959.25 486.7 v9.6 M952.75 497.9 h13" stroke="#e032c4" stroke-width="1.200"/><circle cx="959.55" cy="498.4" r="2.1" fill="none" stroke="#e032c4" stroke-width="1.1"/><path d="M908.1 567.3 L898.8 581.5 L917.4 581.5 Z" fill="none" stroke="#e032c4" stroke-width="1.2"/><path d="M908.1 581.5 v9.6 M901.6 592.7 h13" stroke="#e032c4" stroke-width="1.200"/><circle cx="908.4" cy="593.2" r="2.1" fill="none" stroke="#e032c4" stroke-width="1.1"/><path d="M847.2 660.3 L837.9 674.5 L856.5 674.5 Z" fill="none" stroke="#e032c4" stroke-width="1.2"/><path d="M847.2 674.5 v9.6 M840.7 685.7 h13" stroke="#e032c4" stroke-width="1.200"/><circle cx="847.5" cy="686.2" r="2.1" fill="none" stroke="#e032c4" stroke-width="1.1"/><path d="M1174.25 120 L1192.75 120 L1183.5 134.5 Z" fill="none" stroke="#e032c4" stroke-width="1.200"/><path d="M1183.5 134.5 v6.2 M1177 142.5 h13" stroke="#e032c4" stroke-width="1.200"/><circle cx="1183.8" cy="142.8" r="2.1" fill="none" stroke="#e032c4" stroke-width="1.1"/><path d="M1146.25 253 L1164.75 253 L1155.5 267.5 Z" fill="none" stroke="#e032c4" stroke-width="1.200"/><path d="M1155.5 267.5 v6.2 M1149 275.5 h13" stroke="#e032c4" stroke-width="1.200"/><circle cx="1155.8" cy="275.8" r="2.1" fill="none" stroke="#e032c4" stroke-width="1.1"/><path d="M1029.25 559.8 L1047.75 559.8 L1038.5 574.3 Z" fill="none" stroke="#e032c4" stroke-width="1.200"/><path d="M1038.5 574.3 v6.2 M1032 582.3 h13" stroke="#e032c4" stroke-width="1.200"/><circle cx="1038.8" cy="582.6" r="2.1" fill="none" stroke="#e032c4" stroke-width="1.1"/><path d="M992.25 629 L1010.75 629 L1001.5 643.5 Z" fill="none" stroke="#e032c4" stroke-width="1.200"/><path d="M1001.5 643.5 v6.2 M995 651.5 h13" stroke="#e032c4" stroke-width="1.200"/><circle cx="1001.8" cy="651.8" r="2.1" fill="none" stroke="#e032c4" stroke-width="1.1"/><path d="M1125.200 381.200 L1143 392.500 a4.200 4.200 0 0 1 -4.500 7 Z" fill="#f08c8c" stroke="#503c3c" stroke-width="0.800"/><path d="M1072.500 515 L1081 521 L1078 525 Z" fill="#a0dca0" stroke="#3c503c" stroke-width="0.700"/><rect x="1122.500" y="351.800" width="5" height="7.600" fill="#d4c383" stroke="#111" stroke-width="1.500"/><rect x="1076.500" y="586.500" width="10" height="9.500" fill="#d4c383" stroke="#000" stroke-width="2.400"/><rect x="1079" y="589" width="9" height="9" fill="none" stroke="#000" stroke-width="1.200"/><rect x="1836.400" y="478.500" width="8.800" height="8.800" fill="#d8c37c" stroke="#000" stroke-width="2.200"/><circle cx="1117.500" cy="612" r="2" fill="#6e6e60"/><circle cx="1639" cy="302" r="3.600" fill="none" stroke="#6e6e62" stroke-width="1.300"/><text x="1605.500" y="295.600" font-family="Liberation Sans" font-size="12" fill="#3c465a" stroke="#fff" stroke-width="2.400" stroke-linejoin="round" paint-order="stroke" textLength="66" lengthAdjust="spacingAndGlyphs">Stadsweide</text><rect x="1808.500" y="107.500" width="54" height="207" fill="url(#legend)" stroke="#000" stroke-width="1"/><rect x="1803.500" y="127" width="5" height="1" fill="#000"/><rect x="1803.500" y="152" width="5" height="1" fill="#000"/><rect x="1803.500" y="177" width="5" height="1" fill="#000"/><rect x="1803.500" y="202" width="5" height="1" fill="#000"/><rect x="1803.500" y="227" width="5" height="1" fill="#000"/><rect x="1803.500" y="252" width="5" height="1" fill="#000"/><rect x="1803.500" y="277" width="5" height="1" fill="#000"/><rect x="1803.500" y="302" width="5" height="1" fill="#000"/></g></svg>
<div class="t" style="left:1769.00px;top:122.82px;font-size:11.5px;line-height:14px;letter-spacing:-0.220px;">4.00</div>
<div class="t" style="left:1769.00px;top:147.72px;font-size:11.5px;line-height:14px;letter-spacing:-0.220px;">3.00</div>
<div class="t" style="left:1769.00px;top:172.62px;font-size:11.5px;line-height:14px;letter-spacing:-0.220px;">2.00</div>
<div class="t" style="left:1769.00px;top:197.52px;font-size:11.5px;line-height:14px;letter-spacing:-0.220px;">1.00</div>
<div class="t" style="left:1769.00px;top:222.42px;font-size:11.5px;line-height:14px;letter-spacing:-0.220px;">0.00</div>
<div class="t" style="left:1769.00px;top:247.32px;font-size:11.5px;line-height:14px;letter-spacing:-0.182px;">-1.00</div>
<div class="t" style="left:1769.00px;top:272.22px;font-size:11.5px;line-height:14px;letter-spacing:-0.182px;">-2.00</div>
<div class="t" style="left:1769.00px;top:297.12px;font-size:11.5px;line-height:14px;letter-spacing:-0.182px;">-3.00</div>
<div class="t" style="left:1055.00px;top:80.32px;font-size:11.5px;line-height:14px;letter-spacing:0.032px;">Zwaaikom Doesburg</div>
<div style="position:absolute;left:1883px;top:78px;width:37px;height:940px;background:#f5f5f5;border-left:1px solid #dadada;box-sizing:border-box"></div>
<svg style="position:absolute;left:0px;top:0px;" width="1920" height="700"><rect x="1894" y="83.5" width="1" height="1" fill="#b0b0b0"/><rect x="1894" y="86" width="1" height="1" fill="#b0b0b0"/><rect x="1897" y="83.5" width="1" height="1" fill="#b0b0b0"/><rect x="1897" y="86" width="1" height="1" fill="#b0b0b0"/><rect x="1900" y="83.5" width="1" height="1" fill="#b0b0b0"/><rect x="1900" y="86" width="1" height="1" fill="#b0b0b0"/><rect x="1903" y="83.5" width="1" height="1" fill="#b0b0b0"/><rect x="1903" y="86" width="1" height="1" fill="#b0b0b0"/><rect x="1906" y="83.5" width="1" height="1" fill="#b0b0b0"/><rect x="1906" y="86" width="1" height="1" fill="#b0b0b0"/><rect x="1909" y="83.5" width="1" height="1" fill="#b0b0b0"/><rect x="1909" y="86" width="1" height="1" fill="#b0b0b0"/><rect x="1892" y="154" width="18" height="1" fill="#d2d2d2"/><rect x="1892" y="221" width="18" height="1" fill="#d2d2d2"/><rect x="1892" y="258" width="18" height="1" fill="#d2d2d2"/><rect x="1892" y="445" width="18" height="1" fill="#d2d2d2"/><rect x="1892" y="542" width="18" height="1" fill="#d2d2d2"/><rect x="1886.5" y="92" width="29" height="27.3" rx="3" fill="#dfdfdf" stroke="#c6c6c6"/><rect x="1894.5" y="99" width="13" height="12.5" rx="1" fill="#8a8a8a"/><rect x="1895.7" y="100.2" width="3" height="2.9" fill="#e6e6e6"/><rect x="1895.7" y="103.95" width="3" height="2.9" fill="#e6e6e6"/><rect x="1895.7" y="107.7" width="3" height="2.9" fill="#e6e6e6"/><rect x="1899.6" y="100.2" width="3" height="2.9" fill="#e6e6e6"/><rect x="1899.6" y="103.95" width="3" height="2.9" fill="#e6e6e6"/><rect x="1899.6" y="107.7" width="3" height="2.9" fill="#e6e6e6"/><rect x="1903.5" y="100.2" width="3" height="2.9" fill="#e6e6e6"/><rect x="1903.5" y="103.95" width="3" height="2.9" fill="#e6e6e6"/><rect x="1903.5" y="107.7" width="3" height="2.9" fill="#e6e6e6"/><g fill="none" stroke="#222" stroke-width="1"><path d="M1891 134.7 l10 -4.8 l10 4.8 l-10 4.8z M1894.3 133.1 l10 4.8 M1897.7 131.5 l10 4.8 M1894.3 136.3 l10 -4.8 M1897.7 137.9 l10 -4.8"/></g><path d="M1891.2 162.2 L1895 166" stroke="#222" stroke-width="1.3"/><path d="M1895.3 166.3 l-3.6 0 l3.6 -3.6 z" fill="#222"/><path d="M1910.8 162.2 L1907 166" stroke="#222" stroke-width="1.3"/><path d="M1906.7 166.3 l3.6 0 l-3.6 -3.6 z" fill="#222"/><path d="M1891.2 181.8 L1895 178" stroke="#222" stroke-width="1.3"/><path d="M1895.3 177.7 l-3.6 0 l3.6 3.6 z" fill="#222"/><path d="M1910.8 181.8 L1907 178" stroke="#222" stroke-width="1.3"/><path d="M1906.7 177.7 l3.6 0 l-3.6 3.6 z" fill="#222"/><g fill="none" stroke="#222" stroke-width="0.8"><path d="M1894.5 168.5 l6.5 -2.6 l6.5 2.6 v6.5 l-6.5 3.4 l-6.5 -3.4z M1894.5 175 l6.5 -2.8 l6.5 2.8 M1901 165.9 v6.3"/><path d="M1894.5 170.1 l6.5 -2.7 l6.5 2.7"/><path d="M1894.5 171.7 l6.5 -2.7 l6.5 2.7"/><path d="M1894.5 173.3 l6.5 -2.7 l6.5 2.7"/><path d="M1896.67 167.63 v6.4 M1905.33 167.63 v6.4"/><path d="M1898.84 166.76 v6.4 M1903.16 166.76 v6.4"/></g><path d="M1891.2 192.2 L1895 196" stroke="#222" stroke-width="1.3"/><path d="M1895.3 196.3 l-3.6 0 l3.6 -3.6 z" fill="#222"/><path d="M1910.8 192.2 L1907 196" stroke="#222" stroke-width="1.3"/><path d="M1906.7 196.3 l3.6 0 l-3.6 -3.6 z" fill="#222"/><path d="M1891.2 211.8 L1895 208" stroke="#222" stroke-width="1.3"/><path d="M1895.3 207.7 l-3.6 0 l3.6 3.6 z" fill="#222"/><path d="M1910.8 211.8 L1907 208" stroke="#222" stroke-width="1.3"/><path d="M1906.7 207.7 l3.6 0 l-3.6 3.6 z" fill="#222"/><g fill="none" stroke="#222" stroke-width="1.1"><path d="M1895 198.5 l6 -3 l6 3 v7 l-6 3.2 l-6 -3.2z M1895 198.5 l6 3.2 l6 -3.2 M1901 201.7 v7"/></g><rect x="1886.5" y="225.3" width="29" height="28" rx="3" fill="#dfdfdf" stroke="#c6c6c6"/><path d="M1897 231.5 v12.6 l3 -2.9 l2.6 5.6 l2.2 -1 l-2.6 -5.5 h4.3z" fill="#111"/><rect x="1892.5" y="267.5" width="17" height="16" fill="none" stroke="#222" stroke-width="1.5" stroke-dasharray="2 1.6"/><circle cx="1892.5" cy="267.5" r="1.5" fill="#f5f5f5" stroke="#222" stroke-width="0.8"/><circle cx="1909.5" cy="267.5" r="1.5" fill="#f5f5f5" stroke="#222" stroke-width="0.8"/><circle cx="1892.5" cy="283.5" r="1.5" fill="#f5f5f5" stroke="#222" stroke-width="0.8"/><circle cx="1909.5" cy="283.5" r="1.5" fill="#f5f5f5" stroke="#222" stroke-width="0.8"/><circle cx="1901" cy="275.7" r="1.6" fill="#222"/><path d="M1892.5 297.5 h17.5 l-6.5 8 l6.5 8.5 h-17.5z" fill="none" stroke="#222" stroke-width="1.5" stroke-dasharray="2 1.6"/><path d="M1895.5 327.5 c3.5 -1.5 5.5 2.5 9 3.5 c5 1.5 6.5 8 3 11.5 c-3.5 3.5 -10 2.5 -12 -3 c-1.5 -4 -5 -9 0 -12z" fill="none" stroke="#222" stroke-width="1.5" stroke-dasharray="2 1.6"/><rect x="1893.5" y="357.5" width="15" height="17" fill="none" stroke="#222" stroke-width="1.2"/><path d="M1893.5 370.5 h15" stroke="#222" stroke-width="1"/><path d="M1893.5 372.5 h15" stroke="#999" stroke-width="0.8"/><circle cx="1901" cy="366" r="1.5" fill="#888" stroke="#444" stroke-width="0.5"/><circle cx="1893.5" cy="357.5" r="1.4" fill="#f5f5f5" stroke="#222" stroke-width="0.8"/><circle cx="1908.5" cy="357.5" r="1.4" fill="#f5f5f5" stroke="#222" stroke-width="0.8"/><circle cx="1893.5" cy="374.5" r="1.4" fill="#f5f5f5" stroke="#222" stroke-width="0.8"/><circle cx="1908.5" cy="374.5" r="1.4" fill="#f5f5f5" stroke="#222" stroke-width="0.8"/><rect x="1893.5" y="386.5" width="15" height="18" fill="none" stroke="#222" stroke-width="1.2"/><path d="M1893 388.5 l17 8 l-2.5 6 l-17 -8z" fill="none" stroke="#222" stroke-width="1" stroke-dasharray="2 1.2"/><circle cx="1901" cy="396" r="1.6" fill="#222"/><circle cx="1892" cy="396" r="1.2" fill="none" stroke="#222" stroke-width="0.7"/><circle cx="1910" cy="396" r="1.2" fill="none" stroke="#222" stroke-width="0.7"/><path d="M1898 419 l9.5 7.5 l-4 6.5 l-9.5 -7.5z" fill="none" stroke="#222" stroke-width="1" stroke-dasharray="2 1.2"/><circle cx="1901" cy="426" r="1.6" fill="#222"/><path d="M1893 433.5 l4 -2.5 M1905 423.5 l5 -3.5" stroke="#222" stroke-width="1.4" stroke-dasharray="1.4 1.6"/><circle cx="1898" cy="419" r="1.2" fill="#f5f5f5" stroke="#222" stroke-width="0.7"/><circle cx="1907.5" cy="426.5" r="1.2" fill="#f5f5f5" stroke="#222" stroke-width="0.7"/><circle cx="1903.5" cy="433" r="1.2" fill="#f5f5f5" stroke="#222" stroke-width="0.7"/><circle cx="1894" cy="425.5" r="1.2" fill="#f5f5f5" stroke="#222" stroke-width="0.7"/><g fill="none" stroke="#222" stroke-width="1.2"><circle cx="1901" cy="462.6" r="9.3"/><ellipse cx="1901" cy="462.6" rx="4.6" ry="9.3"/><path d="M1901 453.3 v18.6 M1891.7 462.6 h18.6 M1893.3 457.6 h15.4 M1893.3 467.6 h15.4"/></g><path d="M1892.5 484.5 v17 h17.5" fill="none" stroke="#222" stroke-width="1.2"/><path d="M1894.5 500 v-4.5 l3.5 -4 l2.5 2 l2.5 -3 l2.5 2.5 l2.5 -4.5 l1 2 v9.5z" fill="#222"/><g transform="translate(1901 522.5) rotate(-32)"><rect x="-10" y="-3.2" width="20" height="6.4" fill="none" stroke="#222" stroke-width="1.3"/><path d="M-7 3 v-2.6 M-4 3 v-2 M-1 3 v-2.6 M2 3 v-2 M5 3 v-2.6 M8 3 v-2" stroke="#222" stroke-width="0.7"/></g><rect x="1886.5" y="546" width="29" height="28.5" rx="3" fill="#dfdfdf" stroke="#c6c6c6"/><defs><linearGradient id="cbi" x1="0" x2="1" y1="0" y2="0"><stop offset="0" stop-color="#e03c14"/><stop offset="0.25" stop-color="#e88a1e"/><stop offset="0.45" stop-color="#5ab43c"/><stop offset="0.65" stop-color="#1ea0a0"/><stop offset="1" stop-color="#1e50c8"/></linearGradient></defs><rect x="1892" y="555" width="18.3" height="9.8" fill="#2a2a2a"/><rect x="1893.3" y="556.5" width="15.7" height="6.8" fill="url(#cbi)"/><g fill="none" stroke="#7a7a7a" stroke-width="0.8"><path d="M1892.5 584 l8.5 -3.6 l8.5 3.6 v9.5 l-8.5 5 l-8.5 -5z M1892.5 593.5 l8.5 -3.8 l8.5 3.8 M1901 580.4 v9.3"/><path d="M1892.5 586.38 l8.5 -3.7 l8.5 3.7"/><path d="M1892.5 588.76 l8.5 -3.7 l8.5 3.7"/><path d="M1892.5 591.14 l8.5 -3.7 l8.5 3.7"/><path d="M1895.33 582.8 v9.4 M1906.67 582.8 v9.4"/><path d="M1898.16 581.6 v9.4 M1903.84 581.6 v9.4"/></g><g fill="none" stroke="#222" stroke-width="1.9"><path d="M1908 616.2 c-4 -2.4 -13 -1.4 -15.2 2.2 c-0.8 2.2 2 3.8 5.6 4.3"/><path d="M1894.4 623.4 c4 2.2 12 1.4 14.8 -1.8 c1 -1.6 0 -2.8 -2 -3.6"/></g><path d="M1897.5 619.8 l4.6 3.2 l-4.8 3z" fill="#222"/><path d="M1905.2 614 l-4.6 2.2 l4.6 2.6z" fill="#222"/><g fill="none" stroke="#222" stroke-width="1.1"><path d="M1893 646 l8 -3.6 l8 3.6 v9 l-8 3.6 l-8 -3.6z M1893 646 l8 3.2 l8 -3.2 M1901 649.2 v9.4"/></g><circle cx="1893" cy="646" r="1.6" fill="#222"/><circle cx="1901" cy="642.4" r="1.6" fill="#222"/><circle cx="1909" cy="646" r="1.6" fill="#222"/><circle cx="1893" cy="655" r="1.6" fill="#222"/><circle cx="1909" cy="655" r="1.6" fill="#222"/><circle cx="1901" cy="658.6" r="1.6" fill="#222"/><circle cx="1901" cy="649.2" r="1.6" fill="#222"/></svg>
<div class="t" style="left:338.40px;top:697.77px;font-size:11.5px;line-height:14px;letter-spacing:-0.147px;">Slice Editor</div>
<svg style="position:absolute;left:0px;top:0px;" width="1920" height="760"><rect x="1855.5" y="699.5" width="10" height="10" rx="2" fill="#f4f4f4" stroke="#444" stroke-width="1"/><rect x="1857.5" y="703.5" width="4" height="4" fill="none" stroke="#444" stroke-width="1"/><path d="M1859.5 703 v-1.5 h4 v4 h-1.5" fill="none" stroke="#444" stroke-width="1"/><rect x="1869.5" y="699.5" width="10" height="10" rx="2" fill="#f4f4f4" stroke="#444" stroke-width="1"/><path d="M1872 702 l5 5 M1877 702 l-5 5" stroke="#333" stroke-width="1.6"/><rect x="372" y="729" width="1" height="11" fill="#cdcdcd"/><rect x="479" y="729" width="1" height="11" fill="#cdcdcd"/><rect x="561" y="729" width="1" height="11" fill="#cdcdcd"/><rect x="775" y="729" width="1" height="11" fill="#cdcdcd"/><rect x="832.5" y="729" width="1" height="11" fill="#cdcdcd"/><rect x="889.5" y="729" width="1" height="11" fill="#cdcdcd"/><rect x="946.5" y="729" width="1" height="11" fill="#cdcdcd"/><rect x="1003.5" y="729" width="1" height="11" fill="#cdcdcd"/><rect x="1035" y="729" width="1" height="11" fill="#cdcdcd"/><path d="M350 728.5 h10.5 l2 2 v9.5 h-12.5z" fill="none" stroke="#a9a9a9" stroke-width="1.2"/><rect x="353" y="728.5" width="6" height="4" fill="none" stroke="#a9a9a9" stroke-width="1"/><rect x="356.3" y="729.2" width="1.6" height="2.6" fill="#a9a9a9"/><path d="M381.5 735 l6.5 -6 l6.5 6 M383.5 733.5 v6.5 h9 v-6.5 M386.5 740 v-4 h3 v4" fill="none" stroke="#a9a9a9" stroke-width="1.3"/><rect x="401.5" y="723.5" width="23" height="22" rx="2.5" fill="#dcdcdc" stroke="#cbcbcb"/><path d="M410 729.5 v10 l2.4 -2.3 l2 4.4 l1.7 -0.8 l-2 -4.3 h3.4z" fill="#8a8a8a"/><circle cx="436.5" cy="732.5" r="4" fill="none" stroke="#a9a9a9" stroke-width="1.4"/><path d="M439.5 735.5 l4 4.2" stroke="#a9a9a9" stroke-width="1.8"/><g transform="translate(463.3 734) rotate(-35)"><rect x="-7" y="-2.4" width="14" height="4.8" fill="none" stroke="#a9a9a9" stroke-width="1"/><path d="M-4 2 v-2 M-1 2 v-2 M2 2 v-2 M5 2 v-2" stroke="#a9a9a9" stroke-width="0.6"/></g><rect x="488.5" y="727" width="5" height="6.5" fill="none" stroke="#bcbcbc" stroke-width="1"/><path d="M496 732 v8 l2 -1.9 l1.6 3.6 l1.4 -0.6 l-1.6 -3.6 h2.8z" fill="#b0b0b0"/><circle cx="515.5" cy="730" r="3.4" fill="#c8c8c8" stroke="#bcbcbc" stroke-width="0.8"/><path d="M521 732 v8 l2 -1.9 l1.6 3.6 l1.4 -0.6 l-1.6 -3.6 h2.8z" fill="#b0b0b0"/><circle cx="540.5" cy="729.5" r="2.6" fill="#c0c0c0"/><circle cx="540.5" cy="729.5" r="3.6" fill="none" stroke="#c4c4c4" stroke-width="0.7" stroke-dasharray="1 1"/><circle cx="548" cy="736.5" r="3.8" fill="none" stroke="#b4b4b4" stroke-width="1"/><path d="M546.3 738.4 l3.6 -3.8 l-1 3.2z" fill="#b0b0b0"/><path d="M678.5 736 l7 -6.5 l5.5 3.8 l-6 6.2 h-4z M682 733 l5 4" fill="none" stroke="#a9a9a9" stroke-width="1.2"/><path d="M684 739.6 h8" stroke="#a9a9a9" stroke-width="1"/><rect x="703.5" y="728.5" width="12" height="11" fill="#d0d0d0" stroke="#8c8c8c" stroke-width="1.2" stroke-dasharray="1.6 1.2"/><rect x="706.5" y="733" width="6" height="1.8" fill="#8c8c8c"/><path d="M714.5 740.5 h5 l-2.5 2.6z" fill="#999"/><path d="M729.5 728.5 c3 -1 4.5 1.5 7 2.5 c3.5 1 4.5 5.5 2 8 c-2.500 2.5 -7 2 -8.500 -2 c-1 -3 -3.500 -6.500 -0.500 -8.500z" fill="#d0d0d0" stroke="#8c8c8c" stroke-width="1.2" stroke-dasharray="1.6 1.2"/><rect x="732" y="734" width="5.5" height="1.8" fill="#8c8c8c"/><path d="M739 740.5 h5 l-2.5 2.6z" fill="#999"/><path d="M752.5 728.5 h12.5 l-5 5.5 l5 5.500 h-12.500z" fill="#d0d0d0" stroke="#8c8c8c" stroke-width="1.2" stroke-dasharray="1.6 1.2"/><rect x="755" y="733.2" width="6" height="1.8" fill="#8c8c8c"/><path d="M763.5 740.5 h5 l-2.5 2.6z" fill="#999"/><path d="M786 731.500 a5.300 5.300 0 1 1 2 7.800" fill="none" stroke="#a9a9a9" stroke-width="1.3"/><path d="M784.300 728.800 l0.500 4.600 l4.200 -1.600z" fill="#a9a9a9"/><path d="M820.700 731.500 a5.300 5.300 0 1 0 -2 7.800" fill="none" stroke="#a9a9a9" stroke-width="1.3"/><path d="M822.400 728.800 l-0.500 4.600 l-4.200 -1.600z" fill="#a9a9a9"/><path d="M842 733.700 h7" stroke="#a9a9a9" stroke-width="1.2"/><circle cx="845" cy="733.700" r="1.5" fill="#a9a9a9"/><circle cx="851.5" cy="733.700" r="3" fill="#a9a9a9"/><path d="M853 740.5 h5 l-2.5 2.6z" fill="#999"/><rect x="866.5" y="730" width="13" height="6.500" fill="#d8cf9c" stroke="#b8b8b8" stroke-width="0.800"/><rect x="871" y="731.300" width="7" height="4" fill="#9fd8cf"/><rect x="877" y="732.500" width="1.600" height="1.600" fill="#7aa0e0"/><path d="M878.5 740.5 h5 l-2.5 2.6z" fill="#999"/><path d="M899 733.700 h7" stroke="#a9a9a9" stroke-width="1.2"/><circle cx="902" cy="733.700" r="1.5" fill="#a9a9a9"/><circle cx="908.5" cy="733.700" r="3" fill="#a9a9a9"/><path d="M910 740.5 h5 l-2.5 2.6z" fill="#999"/><rect x="923.5" y="730" width="13" height="6.500" fill="#d8cf9c" stroke="#b8b8b8" stroke-width="0.800"/><rect x="928" y="731.300" width="7" height="4" fill="#9fd8cf"/><rect x="934" y="732.500" width="1.600" height="1.600" fill="#7aa0e0"/><path d="M935.5 740.5 h5 l-2.5 2.6z" fill="#999"/><path d="M956 740 v-6.500 h8" fill="none" stroke="#a9a9a9" stroke-width="1.600"/><path d="M963.500 730 l5 3.500 l-5 3.500z" fill="#a9a9a9"/><path d="M992.500 740 v-6.500 h-8" fill="none" stroke="#a9a9a9" stroke-width="1.600"/><path d="M985 730 l-5 3.500 l5 3.500z" fill="#a9a9a9"/><path d="M1015 731.500 h11 l-4.200 4.500 v5 l-2.600 -1.600 v-3.400z" fill="#b4b4b4"/><circle cx="1013" cy="729.500" r="1.800" fill="none" stroke="#bcbcbc" stroke-width="0.800"/><path d="M1014.500 731 l2 2" stroke="#bcbcbc" stroke-width="0.800"/><path d="M1043.500 730.500 h3.500 l1.200 -1.800 h5 l1.200 1.800 h3.500 v9 h-14.400z" fill="#a9a9a9"/><circle cx="1050.700" cy="735" r="2.600" fill="#f0f0f0"/><circle cx="1050.700" cy="735" r="1.500" fill="#a9a9a9"/><path d="M1830.500 726.500 h6.500 l3.500 3.500 v11 h-10z M1837 726.500 v3.500 h3.500" fill="none" stroke="#c4c4c4" stroke-width="1"/><path d="M1835.500 733 v5 M1835.500 730.800 v1" stroke="#c0c0c0" stroke-width="1.300"/><rect x="1854.500" y="728.500" width="11" height="8" fill="none" stroke="#bcbcbc" stroke-width="1"/><path d="M1857 731.200 h6 M1857 733.800 h6" stroke="#bcbcbc" stroke-width="0.900"/><path d="M1862.500 739.300 h6 l-3 3z" fill="#9a9a9a"/></svg>
<div style="position:absolute;left:565.5px;top:723.5px;width:105px;height:21px;background:linear-gradient(#fbfbfb,#efefef);border:1px solid #c2c2c2;border-radius:3px;box-sizing:border-box"></div>
<div class="t" style="left:570.50px;top:727.77px;font-size:11.5px;line-height:14px;letter-spacing:-0.097px;color:#6a6a6a;">Normal Edit</div>
<svg style="position:absolute;left:655.5px;top:732px;" width="10" height="6"><path d="M0.500 0.300 h8 l-4 3.900z" fill="#8a8a8a"/></svg>
<div style="position:absolute;left:340.5px;top:750.8px;width:1535.2px;height:214.6px;background:#000"></div>
<div style="position:absolute;left:341px;top:752px;width:1534.7px;height:1px;background:#8c8c8c"></div>
<div style="position:absolute;left:340.5px;top:751px;width:1px;height:214.4px;background:#9a9a9a"></div>
<div style="position:absolute;left:1100px;top:691px;width:1px;height:1px;background:#a8a8a8"></div><div style="position:absolute;left:1103px;top:691px;width:1px;height:1px;background:#a8a8a8"></div><div style="position:absolute;left:1106px;top:691px;width:1px;height:1px;background:#a8a8a8"></div><div style="position:absolute;left:1109px;top:691px;width:1px;height:1px;background:#a8a8a8"></div><div style="position:absolute;left:1112px;top:691px;width:1px;height:1px;background:#a8a8a8"></div><div style="position:absolute;left:1115px;top:691px;width:1px;height:1px;background:#a8a8a8"></div>
<svg style="position:absolute;left:0px;top:0px;" width="1920" height="1000"><rect x="484.70" y="761.7" width="1" height="160.6" fill="#303030"/><rect x="556.30" y="761.7" width="1" height="160.6" fill="#303030"/><rect x="627.90" y="761.7" width="1" height="160.6" fill="#303030"/><rect x="699.50" y="761.7" width="1" height="160.6" fill="#303030"/><rect x="771.10" y="761.7" width="1" height="160.6" fill="#303030"/><rect x="842.70" y="761.7" width="1" height="160.6" fill="#303030"/><rect x="914.30" y="761.7" width="1" height="160.6" fill="#303030"/><rect x="985.90" y="761.7" width="1" height="160.6" fill="#303030"/><rect x="1057.50" y="761.7" width="1" height="160.6" fill="#303030"/><rect x="1129.10" y="761.7" width="1" height="160.6" fill="#303030"/><rect x="1200.70" y="761.7" width="1" height="160.6" fill="#303030"/><rect x="1272.30" y="761.7" width="1" height="160.6" fill="#303030"/><rect x="1343.90" y="761.7" width="1" height="160.6" fill="#303030"/><rect x="1415.50" y="761.7" width="1" height="160.6" fill="#303030"/><rect x="1487.10" y="761.7" width="1" height="160.6" fill="#303030"/><rect x="1558.70" y="761.7" width="1" height="160.6" fill="#303030"/><rect x="1630.30" y="761.7" width="1" height="160.6" fill="#303030"/><rect x="1701.90" y="761.7" width="1" height="160.6" fill="#303030"/><rect x="1773.50" y="761.7" width="1" height="160.6" fill="#303030"/><rect x="413.6" y="774.20" width="1432" height="1" fill="#303030"/><rect x="413.6" y="801.02" width="1432" height="1" fill="#303030"/><rect x="413.6" y="827.84" width="1432" height="1" fill="#303030"/><rect x="413.6" y="854.66" width="1432" height="1" fill="#303030"/><rect x="413.6" y="881.48" width="1432" height="1" fill="#303030"/><rect x="413.6" y="908.30" width="1432" height="1" fill="#303030"/><rect x="413.6" y="761.7" width="1432" height="160.6" fill="none" stroke="#b8b8b8" stroke-width="1"/></svg>
<div class="t" style="left:390.52px;top:770.24px;font-size:9.7px;line-height:12px;color:#a0a0a0;letter-spacing:-0.3px;">0.0</div>
<div class="t" style="left:390.52px;top:797.06px;font-size:9.7px;line-height:12px;color:#a0a0a0;letter-spacing:-0.3px;">0.2</div>
<div class="t" style="left:390.52px;top:823.88px;font-size:9.7px;line-height:12px;color:#a0a0a0;letter-spacing:-0.3px;">0.4</div>
<div class="t" style="left:390.52px;top:850.70px;font-size:9.7px;line-height:12px;color:#a0a0a0;letter-spacing:-0.3px;">0.6</div>
<div class="t" style="left:390.52px;top:877.52px;font-size:9.7px;line-height:12px;color:#a0a0a0;letter-spacing:-0.3px;">0.8</div>
<div class="t" style="left:390.52px;top:904.34px;font-size:9.7px;line-height:12px;color:#a0a0a0;letter-spacing:-0.3px;">1.0</div>
<div class="t" style="left:411.32px;top:927.54px;font-size:10px;line-height:12px;color:#9c9c9c;letter-spacing:-0.3px;">0</div>
<div class="t" style="left:480.14px;top:927.54px;font-size:10px;line-height:12px;color:#9c9c9c;letter-spacing:-0.3px;">50</div>
<div class="t" style="left:548.96px;top:927.54px;font-size:10px;line-height:12px;color:#9c9c9c;letter-spacing:-0.3px;">100</div>
<div class="t" style="left:620.56px;top:927.54px;font-size:10px;line-height:12px;color:#9c9c9c;letter-spacing:-0.3px;">150</div>
<div class="t" style="left:692.16px;top:927.54px;font-size:10px;line-height:12px;color:#9c9c9c;letter-spacing:-0.3px;">200</div>
<div class="t" style="left:763.76px;top:927.54px;font-size:10px;line-height:12px;color:#9c9c9c;letter-spacing:-0.3px;">250</div>
<div class="t" style="left:835.36px;top:927.54px;font-size:10px;line-height:12px;color:#9c9c9c;letter-spacing:-0.3px;">300</div>
<div class="t" style="left:906.96px;top:927.54px;font-size:10px;line-height:12px;color:#9c9c9c;letter-spacing:-0.3px;">350</div>
<div class="t" style="left:978.56px;top:927.54px;font-size:10px;line-height:12px;color:#9c9c9c;letter-spacing:-0.3px;">400</div>
<div class="t" style="left:1050.16px;top:927.54px;font-size:10px;line-height:12px;color:#9c9c9c;letter-spacing:-0.3px;">450</div>
<div class="t" style="left:1121.76px;top:927.54px;font-size:10px;line-height:12px;color:#9c9c9c;letter-spacing:-0.3px;">500</div>
<div class="t" style="left:1193.36px;top:927.54px;font-size:10px;line-height:12px;color:#9c9c9c;letter-spacing:-0.3px;">550</div>
<div class="t" style="left:1264.96px;top:927.54px;font-size:10px;line-height:12px;color:#9c9c9c;letter-spacing:-0.3px;">600</div>
<div class="t" style="left:1336.56px;top:927.54px;font-size:10px;line-height:12px;color:#9c9c9c;letter-spacing:-0.3px;">650</div>
<div class="t" style="left:1408.16px;top:927.54px;font-size:10px;line-height:12px;color:#9c9c9c;letter-spacing:-0.3px;">700</div>
<div class="t" style="left:1479.76px;top:927.54px;font-size:10px;line-height:12px;color:#9c9c9c;letter-spacing:-0.3px;">750</div>
<div class="t" style="left:1551.36px;top:927.54px;font-size:10px;line-height:12px;color:#9c9c9c;letter-spacing:-0.3px;">800</div>
<div class="t" style="left:1622.96px;top:927.54px;font-size:10px;line-height:12px;color:#9c9c9c;letter-spacing:-0.3px;">850</div>
<div class="t" style="left:1694.56px;top:927.54px;font-size:10px;line-height:12px;color:#9c9c9c;letter-spacing:-0.3px;">900</div>
<div class="t" style="left:1766.16px;top:927.54px;font-size:10px;line-height:12px;color:#9c9c9c;letter-spacing:-0.3px;">950</div>
<div class="t" style="left:1834.98px;top:927.54px;font-size:10px;line-height:12px;color:#9c9c9c;letter-spacing:-0.3px;">1000</div>
<div class="t" style="left:1088.00px;top:949.71px;font-size:9.5px;line-height:12px;letter-spacing:-0.476px;color:#8c8c8c;letter-spacing:-0.45px;">Slice Across Track (m)</div>
<div class="t" style="left:352px;top:841px;font-size:9.500px;color:#8c8c8c;letter-spacing:-0.450px;transform:translate(-50%,-50%) rotate(-90deg);line-height:12px">Depth (m)</div>
<div style="position:absolute;left:499px;top:994.5px;width:1384px;height:1px;background:#c6c6c6"></div>
<div style="position:absolute;left:334.5px;top:995px;width:85px;height:19.5px;background:#e2e2e2;border:1px solid #c3c3c3;border-top-color:#d0d0d0;border-radius:0 0 3px 3px;box-sizing:border-box"></div>
<div class="t" style="left:345.80px;top:998.22px;font-size:11.5px;line-height:14px;letter-spacing:-0.073px;">Geo Picking</div>
<div style="position:absolute;left:419.5px;top:993px;width:80.5px;height:24px;background:#f6f6f6;border:1px solid #c3c3c3;border-top:none;border-radius:0 0 3px 3px;box-sizing:border-box"></div>
<div class="t" style="left:431.25px;top:999.02px;font-size:11.5px;line-height:14px;letter-spacing:-0.097px;">Slice Editor</div>
<div style="position:absolute;left:0px;top:1018px;width:1920px;height:22px;background:#f0f0f0"></div>
<div class="t" style="left:12.00px;top:1020.52px;font-size:11.5px;line-height:14px;letter-spacing:0.162px;">Information not available.</div>
<div class="t" style="left:1063.00px;top:1020.52px;font-size:11.5px;line-height:14px;letter-spacing:0.011px;">Auto Import: OFF</div>
<div class="t" style="left:1638.00px;top:1020.52px;font-size:11.5px;line-height:14px;letter-spacing:-0.155px;">Tiles Loading:</div>
<div class="t" style="left:1729.00px;top:1020.52px;font-size:11.5px;line-height:14px;">0</div>
<svg style="position:absolute;left:0px;top:0px;" width="1920" height="1040"><rect x="1752.5" y="1023.5" width="6" height="10.5" rx="1" fill="#f2f2f2" stroke="#a4a4a4" stroke-width="1.2"/><rect x="1760.35" y="1023.5" width="6" height="10.5" rx="1" fill="#f2f2f2" stroke="#a4a4a4" stroke-width="1.2"/><rect x="1768.2" y="1023.5" width="6" height="10.5" rx="1" fill="#f2f2f2" stroke="#a4a4a4" stroke-width="1.2"/><rect x="1776.05" y="1023.5" width="6" height="10.5" rx="1" fill="#f2f2f2" stroke="#a4a4a4" stroke-width="1.2"/><rect x="1783.9" y="1023.5" width="6" height="10.5" rx="1" fill="#f2f2f2" stroke="#a4a4a4" stroke-width="1.2"/><rect x="1791.75" y="1023.5" width="6" height="10.5" rx="1" fill="#f2f2f2" stroke="#a4a4a4" stroke-width="1.2"/><rect x="1799.6" y="1023.5" width="6" height="10.5" rx="1" fill="#f2f2f2" stroke="#a4a4a4" stroke-width="1.2"/><rect x="1807.45" y="1023.5" width="6" height="10.5" rx="1" fill="#f2f2f2" stroke="#a4a4a4" stroke-width="1.2"/><rect x="1815.3" y="1023.5" width="6" height="10.5" rx="1" fill="#f2f2f2" stroke="#a4a4a4" stroke-width="1.2"/><rect x="1823.15" y="1023.5" width="6" height="10.5" rx="1" fill="#f2f2f2" stroke="#a4a4a4" stroke-width="1.2"/><path d="M1903.5 1029 l4 5 l8.5 -12" fill="none" stroke="#1e8c1e" stroke-width="2.6"/><path d="M1904 1030.5 l4 4.5 l8.5 -11.5" fill="none" stroke="#646464" stroke-width="1" opacity="0.6"/></svg>
<div class="t" style="left:1837.00px;top:1020.69px;font-size:11px;line-height:14px;letter-spacing:-0.010px;">757.0 MB</div>
</body></html>
